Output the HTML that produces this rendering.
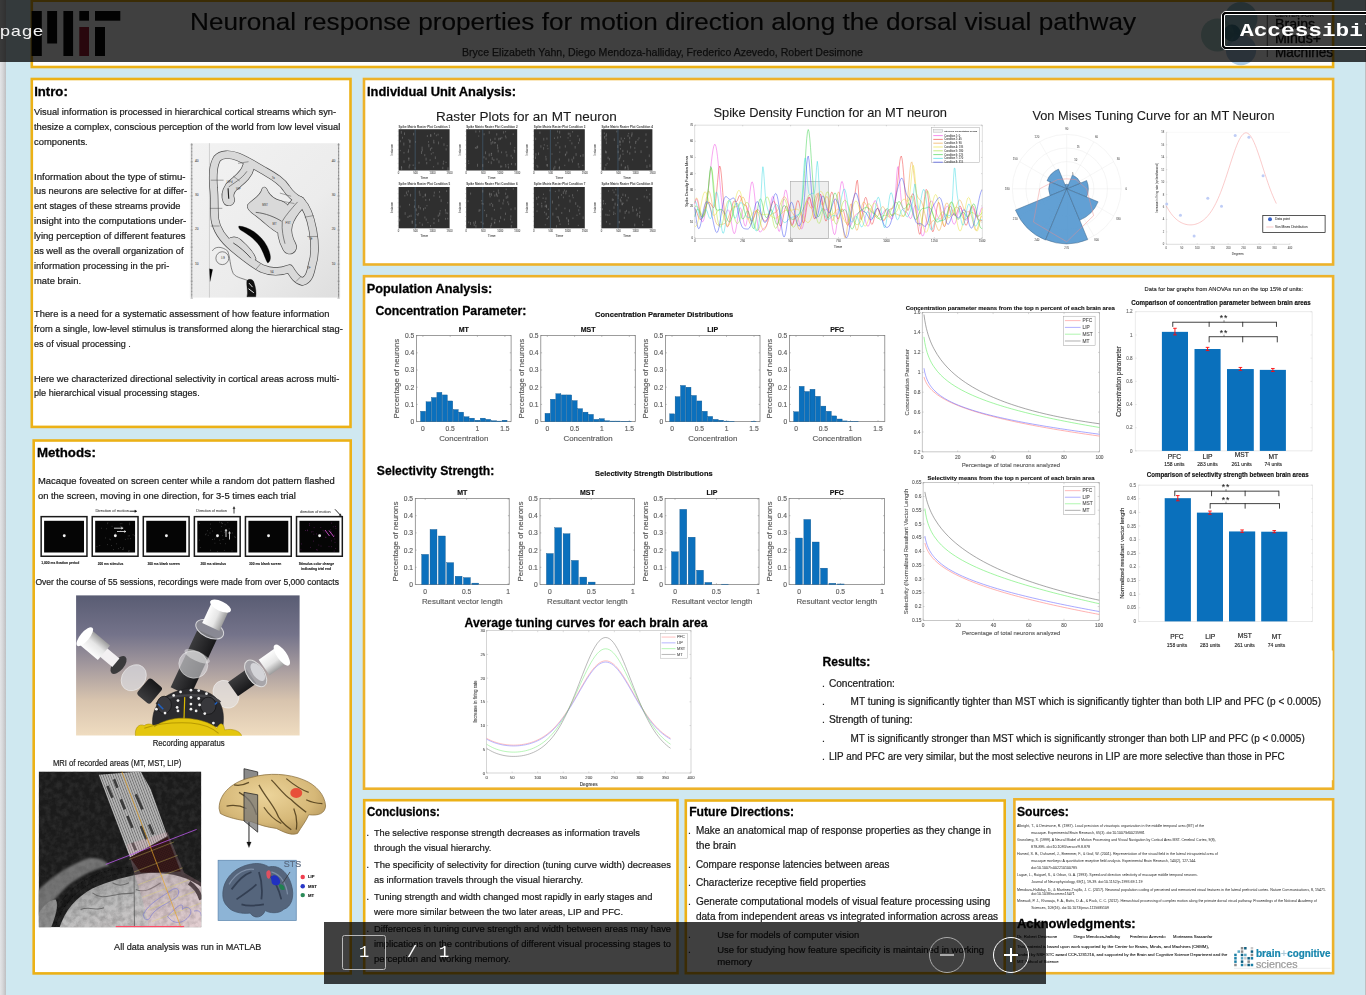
<!DOCTYPE html>
<html lang="en"><head><meta charset="utf-8"><title>Neuronal response properties for motion direction along the dorsal visual pathway</title>
<style>
html,body{margin:0;padding:0}
body{width:1366px;height:995px;overflow:hidden;position:relative;background:#e6e7e9;font-family:"Liberation Sans",sans-serif}
#shadow{position:absolute;left:0;top:0;width:6px;height:995px;background:linear-gradient(90deg,#e3e5e7 0%,#d6d7d9 45%,#bebfc1 100%)}
#paper{position:absolute;left:6px;top:0;width:1359px;height:995px;background:#cfe8f0}
#redge{position:absolute;left:1365px;top:0;width:1px;height:995px;background:#bdbfc1}
svg#poster{position:absolute;left:0;top:0;filter:blur(.38px)}
svg text{font-family:"Liberation Sans",sans-serif}
#topbar{position:absolute;left:0;top:0;width:1366px;height:61.5px;background:rgba(0,0,0,.75);color:#fff;font-family:"Liberation Mono",monospace}
#skip{position:absolute;left:-120px;width:163.4px;text-align:right;top:21.9px;font-size:14.6px;line-height:20px;white-space:nowrap;color:#f2f2f2;transform:scaleX(1.256);transform-origin:100% 50%}
#acc{position:absolute;left:1221px;top:11px;height:39px;width:240px;box-sizing:border-box;border:1px solid #fff;border-radius:5px;background:transparent;padding:0}
#acc i{position:absolute;left:0;top:0;right:0;bottom:0;border:2px solid #000;border-radius:4px;display:block}
#acc b{position:absolute;left:2px;top:2px;right:2px;bottom:2px;border:1px solid #fff;border-radius:2px;display:block;font:bold 19px/32px "Liberation Mono",monospace;color:#fff;padding-left:15px;white-space:nowrap;text-align:left}
#acc b span{display:inline-block;transform:scaleX(1.198);transform-origin:0 50%}
#botbar{position:absolute;left:324px;top:922px;width:722px;height:62px;background:rgba(0,0,0,.75);color:#fff;font-family:"Liberation Mono",monospace}
#pg{position:absolute;left:18px;top:13px;width:44px;height:35px;box-sizing:border-box;border:1px solid #b9b9b9;border-radius:2.5px;font-size:17px;line-height:33px;text-align:center;color:#fff}
#sl{position:absolute;left:80px;top:13px;width:16px;font-size:17px;line-height:35px;text-align:center}
#tot{position:absolute;left:112px;top:13px;width:16px;font-size:17px;line-height:35px;text-align:center}
.zb{position:absolute;top:15px;width:36px;height:36px;box-sizing:border-box;border-radius:50%;border:1.3px solid #fff}
.zb:before{content:"";position:absolute;left:10px;top:16.4px;width:14px;height:2px;background:#fff}
#zin:after{content:"";position:absolute;left:16px;top:10.4px;width:2px;height:14px;background:#fff}
#zout{left:605px;border-color:#a9a9a9}
#zout:before{background:#a9a9a9}
#zin{left:668.5px}
</style></head>
<body>
<div id="shadow"></div><div id="paper"></div><div id="redge"></div>
<svg id="poster" width="1366" height="995" viewBox="0 0 1366 995">
<rect x="31.8" y="0.7" width="1301.3" height="66.3" fill="#fff" stroke="#ecb116" stroke-width="2.6" />
<rect x="31.8" y="79" width="318.7" height="347.9" fill="#fff" stroke="#ecb116" stroke-width="2.6" />
<rect x="33.7" y="440.5" width="317" height="532.9" fill="#fff" stroke="#ecb116" stroke-width="2.6" />
<rect x="364" y="79" width="969.1" height="185.5" fill="#fff" stroke="#edb22a" stroke-width="2.6" />
<rect x="364" y="276.2" width="969.1" height="512.5" fill="#fff" stroke="#edb22a" stroke-width="2.6" />
<rect x="364.2" y="800.2" width="313.3" height="173" fill="#fff" stroke="#ecb116" stroke-width="2.6" />
<rect x="685.8" y="800.5" width="318.9" height="172.7" fill="#fff" stroke="#ecb116" stroke-width="2.6" />
<rect x="1014.4" y="799.3" width="318.7" height="173.9" fill="#fff" stroke="#edb22a" stroke-width="2.6" />
<rect x="31.6" y="11" width="10.2" height="45" fill="#0a0a0a" />
<rect x="47.2" y="11" width="9.9" height="32.5" fill="#0a0a0a" />
<rect x="63.4" y="11" width="9.7" height="45" fill="#0a0a0a" />
<rect x="79.3" y="11" width="9.7" height="9.7" fill="#0a0a0a" />
<rect x="79.3" y="27" width="9.7" height="29" fill="#a31f34" />
<rect x="95" y="11" width="25.3" height="9.7" fill="#0a0a0a" />
<rect x="95" y="27" width="10" height="29" fill="#0a0a0a" />
<text x="190" y="30.4" font-size="24.4" textLength="946" lengthAdjust="spacingAndGlyphs" fill="#111" stroke="#111" stroke-width="0.15">Neuronal response properties for motion direction along the dorsal visual pathway</text>
<text x="462" y="56" font-size="11.3" textLength="401" lengthAdjust="spacingAndGlyphs" fill="#333" stroke="#333" stroke-width="0.25">Bryce Elizabeth Yahn, Diego Mendoza-halliday, Frederico Azevedo, Robert Desimone</text>
<defs><pattern id="dots" width="1.6" height="1.6" patternUnits="userSpaceOnUse"><circle cx=".8" cy=".8" r=".62" fill="#fff" fill-opacity=".25"/></pattern></defs>
<g><circle cx="1241" cy="18.5" r="16.5" fill="#1c7a94" fill-opacity=".5"/><circle cx="1217.5" cy="35" r="16.5" fill="#3a8e86" fill-opacity=".42"/><circle cx="1241" cy="50" r="15.2" fill="#3f86c4" fill-opacity=".5"/><circle cx="1232" cy="33" r="8.5" fill="#0d5a72" fill-opacity=".75"/><circle cx="1241" cy="18.5" r="16.5" fill="url(#dots)"/><circle cx="1217.5" cy="35" r="16.5" fill="url(#dots)"/><circle cx="1241" cy="50" r="15.2" fill="url(#dots)"/></g>
<line x1="1267.3" y1="14" x2="1267.3" y2="57" stroke="#444" stroke-width="0.8" />
<text x="1275" y="16.5" font-size="4.6" textLength="39" lengthAdjust="spacingAndGlyphs" fill="#333" stroke="#333" stroke-width="0.1">CENTER FOR</text>
<text x="1275" y="28.6" font-size="14.2" fill="#111" stroke="#111" stroke-width="0.31">Brains</text>
<text x="1275" y="43" font-size="14.2" fill="#111" stroke="#111" stroke-width="0.31">Minds+</text>
<text x="1275" y="57.2" font-size="14.2" textLength="58" lengthAdjust="spacingAndGlyphs" fill="#111" stroke="#111" stroke-width="0.31">Machines</text>
<text x="34.2" y="95.6" font-size="13.2" textLength="33.6" lengthAdjust="spacingAndGlyphs" font-weight="bold" fill="#000" stroke="#000" stroke-width="0.29">Intro:</text>
<text x="34" y="114.85" font-size="9.25" textLength="302.1" lengthAdjust="spacingAndGlyphs" fill="#1a1a1a" stroke="#1a1a1a" stroke-width="0.2">Visual information is processed in hierarchical cortical streams which syn-</text>
<text x="34" y="129.75" font-size="9.25" textLength="306.3" lengthAdjust="spacingAndGlyphs" fill="#1a1a1a" stroke="#1a1a1a" stroke-width="0.2">thesize a complex, conscious perception of the world from low level visual</text>
<text x="34" y="144.6" font-size="9.25" textLength="53.7" lengthAdjust="spacingAndGlyphs" fill="#1a1a1a" stroke="#1a1a1a" stroke-width="0.2">components.</text>
<text x="34" y="179.5" font-size="9.25" textLength="151.5" lengthAdjust="spacingAndGlyphs" fill="#1a1a1a" stroke="#1a1a1a" stroke-width="0.2">Information about the type of stimu-</text>
<text x="34" y="194.4" font-size="9.25" textLength="153.2" lengthAdjust="spacingAndGlyphs" fill="#1a1a1a" stroke="#1a1a1a" stroke-width="0.2">lus neurons are selective for at differ-</text>
<text x="34" y="209.3" font-size="9.25" textLength="146.5" lengthAdjust="spacingAndGlyphs" fill="#1a1a1a" stroke="#1a1a1a" stroke-width="0.2">ent stages of these streams provide</text>
<text x="34" y="224.15" font-size="9.25" textLength="152.3" lengthAdjust="spacingAndGlyphs" fill="#1a1a1a" stroke="#1a1a1a" stroke-width="0.2">insight into the computations under-</text>
<text x="34" y="239" font-size="9.25" textLength="151.5" lengthAdjust="spacingAndGlyphs" fill="#1a1a1a" stroke="#1a1a1a" stroke-width="0.2">lying perception of different features</text>
<text x="34" y="253.9" font-size="9.25" textLength="149.5" lengthAdjust="spacingAndGlyphs" fill="#1a1a1a" stroke="#1a1a1a" stroke-width="0.2">as well as the overall organization of</text>
<text x="34" y="268.75" font-size="9.25" textLength="135.3" lengthAdjust="spacingAndGlyphs" fill="#1a1a1a" stroke="#1a1a1a" stroke-width="0.2">information processing in the pri-</text>
<text x="34" y="283.6" font-size="9.25" textLength="47" lengthAdjust="spacingAndGlyphs" fill="#1a1a1a" stroke="#1a1a1a" stroke-width="0.2">mate brain.</text>
<text x="34" y="317.4" font-size="9.25" textLength="295.4" lengthAdjust="spacingAndGlyphs" fill="#1a1a1a" stroke="#1a1a1a" stroke-width="0.2">There is a need for a systematic assessment of how feature information</text>
<text x="34" y="332.3" font-size="9.25" textLength="308.8" lengthAdjust="spacingAndGlyphs" fill="#1a1a1a" stroke="#1a1a1a" stroke-width="0.2">from a single, low-level stimulus is transformed along the hierarchical stag-</text>
<text x="34" y="347.2" font-size="9.25" textLength="96.8" lengthAdjust="spacingAndGlyphs" fill="#1a1a1a" stroke="#1a1a1a" stroke-width="0.2">es of visual processing .</text>
<text x="34" y="381.6" font-size="9.25" textLength="305.3" lengthAdjust="spacingAndGlyphs" fill="#1a1a1a" stroke="#1a1a1a" stroke-width="0.2">Here we characterized directional selectivity in cortical areas across multi-</text>
<text x="34" y="396.4" font-size="9.25" textLength="165.7" lengthAdjust="spacingAndGlyphs" fill="#1a1a1a" stroke="#1a1a1a" stroke-width="0.2">ple hierarchical visual processing stages.</text>
<g transform="translate(185,140) scale(0.16080)">
<defs><linearGradient id="pap" x1="0" y1="0" x2="1" y2="1"><stop offset="0" stop-color="#f2f2f2"/><stop offset=".6" stop-color="#ececec"/><stop offset="1" stop-color="#dedede"/></linearGradient></defs>
<rect x="30" y="20" width="935" height="960" fill="url(#pap)" />
<line x1="42" y1="20" x2="42" y2="980" stroke="#777" stroke-width="4" />
<line x1="35" y1="30" x2="49" y2="30" stroke="#666" stroke-width="3" />
<line x1="38.5" y1="51.2" x2="45.5" y2="51.2" stroke="#666" stroke-width="3" />
<line x1="38.5" y1="72.4" x2="45.5" y2="72.4" stroke="#666" stroke-width="3" />
<line x1="38.5" y1="93.6" x2="45.5" y2="93.6" stroke="#666" stroke-width="3" />
<line x1="38.5" y1="114.8" x2="45.5" y2="114.8" stroke="#666" stroke-width="3" />
<line x1="35" y1="136" x2="49" y2="136" stroke="#666" stroke-width="3" />
<line x1="38.5" y1="157.2" x2="45.5" y2="157.2" stroke="#666" stroke-width="3" />
<line x1="38.5" y1="178.4" x2="45.5" y2="178.4" stroke="#666" stroke-width="3" />
<line x1="38.5" y1="199.6" x2="45.5" y2="199.6" stroke="#666" stroke-width="3" />
<line x1="38.5" y1="220.8" x2="45.5" y2="220.8" stroke="#666" stroke-width="3" />
<line x1="35" y1="242" x2="49" y2="242" stroke="#666" stroke-width="3" />
<line x1="38.5" y1="263.2" x2="45.5" y2="263.2" stroke="#666" stroke-width="3" />
<line x1="38.5" y1="284.4" x2="45.5" y2="284.4" stroke="#666" stroke-width="3" />
<line x1="38.5" y1="305.6" x2="45.5" y2="305.6" stroke="#666" stroke-width="3" />
<line x1="38.5" y1="326.8" x2="45.5" y2="326.8" stroke="#666" stroke-width="3" />
<line x1="35" y1="348" x2="49" y2="348" stroke="#666" stroke-width="3" />
<line x1="38.5" y1="369.2" x2="45.5" y2="369.2" stroke="#666" stroke-width="3" />
<line x1="38.5" y1="390.4" x2="45.5" y2="390.4" stroke="#666" stroke-width="3" />
<line x1="38.5" y1="411.6" x2="45.5" y2="411.6" stroke="#666" stroke-width="3" />
<line x1="38.5" y1="432.8" x2="45.5" y2="432.8" stroke="#666" stroke-width="3" />
<line x1="35" y1="454" x2="49" y2="454" stroke="#666" stroke-width="3" />
<line x1="38.5" y1="475.2" x2="45.5" y2="475.2" stroke="#666" stroke-width="3" />
<line x1="38.5" y1="496.4" x2="45.5" y2="496.4" stroke="#666" stroke-width="3" />
<line x1="38.5" y1="517.6" x2="45.5" y2="517.6" stroke="#666" stroke-width="3" />
<line x1="38.5" y1="538.8" x2="45.5" y2="538.8" stroke="#666" stroke-width="3" />
<line x1="35" y1="560" x2="49" y2="560" stroke="#666" stroke-width="3" />
<line x1="38.5" y1="581.2" x2="45.5" y2="581.2" stroke="#666" stroke-width="3" />
<line x1="38.5" y1="602.4" x2="45.5" y2="602.4" stroke="#666" stroke-width="3" />
<line x1="38.5" y1="623.6" x2="45.5" y2="623.6" stroke="#666" stroke-width="3" />
<line x1="38.5" y1="644.8" x2="45.5" y2="644.8" stroke="#666" stroke-width="3" />
<line x1="35" y1="666" x2="49" y2="666" stroke="#666" stroke-width="3" />
<line x1="38.5" y1="687.2" x2="45.5" y2="687.2" stroke="#666" stroke-width="3" />
<line x1="38.5" y1="708.4" x2="45.5" y2="708.4" stroke="#666" stroke-width="3" />
<line x1="38.5" y1="729.6" x2="45.5" y2="729.6" stroke="#666" stroke-width="3" />
<line x1="38.5" y1="750.8" x2="45.5" y2="750.8" stroke="#666" stroke-width="3" />
<line x1="35" y1="772" x2="49" y2="772" stroke="#666" stroke-width="3" />
<line x1="38.5" y1="793.2" x2="45.5" y2="793.2" stroke="#666" stroke-width="3" />
<line x1="38.5" y1="814.4" x2="45.5" y2="814.4" stroke="#666" stroke-width="3" />
<line x1="38.5" y1="835.6" x2="45.5" y2="835.6" stroke="#666" stroke-width="3" />
<line x1="38.5" y1="856.8" x2="45.5" y2="856.8" stroke="#666" stroke-width="3" />
<line x1="35" y1="878" x2="49" y2="878" stroke="#666" stroke-width="3" />
<line x1="38.5" y1="899.2" x2="45.5" y2="899.2" stroke="#666" stroke-width="3" />
<line x1="38.5" y1="920.4" x2="45.5" y2="920.4" stroke="#666" stroke-width="3" />
<line x1="38.5" y1="941.6" x2="45.5" y2="941.6" stroke="#666" stroke-width="3" />
<line x1="38.5" y1="962.8" x2="45.5" y2="962.8" stroke="#666" stroke-width="3" />
<line x1="35" y1="984" x2="49" y2="984" stroke="#666" stroke-width="3" />
<line x1="955" y1="20" x2="955" y2="980" stroke="#777" stroke-width="4" />
<line x1="948" y1="30" x2="962" y2="30" stroke="#666" stroke-width="3" />
<line x1="951.5" y1="51.2" x2="958.5" y2="51.2" stroke="#666" stroke-width="3" />
<line x1="951.5" y1="72.4" x2="958.5" y2="72.4" stroke="#666" stroke-width="3" />
<line x1="951.5" y1="93.6" x2="958.5" y2="93.6" stroke="#666" stroke-width="3" />
<line x1="951.5" y1="114.8" x2="958.5" y2="114.8" stroke="#666" stroke-width="3" />
<line x1="948" y1="136" x2="962" y2="136" stroke="#666" stroke-width="3" />
<line x1="951.5" y1="157.2" x2="958.5" y2="157.2" stroke="#666" stroke-width="3" />
<line x1="951.5" y1="178.4" x2="958.5" y2="178.4" stroke="#666" stroke-width="3" />
<line x1="951.5" y1="199.6" x2="958.5" y2="199.6" stroke="#666" stroke-width="3" />
<line x1="951.5" y1="220.8" x2="958.5" y2="220.8" stroke="#666" stroke-width="3" />
<line x1="948" y1="242" x2="962" y2="242" stroke="#666" stroke-width="3" />
<line x1="951.5" y1="263.2" x2="958.5" y2="263.2" stroke="#666" stroke-width="3" />
<line x1="951.5" y1="284.4" x2="958.5" y2="284.4" stroke="#666" stroke-width="3" />
<line x1="951.5" y1="305.6" x2="958.5" y2="305.6" stroke="#666" stroke-width="3" />
<line x1="951.5" y1="326.8" x2="958.5" y2="326.8" stroke="#666" stroke-width="3" />
<line x1="948" y1="348" x2="962" y2="348" stroke="#666" stroke-width="3" />
<line x1="951.5" y1="369.2" x2="958.5" y2="369.2" stroke="#666" stroke-width="3" />
<line x1="951.5" y1="390.4" x2="958.5" y2="390.4" stroke="#666" stroke-width="3" />
<line x1="951.5" y1="411.6" x2="958.5" y2="411.6" stroke="#666" stroke-width="3" />
<line x1="951.5" y1="432.8" x2="958.5" y2="432.8" stroke="#666" stroke-width="3" />
<line x1="948" y1="454" x2="962" y2="454" stroke="#666" stroke-width="3" />
<line x1="951.5" y1="475.2" x2="958.5" y2="475.2" stroke="#666" stroke-width="3" />
<line x1="951.5" y1="496.4" x2="958.5" y2="496.4" stroke="#666" stroke-width="3" />
<line x1="951.5" y1="517.6" x2="958.5" y2="517.6" stroke="#666" stroke-width="3" />
<line x1="951.5" y1="538.8" x2="958.5" y2="538.8" stroke="#666" stroke-width="3" />
<line x1="948" y1="560" x2="962" y2="560" stroke="#666" stroke-width="3" />
<line x1="951.5" y1="581.2" x2="958.5" y2="581.2" stroke="#666" stroke-width="3" />
<line x1="951.5" y1="602.4" x2="958.5" y2="602.4" stroke="#666" stroke-width="3" />
<line x1="951.5" y1="623.6" x2="958.5" y2="623.6" stroke="#666" stroke-width="3" />
<line x1="951.5" y1="644.8" x2="958.5" y2="644.8" stroke="#666" stroke-width="3" />
<line x1="948" y1="666" x2="962" y2="666" stroke="#666" stroke-width="3" />
<line x1="951.5" y1="687.2" x2="958.5" y2="687.2" stroke="#666" stroke-width="3" />
<line x1="951.5" y1="708.4" x2="958.5" y2="708.4" stroke="#666" stroke-width="3" />
<line x1="951.5" y1="729.6" x2="958.5" y2="729.6" stroke="#666" stroke-width="3" />
<line x1="951.5" y1="750.8" x2="958.5" y2="750.8" stroke="#666" stroke-width="3" />
<line x1="948" y1="772" x2="962" y2="772" stroke="#666" stroke-width="3" />
<line x1="951.5" y1="793.2" x2="958.5" y2="793.2" stroke="#666" stroke-width="3" />
<line x1="951.5" y1="814.4" x2="958.5" y2="814.4" stroke="#666" stroke-width="3" />
<line x1="951.5" y1="835.6" x2="958.5" y2="835.6" stroke="#666" stroke-width="3" />
<line x1="951.5" y1="856.8" x2="958.5" y2="856.8" stroke="#666" stroke-width="3" />
<line x1="948" y1="878" x2="962" y2="878" stroke="#666" stroke-width="3" />
<line x1="951.5" y1="899.2" x2="958.5" y2="899.2" stroke="#666" stroke-width="3" />
<line x1="951.5" y1="920.4" x2="958.5" y2="920.4" stroke="#666" stroke-width="3" />
<line x1="951.5" y1="941.6" x2="958.5" y2="941.6" stroke="#666" stroke-width="3" />
<line x1="951.5" y1="962.8" x2="958.5" y2="962.8" stroke="#666" stroke-width="3" />
<line x1="948" y1="984" x2="962" y2="984" stroke="#666" stroke-width="3" />
<line x1="152" y1="20" x2="152" y2="980" stroke="#aaa" stroke-width="3" />
<text x="62" y="138" font-size="20" fill="#555" stroke="#555" stroke-width="0.44">40</text>
<text x="912" y="138" font-size="20" fill="#555" stroke="#555" stroke-width="0.44">40</text>
<text x="62" y="350" font-size="20" fill="#555" stroke="#555" stroke-width="0.44">30</text>
<text x="912" y="350" font-size="20" fill="#555" stroke="#555" stroke-width="0.44">30</text>
<text x="62" y="562" font-size="20" fill="#555" stroke="#555" stroke-width="0.44">20</text>
<text x="912" y="562" font-size="20" fill="#555" stroke="#555" stroke-width="0.44">20</text>
<text x="62" y="776" font-size="20" fill="#555" stroke="#555" stroke-width="0.44">10</text>
<text x="912" y="776" font-size="20" fill="#555" stroke="#555" stroke-width="0.44">10</text>
<path d="M178 300 C172 220 172 160 200 115 C225 85 280 85 330 105 C380 125 420 150 480 185 C540 220 600 250 630 300 C650 330 680 360 720 380 C760 420 780 480 795 560 C810 640 810 720 790 780 C780 830 770 870 730 880 C700 875 680 850 650 800 C600 820 540 825 480 800 C420 770 360 720 300 670 C240 620 195 560 185 490 C180 420 185 360 178 300 Z" stroke="#4a4a4a" stroke-width="52" fill="none" stroke-linecap="round" stroke-linejoin="round"/>
<path d="M395 165 C380 230 320 255 285 295 C265 325 262 350 272 372" stroke="#4a4a4a" stroke-width="78" fill="none" stroke-linecap="round" stroke-linejoin="round"/>
<path d="M705 392 C670 430 640 470 625 520 C612 570 625 620 650 665" stroke="#4a4a4a" stroke-width="92" fill="none" stroke-linecap="round" stroke-linejoin="round"/>
<path d="M390 405 C420 370 470 350 480 305 C490 285 505 295 515 320 C530 350 560 370 600 380 C640 400 660 420 640 470 C625 510 600 520 585 580 C540 560 480 500 440 470 C410 450 385 430 390 405 Z" stroke="#4a4a4a" stroke-width="8" fill="#4a4a4a" />
<path d="M265 620 C290 600 320 600 345 620 C390 660 430 700 440 740 C420 760 390 745 365 725 C330 700 290 660 265 620 Z" stroke="#4a4a4a" stroke-width="8" fill="#4a4a4a" />
<path d="M178 300 C172 220 172 160 200 115 C225 85 280 85 330 105 C380 125 420 150 480 185 C540 220 600 250 630 300 C650 330 680 360 720 380 C760 420 780 480 795 560 C810 640 810 720 790 780 C780 830 770 870 730 880 C700 875 680 850 650 800 C600 820 540 825 480 800 C420 770 360 720 300 670 C240 620 195 560 185 490 C180 420 185 360 178 300 Z" stroke="#d9d9d9" stroke-width="44" fill="none" stroke-linecap="round" stroke-linejoin="round"/>
<path d="M395 165 C380 230 320 255 285 295 C265 325 262 350 272 372" stroke="#d9d9d9" stroke-width="70" fill="none" stroke-linecap="round" stroke-linejoin="round"/>
<path d="M705 392 C670 430 640 470 625 520 C612 570 625 620 650 665" stroke="#d9d9d9" stroke-width="84" fill="none" stroke-linecap="round" stroke-linejoin="round"/>
<path d="M390 405 C420 370 470 350 480 305 C490 285 505 295 515 320 C530 350 560 370 600 380 C640 400 660 420 640 470 C625 510 600 520 585 580 C540 560 480 500 440 470 C410 450 385 430 390 405 Z" stroke="none" stroke-width="1" fill="#d9d9d9" />
<path d="M265 620 C290 600 320 600 345 620 C390 660 430 700 440 740 C420 760 390 745 365 725 C330 700 290 660 265 620 Z" stroke="none" stroke-width="1" fill="#d9d9d9" />
<path d="M440 450 C500 455 560 480 600 505" stroke="#4a4a4a" stroke-width="5" fill="none" />
<path d="M700 385 C660 430 625 470 605 505 C600 560 612 610 622 645" stroke="#4a4a4a" stroke-width="4" fill="none" />
<path d="M385 195 C350 245 300 270 272 292" stroke="#4a4a4a" stroke-width="4" fill="none" />
<path d="M268 300 L272 365" stroke="#222" stroke-width="7" fill="none" />
<path d="M300 640 C340 665 380 700 410 735" stroke="#333" stroke-width="5" fill="none" />
<path d="M335 535 C395 540 470 585 510 660 C535 710 540 750 515 765 C500 745 490 700 465 660 C430 610 380 580 345 560 C335 550 332 542 335 535 Z" stroke="#000" stroke-width="2" fill="#050505" />
<circle cx="232" cy="735" r="40" fill="none" stroke="#4a4a4a" stroke-width="4"/>
<path d="M170 690 C185 660 230 660 265 690 C280 720 280 790 300 830 C320 860 370 860 400 880" stroke="#4a4a4a" stroke-width="4" fill="none" />
<path d="M152 800 L172 805 L156 880 Z" stroke="#000" stroke-width="1" fill="#000" />
<path d="M385 875 C400 860 425 865 430 890 C440 920 445 950 440 975 L385 975 C395 950 380 900 385 875 Z" stroke="#000" stroke-width="2" fill="#111" />
<path d="M398 890 L420 915 M395 925 L428 950" stroke="#eee" stroke-width="6" fill="none" />
<line x1="155" y1="425" x2="232" y2="425" stroke="#4a4a4a" stroke-width="3" />
<line x1="160" y1="535" x2="215" y2="535" stroke="#4a4a4a" stroke-width="3" />
<line x1="590" y1="330" x2="660" y2="350" stroke="#4a4a4a" stroke-width="3" />
<line x1="600" y1="380" x2="680" y2="395" stroke="#4a4a4a" stroke-width="3" />
<line x1="440" y1="805" x2="470" y2="770" stroke="#4a4a4a" stroke-width="3" />
<line x1="760" y1="600" x2="825" y2="600" stroke="#4a4a4a" stroke-width="3" />
<line x1="745" y1="480" x2="800" y2="470" stroke="#4a4a4a" stroke-width="3" />
<line x1="690" y1="880" x2="720" y2="850" stroke="#4a4a4a" stroke-width="3" />
<line x1="300" y1="225" x2="340" y2="255" stroke="#4a4a4a" stroke-width="3" />
<line x1="330" y1="145" x2="395" y2="135" stroke="#4a4a4a" stroke-width="3" />
<line x1="160" y1="250" x2="240" y2="250" stroke="#4a4a4a" stroke-width="3" />
<text x="480" y="410" font-size="17" fill="#555" stroke="#555" stroke-width="0.37">MST</text>
<text x="545" y="530" font-size="17" fill="#555" stroke="#555" stroke-width="0.37">MT</text>
<text x="625" y="520" font-size="17" fill="#555" stroke="#555" stroke-width="0.37">FST</text>
<text x="260" y="265" font-size="17" fill="#555" stroke="#555" stroke-width="0.37">LIPd</text>
<text x="318" y="310" font-size="17" fill="#555" stroke="#555" stroke-width="0.37">VIP</text>
<text x="540" y="240" font-size="17" fill="#555" stroke="#555" stroke-width="0.37">7a</text>
<text x="770" y="625" font-size="17" fill="#555" stroke="#555" stroke-width="0.37">TE</text>
<text x="760" y="800" font-size="17" fill="#555" stroke="#555" stroke-width="0.37">TF</text>
<text x="530" y="828" font-size="17" fill="#555" stroke="#555" stroke-width="0.37">V4</text>
<text x="225" y="740" font-size="17" fill="#555" stroke="#555" stroke-width="0.37">LG</text>
</g>
<text x="36.9" y="457.4" font-size="13.2" textLength="59" lengthAdjust="spacingAndGlyphs" font-weight="bold" fill="#000" stroke="#000" stroke-width="0.29">Methods:</text>
<text x="37.9" y="484.3" font-size="9.25" textLength="296.9" lengthAdjust="spacingAndGlyphs" fill="#1a1a1a" stroke="#1a1a1a" stroke-width="0.2">Macaque foveated on screen center while a random dot pattern flashed</text>
<text x="37.9" y="499.2" font-size="9.25" textLength="257.9" lengthAdjust="spacingAndGlyphs" fill="#1a1a1a" stroke="#1a1a1a" stroke-width="0.2">on the screen, moving in one direction, for 3-5 times each trial</text>
<rect x="41.16" y="516.65" width="45.8" height="39.6" fill="#fff" stroke="#1a1a1a" stroke-width="1.5" />
<rect x="44.11" y="520.8" width="39.9" height="31.7" fill="#050505" />
<circle cx="64.26" cy="535.75" r="1.45" fill="#f4f4f4"/>
<rect x="92.23" y="516.65" width="45.8" height="39.6" fill="#fff" stroke="#1a1a1a" stroke-width="1.5" />
<rect x="95.18" y="520.8" width="39.9" height="31.7" fill="#050505" />
<path d="M105.2 537.96h.6M110.2 539.74h.6M119.89 523.75h.6M96.68 546.67h.6M106.01 528.76h.6M133.91 535.77h.6M127.88 535.95h.6M120.4 526.27h.6M120.24 547.58h.6M116.01 543.82h.6M121.62 523.7h.6M124.92 539.36h.6M107.6 522.72h.6M128.98 535.84h.6M123.42 547.9h.6M123.24 549.16h.6M111.15 545.59h.6M113.03 549.59h.6M129.49 524.69h.6M101.33 528.24h.6M132.77 534.75h.6M119.93 530.74h.6M115.4 533.26h.6M109.48 539.18h.6M118.32 548.65h.6M122.03 549.39h.6M128.64 551.23h.6M121.62 526.64h.6M128.8 550.45h.6M130.47 538.7h.6M123.23 528.07h.6M127.7 538.83h.6M106.98 523.68h.6M128.54 551.2h.6M99.53 545.58h.6M111.73 526.28h.6M107.32 544.63h.6M129.26 523.11h.6" stroke="#9a9a9a" stroke-width="0.6" fill="none" opacity=".8"/>
<circle cx="115.33" cy="535.75" r="1.45" fill="#f4f4f4"/>
<rect x="143.3" y="516.65" width="45.8" height="39.6" fill="#fff" stroke="#1a1a1a" stroke-width="1.5" />
<rect x="146.25" y="520.8" width="39.9" height="31.7" fill="#050505" />
<circle cx="166.4" cy="535.75" r="1.45" fill="#f4f4f4"/>
<rect x="194.37" y="516.65" width="45.8" height="39.6" fill="#fff" stroke="#1a1a1a" stroke-width="1.5" />
<rect x="197.32" y="520.8" width="39.9" height="31.7" fill="#050505" />
<path d="M221.61 523.13h.6M225.55 531.63h.6M231.71 550.92h.6M217.47 551.46h.6M210.06 524.09h.6M221.05 522.73h.6M205.8 533.92h.6M221.46 526.44h.6M199.93 547.57h.6M210.21 550.27h.6M232.3 533.02h.6M215.77 537.25h.6M222.72 539.49h.6M219.51 540.22h.6M233.97 536.86h.6M214.66 543.19h.6M207.33 530.74h.6M235.38 537.28h.6M219.1 522.14h.6M214.06 539.02h.6M199.08 540.09h.6M222.28 523.58h.6M222.09 535.65h.6M224.06 532.27h.6M225.11 543.72h.6M199.16 523.6h.6M223.94 550.41h.6M207.84 535.35h.6M220.78 531.3h.6M212.11 531.09h.6M212.31 539.49h.6M209.7 533h.6M227.59 522.6h.6M219.89 543.63h.6M210.07 528.41h.6M228.78 528.89h.6M205.42 534.73h.6M224.78 524.82h.6" stroke="#9a9a9a" stroke-width="0.6" fill="none" opacity=".8"/>
<circle cx="217.47" cy="535.75" r="1.45" fill="#f4f4f4"/>
<rect x="245.44" y="516.65" width="45.8" height="39.6" fill="#fff" stroke="#1a1a1a" stroke-width="1.5" />
<rect x="248.39" y="520.8" width="39.9" height="31.7" fill="#050505" />
<circle cx="268.54" cy="535.75" r="1.45" fill="#f4f4f4"/>
<rect x="296.51" y="516.65" width="45.8" height="39.6" fill="#fff" stroke="#1a1a1a" stroke-width="1.5" />
<rect x="299.46" y="520.8" width="39.9" height="31.7" fill="#050505" />
<path d="M312.66 531.71h.6M332.05 534.82h.6M332.88 526.83h.6M313.22 541.11h.6M334 535.2h.6M308.99 525.39h.6M320.53 527.47h.6M331.04 546.7h.6M307.42 530.07h.6M331.05 540.87h.6M331.02 532.05h.6M305.37 530.47h.6M330.55 529.85h.6M313.59 534.18h.6M316.37 533.96h.6M335.35 526.43h.6M300.64 549.82h.6M333.81 551.11h.6M316.92 550.02h.6M335.61 528.4h.6M328.71 546.65h.6M325.59 537.21h.6M311.41 531.93h.6M309.08 523.82h.6M322.77 530.32h.6M331.17 523.14h.6M334.71 542.4h.6M335.47 548.43h.6M334.56 538.94h.6M300.96 543.94h.6M306.97 530.71h.6M325.58 537.39h.6M316.14 549.69h.6M323.66 531.94h.6M310.03 547.39h.6M318.54 545.04h.6M313.79 527.66h.6M320.72 546.06h.6" stroke="#c040c0" stroke-width="0.6" fill="none" opacity=".8"/>
<circle cx="319.61" cy="535.75" r="1.45" fill="#f4f4f4"/>
<path d="M114 528.2h9 M117 531.5h9" stroke="#ddd" stroke-width="0.9" fill="none" />
<path d="M123 528.2l-1.6 -1 v2z M126 531.5l-1.6 -1 v2z" stroke="#ddd" stroke-width="0.4" fill="#ddd" />
<path d="M226 537v-7 M229.5 539.5v-7" stroke="#ddd" stroke-width="0.9" fill="none" />
<path d="M226 529l-1 1.8h2z M229.5 531.5l-1 1.8h2z" stroke="#ddd" stroke-width="0.4" fill="#ddd" />
<path d="M325 530l4.5 6 M329 530.5l5 6.5" stroke="#d050d0" stroke-width="0.9" fill="none" />
<text x="95.4" y="512.3" font-size="3.7" textLength="33.5" lengthAdjust="spacingAndGlyphs" fill="#444" stroke="#444" stroke-width="0.08">Direction of motion</text>
<path d="M129.5 511.2h6.5" stroke="#111" stroke-width="0.9" fill="none" />
<path d="M137 511.2l-2.2 -1.2v2.4z" stroke="#111" stroke-width="0.3" fill="#111" />
<text x="196.2" y="512.3" font-size="3.7" textLength="30.8" lengthAdjust="spacingAndGlyphs" fill="#444" stroke="#444" stroke-width="0.08">Direction of motion</text>
<path d="M234 513.5v-5.5" stroke="#111" stroke-width="0.8" fill="none" />
<path d="M234 506.6l-1.1 2h2.2z" stroke="#111" stroke-width="0.3" fill="#111" />
<text x="300" y="512.6" font-size="3.7" textLength="30.6" lengthAdjust="spacingAndGlyphs" fill="#444" stroke="#444" stroke-width="0.08">direction of motion</text>
<path d="M335 509.3l5.2 5.6" stroke="#111" stroke-width="0.9" fill="none" />
<path d="M341.3 516l-2.3 -.8 1.5-1.5z" stroke="#111" stroke-width="0.3" fill="#111" />
<text x="41.2" y="564.4" font-size="3.7" textLength="38" lengthAdjust="spacingAndGlyphs" font-weight="bold" fill="#111" stroke="#111" stroke-width="0.08">1,000 ms fixation period</text>
<text x="97.7" y="564.9" font-size="3.7" textLength="25.6" lengthAdjust="spacingAndGlyphs" font-weight="bold" fill="#111" stroke="#111" stroke-width="0.08">200 ms stimulus</text>
<text x="147.4" y="564.9" font-size="3.7" textLength="32.4" lengthAdjust="spacingAndGlyphs" font-weight="bold" fill="#111" stroke="#111" stroke-width="0.08">300 ms blank screen</text>
<text x="200.4" y="564.9" font-size="3.7" textLength="25.7" lengthAdjust="spacingAndGlyphs" font-weight="bold" fill="#111" stroke="#111" stroke-width="0.08">200 ms stimulus</text>
<text x="249" y="564.9" font-size="3.7" textLength="32.3" lengthAdjust="spacingAndGlyphs" font-weight="bold" fill="#111" stroke="#111" stroke-width="0.08">300 ms blank screen</text>
<text x="298.7" y="564.6" font-size="3.7" textLength="35.4" lengthAdjust="spacingAndGlyphs" font-weight="bold" fill="#111" stroke="#111" stroke-width="0.08">Stimulus color change</text>
<text x="301.2" y="570.2" font-size="3.7" textLength="29.9" lengthAdjust="spacingAndGlyphs" font-weight="bold" fill="#111" stroke="#111" stroke-width="0.08">indicating trial end</text>
<text x="35.4" y="584.8" font-size="9.25" textLength="303.6" lengthAdjust="spacingAndGlyphs" fill="#1a1a1a" stroke="#1a1a1a" stroke-width="0.2">Over the course of 55 sessions, recordings were made from over 5,000 contacts</text>
<g transform="translate(70,590) scale(0.17277)">
<defs>
<linearGradient id="apbg" x1="0" y1="0" x2="0" y2="1"><stop offset="0" stop-color="#595c73"/><stop offset=".28" stop-color="#74738a"/><stop offset=".52" stop-color="#a79c9f"/><stop offset=".75" stop-color="#d8c4ae"/><stop offset="1" stop-color="#efdcc0"/></linearGradient>
<linearGradient id="cylw" x1="0" y1="0" x2="1" y2="0"><stop offset="0" stop-color="#fdfdfd"/><stop offset=".55" stop-color="#e6e6e6"/><stop offset="1" stop-color="#9c9c9c"/></linearGradient>
<linearGradient id="cyld" x1="0" y1="0" x2="1" y2="0"><stop offset="0" stop-color="#3c3c3e"/><stop offset=".5" stop-color="#2a2a2c"/><stop offset="1" stop-color="#18181a"/></linearGradient>
<clipPath id="apclip"><rect x="35" y="30" width="1295" height="813"/></clipPath>
</defs>
<g clip-path="url(#apclip)">
<rect x="35" y="30" width="1295" height="813" fill="url(#apbg)" />
<g transform="rotate(25 690 470)">
<rect x="632" y="230" width="125" height="370" fill="url(#cyld)" />
<ellipse cx="695" cy="425" rx="85" ry="78" fill="#d8d8dc" fill-opacity=".62" stroke="#eee" stroke-opacity=".5" stroke-width="5"/>
<ellipse cx="695" cy="372" rx="80" ry="28" fill="#eeeeee" fill-opacity=".5"/>
<ellipse cx="695" cy="200" rx="86" ry="48" fill="#8e8e96" fill-opacity=".8" stroke="#d4d4d8" stroke-width="6"/>
<rect x="640" y="55" width="110" height="130" fill="url(#cylw)" />
<ellipse cx="695" cy="52" rx="66" ry="28" fill="#fff"/>
</g>
<g transform="rotate(-50 300 450)">
<rect x="238" y="610" width="124" height="100" fill="url(#cyld)" rx="18"/>
<ellipse cx="300" cy="540" rx="82" ry="66" fill="#dcdce0" fill-opacity=".7" stroke="#f2f2f2" stroke-opacity=".6" stroke-width="5"/>
<ellipse cx="300" cy="425" rx="62" ry="32" fill="#3a3a3c"/>
<rect x="268" y="310" width="64" height="95" fill="#f3f0f2" />
<rect x="245" y="175" width="110" height="140" fill="url(#cylw)" />
<ellipse cx="300" cy="170" rx="68" ry="26" fill="#fff"/>
</g>
<g transform="rotate(55 1050 500)">
<ellipse cx="1050" cy="680" rx="85" ry="70" fill="#e4e2e0" fill-opacity=".75" stroke="#f4f4f4" stroke-opacity=".6" stroke-width="5"/>
<rect x="1000" y="500" width="100" height="130" fill="url(#cyld)" />
<ellipse cx="1050" cy="470" rx="88" ry="48" fill="#a4a4aa" fill-opacity=".85" stroke="#dcdcdc" stroke-width="6"/>
<ellipse cx="1050" cy="455" rx="60" ry="30" fill="#d4d4d8"/>
<rect x="995" y="290" width="110" height="120" fill="url(#cylw)" />
<ellipse cx="1050" cy="285" rx="72" ry="28" fill="#fff"/>
</g>
<path d="M478 790 C470 680 520 600 680 570 C830 575 905 640 885 790 Z" stroke="#1c1c1e" stroke-width="3" fill="#2b2b2e" />
<path d="M500 660 C560 600 800 590 870 650" stroke="#444448" stroke-width="14" fill="none" />
<ellipse cx="545" cy="665" rx="42" ry="50" fill="#3a3a3e" stroke="#18181a" stroke-width="5"/>
<ellipse cx="800" cy="670" rx="45" ry="50" fill="#38383c" stroke="#18181a" stroke-width="5"/>
<circle cx="600" cy="610" r="8" fill="#f0f0f0"/>
<circle cx="640" cy="590" r="8" fill="#f0f0f0"/>
<circle cx="700" cy="580" r="8" fill="#f0f0f0"/>
<circle cx="745" cy="582" r="8" fill="#f0f0f0"/>
<circle cx="790" cy="600" r="8" fill="#f0f0f0"/>
<circle cx="625" cy="640" r="8" fill="#f0f0f0"/>
<circle cx="700" cy="622" r="8" fill="#f0f0f0"/>
<circle cx="745" cy="628" r="8" fill="#f0f0f0"/>
<circle cx="620" cy="680" r="8" fill="#f0f0f0"/>
<circle cx="700" cy="660" r="8" fill="#f0f0f0"/>
<circle cx="750" cy="665" r="8" fill="#f0f0f0"/>
<circle cx="625" cy="700" r="8" fill="#f0f0f0"/>
<circle cx="700" cy="690" r="8" fill="#f0f0f0"/>
<circle cx="730" cy="700" r="8" fill="#f0f0f0"/>
<circle cx="550" cy="712" r="8" fill="#f0f0f0"/>
<circle cx="780" cy="715" r="8" fill="#f0f0f0"/>
<circle cx="500" cy="690" r="8" fill="#f0f0f0"/>
<circle cx="830" cy="770" r="8" fill="#f0f0f0"/>
<line x1="664" y1="620" x2="660" y2="745" stroke="#d8b800" stroke-width="7" />
<line x1="510" y1="660" x2="540" y2="690" stroke="#2060c0" stroke-width="9" />
<line x1="838" y1="663" x2="852" y2="650" stroke="#2060c0" stroke-width="9" />
<path d="M380 850 C370 800 400 770 430 785 C450 770 480 775 490 790 C540 755 600 740 660 742 C740 745 810 765 850 800 C870 760 890 770 895 810 C940 800 990 815 995 850 Z" stroke="#a88c00" stroke-width="3" fill="#e4c60e" />
<path d="M430 800 C520 770 600 765 700 770 C760 775 820 795 860 830" stroke="#b89a00" stroke-width="6" fill="none" />
</g></g>
<text x="152.7" y="745.5" font-size="8.3" textLength="71.9" lengthAdjust="spacingAndGlyphs" fill="#1a1a1a" stroke="#1a1a1a" stroke-width="0.18">Recording apparatus</text>
<text x="52.9" y="766.2" font-size="8.3" textLength="128.4" lengthAdjust="spacingAndGlyphs" fill="#1a1a1a" stroke="#1a1a1a" stroke-width="0.18">MRI of recorded areas (MT, MST, LIP)</text>
<g transform="translate(34,766) scale(0.16683)">
<defs>
<clipPath id="mriclip"><rect x="28" y="33" width="975" height="934"/></clipPath>
<filter id="blur6" x="-10%" y="-10%" width="120%" height="120%"><feGaussianBlur stdDeviation="7"/></filter>
<filter id="mrinoise" x="0" y="0" width="100%" height="100%"><feTurbulence type="fractalNoise" baseFrequency="0.03" numOctaves="3" seed="4"/><feColorMatrix type="matrix" values="0 0 0 0 0.08  0 0 0 0 0.08  0 0 0 0 0.08  2.2 0 0 0 -0.75"/></filter>
<filter id="blur3"><feGaussianBlur stdDeviation="3.5"/></filter>
<pattern id="stripes" width="14" height="40" patternUnits="userSpaceOnUse" patternTransform="rotate(-21)"><rect width="14" height="40" fill="#a6a6a6"/><rect x="0" width="4" height="40" fill="#6a6a6a"/><rect x="8" width="3" height="40" fill="#d2d2d2"/></pattern>
<pattern id="mesh" width="10" height="10" patternUnits="userSpaceOnUse" patternTransform="rotate(-21)"><rect width="10" height="10" fill="#2a1414"/><path d="M0 0H10M0 0V10" stroke="#6a2c2c" stroke-width="1.6"/></pattern>
<linearGradient id="brg" x1="0" y1="0" x2="1" y2="1"><stop offset="0" stop-color="#8c8c8c"/><stop offset=".45" stop-color="#bcbcbc"/><stop offset="1" stop-color="#ded6d6"/></linearGradient>
</defs>
<g clip-path="url(#mriclip)">
<rect x="28" y="33" width="975" height="934" fill="#1b1b1b" />
<path d="M20 750 C120 650 230 585 330 552 C390 545 440 570 450 600 C380 610 290 650 200 720 C130 790 80 850 20 900 Z" stroke="none" stroke-width="1" fill="#757575" filter="url(#blur6)"/>
<path d="M110 960 C140 860 200 760 330 690 C420 640 520 620 590 625" stroke="#121212" stroke-width="38" fill="none" filter="url(#blur3)"/>
<path d="M150 975 C190 860 250 790 350 735 C450 690 560 655 700 640 C830 640 930 670 1010 730 L1010 975 Z" stroke="none" stroke-width="1" fill="url(#brg)" filter="url(#blur3)"/>
<path d="M28 975 L28 880 C60 830 100 800 130 800 C150 830 130 900 100 975 Z" stroke="none" stroke-width="1" fill="#8e8e8e" filter="url(#blur3)"/>
<path d="M600 650 L602 967 M350 760 C400 800 440 780 500 770 C540 760 570 770 600 760 M280 860 C330 840 380 870 420 850 M610 740 C660 760 700 740 760 700 M470 700 C500 720 540 715 570 700" stroke="#6f6f6f" stroke-width="6" fill="none" filter="url(#blur3)"/>
<path d="M930 700 C960 720 990 760 1003 800" stroke="#222" stroke-width="26" fill="none" filter="url(#blur3)"/>
<rect x="28" y="33" width="975" height="934" fill="#000" filter="url(#mrinoise)" opacity=".3"/>
<path d="M388 52 L640 33 L700 140 L800 420 L575 548 Z" stroke="none" stroke-width="1" fill="url(#stripes)" />
<path d="M440 120 l30 70 M520 200 l25 60 M610 170 l40 90 M560 300 l30 70 M640 360 l35 80 M690 350 l25 60 M590 460 l20 45 M480 80 l20 50" stroke="#2c2c2c" stroke-width="16" fill="none" opacity=".85"/>
<path d="M555 470 L800 395 L900 640 L1003 700 L1003 967 L690 967 L650 800 L600 640 Z" stroke="none" stroke-width="1" fill="#ffb8c6" opacity=".2"/>
<path d="M575 548 L800 425 L880 632 L640 640 Z" stroke="none" stroke-width="1" fill="url(#mesh)" />
<line x1="570" y1="560" x2="840" y2="455" stroke="#e0d860" stroke-width="3.5" opacity=".6"/>
<line x1="600" y1="635" x2="862" y2="535" stroke="#e0d860" stroke-width="3.5" opacity=".6"/>
<line x1="625" y1="712" x2="892" y2="610" stroke="#e0d860" stroke-width="3.5" opacity=".6"/>
<line x1="650" y1="788" x2="930" y2="682" stroke="#e0d860" stroke-width="3.5" opacity=".6"/>
<line x1="682" y1="862" x2="962" y2="752" stroke="#e0d860" stroke-width="3.5" opacity=".6"/>
<line x1="708" y1="932" x2="1000" y2="822" stroke="#e0d860" stroke-width="3.5" opacity=".6"/>
<path d="M655 890 C690 820 760 790 830 740 C870 720 880 760 850 790 C790 830 730 850 700 900 C690 930 660 930 655 890 Z M800 900 C850 850 900 800 890 860 C920 830 960 860 930 900 C900 940 840 960 800 900 M960 870 C990 860 1003 880 1003 900" stroke="#7878d8" stroke-width="4.5" fill="none" opacity=".8"/>
<line x1="430" y1="590" x2="975" y2="380" stroke="#b858e8" stroke-width="4.8" />
<line x1="525" y1="30" x2="882" y2="970" stroke="#e6a326" stroke-width="4.2" />
<rect x="490" y="959" width="410" height="9" fill="#ff4a66" />
</g></g>
<g transform="translate(20,755) scale(0.24888)">
<defs>
<radialGradient id="tan" cx=".45" cy=".35" r=".75"><stop offset="0" stop-color="#ecd49a"/><stop offset=".6" stop-color="#d6b878"/><stop offset="1" stop-color="#a88a52"/></radialGradient>
</defs>
<path d="M900 55 L955 68 L955 160 L900 150 Z" stroke="#222" stroke-width="3" fill="#8a8a8a" />
<path d="M800 215 C800 150 860 105 930 90 C1000 70 1080 75 1140 100 C1190 120 1225 160 1228 205 C1225 235 1200 245 1160 240 C1150 265 1130 290 1115 315 C1090 325 1060 310 1030 295 C990 290 960 280 930 268 C880 262 830 250 805 235 Z" stroke="#8a6f3e" stroke-width="3" fill="url(#tan)" />
<path d="M830 205 C860 200 890 205 910 215 M880 150 C920 170 940 200 950 240 M960 120 C980 160 1010 190 1030 230 C1040 260 1060 280 1090 300 M1010 100 C1040 130 1060 160 1090 180 C1110 200 1130 215 1150 230 M1070 95 C1100 120 1130 140 1160 150 M980 210 C1000 240 1020 260 1050 275 M1100 215 C1110 240 1115 270 1110 300 M860 120 C880 125 900 120 920 110 M1150 180 C1170 190 1190 195 1215 195" stroke="#4a3818" stroke-width="5" fill="none" opacity=".85"/>
<path d="M900 150 L955 160 L955 310 L900 265 Z" stroke="#222" stroke-width="3" fill="#777" fill-opacity=".75"/>
<line x1="920" y1="270" x2="920" y2="360" stroke="#222" stroke-width="4" />
<path d="M920 372 l-9 -22 h18z" stroke="#111" stroke-width="1" fill="#111" />
<ellipse cx="1110" cy="153" rx="24" ry="20" fill="#e8503a"/>
<rect x="796" y="423" width="314" height="242" fill="#8db4d6" stroke="#5f88b0" stroke-width="3" />
<path d="M815 560 C815 500 860 450 930 438 C960 432 985 440 1000 450 C1040 440 1075 470 1090 520 C1105 570 1090 610 1060 620 C1040 640 1000 635 985 625 C975 655 940 660 925 635 C890 640 850 630 835 610 C820 595 815 580 815 560 Z" stroke="#44546a" stroke-width="3" fill="#55657c" />
<path d="M850 540 C880 500 900 480 930 470 M870 580 C900 560 930 540 950 520 M960 470 C970 500 975 540 970 580 M1000 480 C1020 500 1040 540 1050 580 M890 600 C920 610 950 605 980 600" stroke="#2a3648" stroke-width="7" fill="none" opacity=".8"/>
<path d="M840 520 C870 470 910 455 940 460 M1010 470 C1050 480 1070 520 1075 560" stroke="#8ea0b8" stroke-width="5" fill="none" opacity=".7"/>
<path d="M990 470 C1000 455 1012 465 1006 490 C1000 505 988 495 990 470Z" stroke="none" stroke-width="1" fill="#e05060" />
<path d="M1008 490 C1020 475 1040 485 1045 505 C1048 525 1025 530 1012 515Z" stroke="none" stroke-width="1" fill="#2030c0" />
<path d="M1040 520 C1055 515 1068 530 1062 542 C1050 545 1040 535 1040 520Z" stroke="none" stroke-width="1" fill="#208050" />
<line x1="1085" y1="470" x2="1055" y2="515" stroke="#333" stroke-width="3" />
<text x="1060" y="452" font-size="36" fill="#5a6a80" stroke="#5a6a80" stroke-width="0.79">STS</text>
<circle cx="1136" cy="490" r="9" fill="#f04050"/>
<text x="1157" y="496" font-size="17" font-weight="bold" fill="#111" stroke="#111" stroke-width="0.37">LIP</text>
<circle cx="1136" cy="527" r="9" fill="#2838c8"/>
<text x="1157" y="533" font-size="17" font-weight="bold" fill="#111" stroke="#111" stroke-width="0.37">MST</text>
<circle cx="1136" cy="563" r="9" fill="#2a8a58"/>
<text x="1157" y="569" font-size="17" font-weight="bold" fill="#111" stroke="#111" stroke-width="0.37">MT</text>
</g>
<text x="114.1" y="949.9" font-size="9.3" textLength="147.3" lengthAdjust="spacingAndGlyphs" fill="#1a1a1a" stroke="#1a1a1a" stroke-width="0.2">All data analysis was run in MATLAB</text>
<text x="367" y="95.6" font-size="13.2" textLength="149" lengthAdjust="spacingAndGlyphs" font-weight="bold" fill="#000" stroke="#000" stroke-width="0.29">Individual Unit Analysis:</text>
<text x="435.9" y="121" font-size="13" textLength="180.9" lengthAdjust="spacingAndGlyphs" fill="#1a1a1a" stroke="#1a1a1a" stroke-width="0.1">Raster Plots for an MT neuron</text>
<rect x="398.6" y="129.2" width="51" height="41.3" fill="#2f2f2f" />
<line x1="415.18" y1="129.2" x2="415.18" y2="170.5" stroke="#4a6f8c" stroke-width="0.5" />
<path d="M421.54 151.08v2.86M422.18 149.14v2.26M408.56 149.29v2.33M438.06 133.71v1.75M404 160.4v2.45M401.63 166.84v2.94M431.32 153.16v1.48M400.33 149.91v1.31M408.83 139.22v1.25M422.1 146.63v2.72M424.78 154.08v2.1M431.73 147.26v1.7M447.99 167.34v2.71M433.93 141.96v1.61M413.62 132.82v2.58M419.02 161.78v1.9M446.07 161.8v1.2M409.77 164.15v2.05M447.15 145.02v1.33M430.13 159.24v1.69M403.83 142.61v2.94M436.36 134.6v1.64M404.5 132.43v2.63M408.22 151.06v2.01M408.85 157.5v1.44M430.82 134.55v1.96M409.92 140.26v2.95M438.57 141.54v2.79M409.82 144.91v2.74M430.73 133.94v2.98M409.94 139.83v2.59M415.55 141.25v1.33M403.97 151.94v1.64M428.76 144.06v2.02M446.12 148.24v2.23M441.63 137.02v1.48M443.66 160.7v1.65M408.81 157.78v2.89M409.13 165.64v2.79M428.87 145.92v1.39M401.48 166.11v1.63M433.77 139.79v2.68M428.53 141.15v1.52M434.54 132.77v1.61M426.73 161.99v2.31M413.19 164.42v1.57M400.4 140.24v2M402.53 136.77v1.86M427.35 135.11v1.85M442.81 166.77v2.38M433.12 152v1.45M401.3 130.87v2.84M433.6 166.11v1.24M430.45 148.19v2.51M415.07 167.48v1.34M426.09 157.69v2.82M435.35 156.45v2.63M443.98 143.32v2.43M443.29 162.69v1.95M437.94 162.41v2.23" stroke="#8a8a8a" stroke-width="0.7" fill="none" opacity=".7"/>
<text x="398.6" y="127.6" font-size="3.1" textLength="51.5" lengthAdjust="spacingAndGlyphs" font-weight="bold" fill="#3a3a3a">Spike Matrix Raster Plot Condition 1</text>
<text x="398.6" y="174.1" font-size="2.7" text-anchor="middle" fill="#555" stroke="#555" stroke-width="0.06">0</text>
<line x1="398.6" y1="170.5" x2="398.6" y2="171.3" stroke="#666" stroke-width="0.3" />
<text x="415.6" y="174.1" font-size="2.7" text-anchor="middle" fill="#555" stroke="#555" stroke-width="0.06">500</text>
<line x1="415.6" y1="170.5" x2="415.6" y2="171.3" stroke="#666" stroke-width="0.3" />
<text x="432.6" y="174.1" font-size="2.7" text-anchor="middle" fill="#555" stroke="#555" stroke-width="0.06">1000</text>
<line x1="432.6" y1="170.5" x2="432.6" y2="171.3" stroke="#666" stroke-width="0.3" />
<text x="449.6" y="174.1" font-size="2.7" text-anchor="middle" fill="#555" stroke="#555" stroke-width="0.06">1500</text>
<line x1="449.6" y1="170.5" x2="449.6" y2="171.3" stroke="#666" stroke-width="0.3" />
<text x="424.1" y="179.1" font-size="3.6" text-anchor="middle" fill="#555" stroke="#555" stroke-width="0.08">Time</text>
<text x="393" y="149.85" font-size="3" text-anchor="middle" fill="#555" stroke="#555" stroke-width="0.07" transform="rotate(-90 393 149.85)">Instance</text>
<line x1="397.7" y1="131.2" x2="398.6" y2="131.2" stroke="#666" stroke-width="0.3" />
<line x1="397.7" y1="135.8" x2="398.6" y2="135.8" stroke="#666" stroke-width="0.3" />
<line x1="397.7" y1="140.4" x2="398.6" y2="140.4" stroke="#666" stroke-width="0.3" />
<line x1="397.7" y1="145" x2="398.6" y2="145" stroke="#666" stroke-width="0.3" />
<line x1="397.7" y1="149.6" x2="398.6" y2="149.6" stroke="#666" stroke-width="0.3" />
<line x1="397.7" y1="154.2" x2="398.6" y2="154.2" stroke="#666" stroke-width="0.3" />
<line x1="397.7" y1="158.8" x2="398.6" y2="158.8" stroke="#666" stroke-width="0.3" />
<line x1="397.7" y1="163.4" x2="398.6" y2="163.4" stroke="#666" stroke-width="0.3" />
<line x1="397.7" y1="168" x2="398.6" y2="168" stroke="#666" stroke-width="0.3" />
<rect x="466.2" y="129.2" width="51" height="41.3" fill="#2f2f2f" />
<line x1="482.78" y1="129.2" x2="482.78" y2="170.5" stroke="#4a6f8c" stroke-width="0.5" />
<path d="M497.51 144.46v2.25M496.73 133.19v2.35M515.38 163.02v2.51M486.04 157.62v2.25M488.57 161.47v1.35M503.59 131.31v2.28M490.53 138.79v2.46M491.32 153.12v2.86M479.61 130.62v1.74M500.09 137.76v1.51M511.13 154.82v2M510.45 142.4v2.4M476.83 146.27v2.65M511.54 163.03v1.89M495.48 142v1.45M491.28 161.42v2.73M501.69 165.64v1.7M475.4 147.01v1.7M477.58 145.64v2.33M491.15 141.96v2.71M514.83 147.08v1.33M468.73 162.76v1.27M501.57 151.48v1.76M505.59 130.91v1.44M489.26 131.12v2.69M478.71 135.45v1.28M497.72 146.85v2.33M498.97 160.32v2.93M500.4 137.64v2.06M475.87 130.6v2.05M501.84 136.88v1.69M483.97 156.21v2.14M497 158.41v1.91M505.61 164v1.36M512.43 157.14v1.43M489.2 153.53v2.84M485.47 151.42v2.78M505.84 165.42v2.03M498.79 137.84v2.5M506.89 154.13v2.49M477.54 163.77v2.96M514.6 150.23v2.62M482.74 164.14v2.74M484.1 133.29v1.99M493.89 158.86v2.08M468.58 160.38v1.32M505.99 136.65v1.8M505.41 135.44v1.47M492.25 157.19v2.71M500.63 165.48v2.09M513.23 133.41v1.6M492.74 141.02v2.51M498.19 149.7v2.72M494.36 141.83v1.89M508.2 163.79v1.57M508.46 166.32v2.14M494.99 137.7v2.16M491.6 152.77v1.25M514.22 149.45v1.92M506.05 151.19v2.08" stroke="#8a8a8a" stroke-width="0.7" fill="none" opacity=".7"/>
<text x="466.2" y="127.6" font-size="3.1" textLength="51.5" lengthAdjust="spacingAndGlyphs" font-weight="bold" fill="#3a3a3a">Spike Matrix Raster Plot Condition 2</text>
<text x="466.2" y="174.1" font-size="2.7" text-anchor="middle" fill="#555" stroke="#555" stroke-width="0.06">0</text>
<line x1="466.2" y1="170.5" x2="466.2" y2="171.3" stroke="#666" stroke-width="0.3" />
<text x="483.2" y="174.1" font-size="2.7" text-anchor="middle" fill="#555" stroke="#555" stroke-width="0.06">500</text>
<line x1="483.2" y1="170.5" x2="483.2" y2="171.3" stroke="#666" stroke-width="0.3" />
<text x="500.2" y="174.1" font-size="2.7" text-anchor="middle" fill="#555" stroke="#555" stroke-width="0.06">1000</text>
<line x1="500.2" y1="170.5" x2="500.2" y2="171.3" stroke="#666" stroke-width="0.3" />
<text x="517.2" y="174.1" font-size="2.7" text-anchor="middle" fill="#555" stroke="#555" stroke-width="0.06">1500</text>
<line x1="517.2" y1="170.5" x2="517.2" y2="171.3" stroke="#666" stroke-width="0.3" />
<text x="491.7" y="179.1" font-size="3.6" text-anchor="middle" fill="#555" stroke="#555" stroke-width="0.08">Time</text>
<text x="460.6" y="149.85" font-size="3" text-anchor="middle" fill="#555" stroke="#555" stroke-width="0.07" transform="rotate(-90 460.6 149.85)">Instance</text>
<line x1="465.3" y1="131.2" x2="466.2" y2="131.2" stroke="#666" stroke-width="0.3" />
<line x1="465.3" y1="135.8" x2="466.2" y2="135.8" stroke="#666" stroke-width="0.3" />
<line x1="465.3" y1="140.4" x2="466.2" y2="140.4" stroke="#666" stroke-width="0.3" />
<line x1="465.3" y1="145" x2="466.2" y2="145" stroke="#666" stroke-width="0.3" />
<line x1="465.3" y1="149.6" x2="466.2" y2="149.6" stroke="#666" stroke-width="0.3" />
<line x1="465.3" y1="154.2" x2="466.2" y2="154.2" stroke="#666" stroke-width="0.3" />
<line x1="465.3" y1="158.8" x2="466.2" y2="158.8" stroke="#666" stroke-width="0.3" />
<line x1="465.3" y1="163.4" x2="466.2" y2="163.4" stroke="#666" stroke-width="0.3" />
<line x1="465.3" y1="168" x2="466.2" y2="168" stroke="#666" stroke-width="0.3" />
<rect x="533.8" y="129.2" width="51" height="41.3" fill="#2f2f2f" />
<line x1="550.38" y1="129.2" x2="550.38" y2="170.5" stroke="#4a6f8c" stroke-width="0.5" />
<path d="M568.31 132.66v2.17M554.87 165.89v2.86M547.86 147.85v1.43M555.83 160.63v2.82M557.91 142.03v1.54M564.77 164.71v1.43M572.6 131.05v1.55M545.82 155.83v1.78M552.03 153.32v1.39M570.25 134.78v2.12M546.95 137.58v2.15M555.98 144.21v1.94M560.47 136.16v1.57M565.42 154.01v2.15M576.09 153.02v2.74M546.08 157.83v2.66M578.58 141.98v1.77M579.55 138.34v3M577.85 135.2v1.63M570.04 139.88v1.37M575.16 145.93v2.62M540.91 145.22v2.43M535.66 137.69v2.43M579 166.32v1.41M559.33 158.48v2.11M568.06 137.25v1.33M539.95 131.6v2.19M559.77 151.41v1.46M543.75 137.81v2.71M582.83 164.77v1.37M537.8 165.69v2.03M571.89 142.39v2.04M559.79 146.24v2.28M535.44 156.35v2.72M543.59 147.13v2.53M554.46 137.48v1.5M559.66 130.78v2.81M573.68 156.48v2.75M565.33 145.29v2.28M559.26 166.85v2.65M547.33 164.19v2.54M572.53 160.59v1.93M578.28 163.02v2.45M572.01 158.74v1.93M569.85 132.83v1.82M557.54 130.6v1.84M565.78 153.48v1.62M580.62 155.05v1.81M566.8 151.45v2.16M553.7 167.5v2.36M568.81 158.61v2.96M535.91 153.15v2.53M547.25 145.18v1.29M544.28 144.21v1.38M546.97 163.98v2.19M559.43 166.27v2.22M583.06 154v2.66M538.5 152.49v2.57M536.99 164.89v1.49M557.68 136.51v2.09" stroke="#8a8a8a" stroke-width="0.7" fill="none" opacity=".7"/>
<text x="533.8" y="127.6" font-size="3.1" textLength="51.5" lengthAdjust="spacingAndGlyphs" font-weight="bold" fill="#3a3a3a">Spike Matrix Raster Plot Condition 3</text>
<text x="533.8" y="174.1" font-size="2.7" text-anchor="middle" fill="#555" stroke="#555" stroke-width="0.06">0</text>
<line x1="533.8" y1="170.5" x2="533.8" y2="171.3" stroke="#666" stroke-width="0.3" />
<text x="550.8" y="174.1" font-size="2.7" text-anchor="middle" fill="#555" stroke="#555" stroke-width="0.06">500</text>
<line x1="550.8" y1="170.5" x2="550.8" y2="171.3" stroke="#666" stroke-width="0.3" />
<text x="567.8" y="174.1" font-size="2.7" text-anchor="middle" fill="#555" stroke="#555" stroke-width="0.06">1000</text>
<line x1="567.8" y1="170.5" x2="567.8" y2="171.3" stroke="#666" stroke-width="0.3" />
<text x="584.8" y="174.1" font-size="2.7" text-anchor="middle" fill="#555" stroke="#555" stroke-width="0.06">1500</text>
<line x1="584.8" y1="170.5" x2="584.8" y2="171.3" stroke="#666" stroke-width="0.3" />
<text x="559.3" y="179.1" font-size="3.6" text-anchor="middle" fill="#555" stroke="#555" stroke-width="0.08">Time</text>
<text x="528.2" y="149.85" font-size="3" text-anchor="middle" fill="#555" stroke="#555" stroke-width="0.07" transform="rotate(-90 528.2 149.85)">Instance</text>
<line x1="532.9" y1="131.2" x2="533.8" y2="131.2" stroke="#666" stroke-width="0.3" />
<line x1="532.9" y1="135.8" x2="533.8" y2="135.8" stroke="#666" stroke-width="0.3" />
<line x1="532.9" y1="140.4" x2="533.8" y2="140.4" stroke="#666" stroke-width="0.3" />
<line x1="532.9" y1="145" x2="533.8" y2="145" stroke="#666" stroke-width="0.3" />
<line x1="532.9" y1="149.6" x2="533.8" y2="149.6" stroke="#666" stroke-width="0.3" />
<line x1="532.9" y1="154.2" x2="533.8" y2="154.2" stroke="#666" stroke-width="0.3" />
<line x1="532.9" y1="158.8" x2="533.8" y2="158.8" stroke="#666" stroke-width="0.3" />
<line x1="532.9" y1="163.4" x2="533.8" y2="163.4" stroke="#666" stroke-width="0.3" />
<line x1="532.9" y1="168" x2="533.8" y2="168" stroke="#666" stroke-width="0.3" />
<rect x="601.4" y="129.2" width="51" height="41.3" fill="#2f2f2f" />
<line x1="617.98" y1="129.2" x2="617.98" y2="170.5" stroke="#4a6f8c" stroke-width="0.5" />
<path d="M632.04 132.38v2.9M622.8 149.85v2.28M620.13 140.86v2.38M629.59 140.78v2.49M616.76 130.72v1.64M604.47 136.04v2.56M621.31 163.68v2.55M604.83 167.08v2.9M605.96 163.98v1.97M625.56 166.5v1.64M627.78 165.16v2.5M625.11 166.71v2.67M631.68 134.49v2.32M624.5 137.8v1.29M628.01 134.84v2M634.79 147.19v1.67M630.64 145.85v2.6M628.14 167.41v2.91M638.01 139.09v1.4M645.7 159.45v2.32M619.82 140.33v2.43M629.8 152.27v2.34M638.94 137.28v1.65M649.92 164.36v2.78M604.32 132.47v1.69M623.02 153.45v1.38M628.67 132.9v1.36M635.2 150.74v2.34M620.5 148.05v1.58M619.07 157.98v2.71M606.01 134.67v2.66M632.65 158.87v1.58M622.98 139.83v2.66M620.29 154.58v2.98M618.18 150.66v2.54M647.06 146.15v1.86M607.11 162.84v1.34M606.43 151.25v2.07M635.64 141.35v2.6M606.09 138.15v2.39M606.36 141.53v2.5M636.06 140.75v1.46M619.75 157.28v1.86M608.09 156.66v2.22M646.95 165.26v2.84M623.64 160.15v1.75M617.8 145.1v2.88M645.79 139.46v1.85M620.13 143.75v1.91M621.2 137.47v2.21M641.06 150.36v2.71M629.69 136.79v2.57M645.12 140.7v1.24M627.41 150.5v2.22M649.27 154.49v2.65M605.51 150.6v2.62M606.48 133.25v2.53M646 133.36v2.34M609.38 158.02v2.37M614.3 138.42v2.58" stroke="#8a8a8a" stroke-width="0.7" fill="none" opacity=".7"/>
<text x="601.4" y="127.6" font-size="3.1" textLength="51.5" lengthAdjust="spacingAndGlyphs" font-weight="bold" fill="#3a3a3a">Spike Matrix Raster Plot Condition 4</text>
<text x="601.4" y="174.1" font-size="2.7" text-anchor="middle" fill="#555" stroke="#555" stroke-width="0.06">0</text>
<line x1="601.4" y1="170.5" x2="601.4" y2="171.3" stroke="#666" stroke-width="0.3" />
<text x="618.4" y="174.1" font-size="2.7" text-anchor="middle" fill="#555" stroke="#555" stroke-width="0.06">500</text>
<line x1="618.4" y1="170.5" x2="618.4" y2="171.3" stroke="#666" stroke-width="0.3" />
<text x="635.4" y="174.1" font-size="2.7" text-anchor="middle" fill="#555" stroke="#555" stroke-width="0.06">1000</text>
<line x1="635.4" y1="170.5" x2="635.4" y2="171.3" stroke="#666" stroke-width="0.3" />
<text x="652.4" y="174.1" font-size="2.7" text-anchor="middle" fill="#555" stroke="#555" stroke-width="0.06">1500</text>
<line x1="652.4" y1="170.5" x2="652.4" y2="171.3" stroke="#666" stroke-width="0.3" />
<text x="626.9" y="179.1" font-size="3.6" text-anchor="middle" fill="#555" stroke="#555" stroke-width="0.08">Time</text>
<text x="595.8" y="149.85" font-size="3" text-anchor="middle" fill="#555" stroke="#555" stroke-width="0.07" transform="rotate(-90 595.8 149.85)">Instance</text>
<line x1="600.5" y1="131.2" x2="601.4" y2="131.2" stroke="#666" stroke-width="0.3" />
<line x1="600.5" y1="135.8" x2="601.4" y2="135.8" stroke="#666" stroke-width="0.3" />
<line x1="600.5" y1="140.4" x2="601.4" y2="140.4" stroke="#666" stroke-width="0.3" />
<line x1="600.5" y1="145" x2="601.4" y2="145" stroke="#666" stroke-width="0.3" />
<line x1="600.5" y1="149.6" x2="601.4" y2="149.6" stroke="#666" stroke-width="0.3" />
<line x1="600.5" y1="154.2" x2="601.4" y2="154.2" stroke="#666" stroke-width="0.3" />
<line x1="600.5" y1="158.8" x2="601.4" y2="158.8" stroke="#666" stroke-width="0.3" />
<line x1="600.5" y1="163.4" x2="601.4" y2="163.4" stroke="#666" stroke-width="0.3" />
<line x1="600.5" y1="168" x2="601.4" y2="168" stroke="#666" stroke-width="0.3" />
<rect x="398.6" y="187" width="51" height="41.3" fill="#2f2f2f" />
<line x1="415.18" y1="187" x2="415.18" y2="228.3" stroke="#4a6f8c" stroke-width="0.5" />
<path d="M424.9 216.52v1.91M415.98 224.12v2.41M423.54 208.04v2.5M433.94 222.13v1.94M439.67 212.87v2.74M438.69 219.1v2.8M446.05 211.88v2.14M434.04 217.92v1.96M419.99 193.45v2.53M447.66 202.01v1.5M409.51 203.85v1.73M446.63 190.21v1.76M405.17 212.17v2.6M408.3 190.33v2.03M427.93 221.92v1.27M404.87 194.88v1.59M411.02 214.75v2.27M410.46 194.9v1.71M407.97 216.25v1.76M426.19 218.48v2.06M412.23 221.1v2.85M416.19 208.42v2.92M423.01 196.24v1.29M445.55 217.89v1.89M425.19 207.24v1.69M447.63 212.53v1.63M400.13 205.63v1.87M438.24 214.61v2.29M407.23 193.85v1.78M412.18 220.42v2.13M430.49 225.04v1.68M425.53 193.62v2.59M399.67 218.64v2.72M439.47 191.07v1.69M434.35 191.62v2.06M422.33 223.64v2.26M441.18 199.32v2.62M419.82 222.2v1.36M439.68 195.77v2.18M425.1 193.88v2.7M414.7 199.59v1.34M414.43 205.43v2.49M417.05 213.63v1.39M418.72 205.22v2.94M439.84 212.39v1.22M417.89 214.48v1.63M426.96 205.09v1.22M447.69 217.82v1.57M429.48 198.83v1.88M425.78 199.12v1.81M418.62 212.87v1.66M409.3 215.28v1.79M445.43 208.99v2.5M415.69 218.84v1.37M406.43 191.52v2.42M433.95 194.71v1.92M440.19 210.11v1.36M410.59 193.86v1.42M419.33 190.71v2.86M420.31 207.08v2.37" stroke="#8a8a8a" stroke-width="0.7" fill="none" opacity=".7"/>
<text x="398.6" y="185.4" font-size="3.1" textLength="51.5" lengthAdjust="spacingAndGlyphs" font-weight="bold" fill="#3a3a3a">Spike Matrix Raster Plot Condition 5</text>
<text x="398.6" y="231.9" font-size="2.7" text-anchor="middle" fill="#555" stroke="#555" stroke-width="0.06">0</text>
<line x1="398.6" y1="228.3" x2="398.6" y2="229.1" stroke="#666" stroke-width="0.3" />
<text x="415.6" y="231.9" font-size="2.7" text-anchor="middle" fill="#555" stroke="#555" stroke-width="0.06">500</text>
<line x1="415.6" y1="228.3" x2="415.6" y2="229.1" stroke="#666" stroke-width="0.3" />
<text x="432.6" y="231.9" font-size="2.7" text-anchor="middle" fill="#555" stroke="#555" stroke-width="0.06">1000</text>
<line x1="432.6" y1="228.3" x2="432.6" y2="229.1" stroke="#666" stroke-width="0.3" />
<text x="449.6" y="231.9" font-size="2.7" text-anchor="middle" fill="#555" stroke="#555" stroke-width="0.06">1500</text>
<line x1="449.6" y1="228.3" x2="449.6" y2="229.1" stroke="#666" stroke-width="0.3" />
<text x="424.1" y="236.9" font-size="3.6" text-anchor="middle" fill="#555" stroke="#555" stroke-width="0.08">Time</text>
<text x="393" y="207.65" font-size="3" text-anchor="middle" fill="#555" stroke="#555" stroke-width="0.07" transform="rotate(-90 393 207.65)">Instance</text>
<line x1="397.7" y1="189" x2="398.6" y2="189" stroke="#666" stroke-width="0.3" />
<line x1="397.7" y1="193.6" x2="398.6" y2="193.6" stroke="#666" stroke-width="0.3" />
<line x1="397.7" y1="198.2" x2="398.6" y2="198.2" stroke="#666" stroke-width="0.3" />
<line x1="397.7" y1="202.8" x2="398.6" y2="202.8" stroke="#666" stroke-width="0.3" />
<line x1="397.7" y1="207.4" x2="398.6" y2="207.4" stroke="#666" stroke-width="0.3" />
<line x1="397.7" y1="212" x2="398.6" y2="212" stroke="#666" stroke-width="0.3" />
<line x1="397.7" y1="216.6" x2="398.6" y2="216.6" stroke="#666" stroke-width="0.3" />
<line x1="397.7" y1="221.2" x2="398.6" y2="221.2" stroke="#666" stroke-width="0.3" />
<line x1="397.7" y1="225.8" x2="398.6" y2="225.8" stroke="#666" stroke-width="0.3" />
<rect x="466.2" y="187" width="51" height="41.3" fill="#2f2f2f" />
<line x1="482.78" y1="187" x2="482.78" y2="228.3" stroke="#4a6f8c" stroke-width="0.5" />
<path d="M504.39 218.63v1.89M483.27 203.37v1.23M486.63 214.11v2.97M505.5 212.63v2.3M468.1 200.35v1.82M498.76 191.96v1.88M491.9 217.41v2.69M496.85 193.91v2.58M511 208.45v1.83M491.47 193.29v2.48M515.06 207.25v2.49M507.72 195.36v2.9M497.62 195.38v1.35M479.06 209.5v2.45M483.17 222.65v1.85M489.66 192.63v2.95M473.78 221.72v2.18M494.4 208.9v1.68M511.3 225.01v2.67M496.37 192.57v2.68M481.2 221.46v1.63M495.02 218.99v1.53M493.77 190.84v1.26M475.93 224.82v2.89M499.13 199.48v2.41M502.98 202.24v2.27M506.19 188.61v1.56M489.9 193.33v1.9M494.82 194.48v2.14M479.99 209.19v1.8M498.32 189.41v2.41M474.22 223.78v2.28M489.99 203.35v2.32M500.63 216.27v2.55M490.76 225.1v2.71M508.67 203.26v1.98M494.65 221.77v2.15M492.66 204.12v2.83M482.75 190.04v2.51M510.86 215.3v2.28M503.67 199.37v2.27M470.59 192.64v2M491.58 202.8v1.29M500.9 207.63v1.63M482.06 202.75v1.62M470.52 221.99v2.94M499.49 220.32v1.96M506.25 196.27v2.54M494.69 221.7v1.38M505.63 192.62v2.17M513.32 188.02v1.64M481.71 200.11v1.31M510.61 218.42v1.92M484.49 209.84v1.28M468.71 221.51v1.75M491.37 222.84v2.96M490.12 195.7v1.73M511.95 221.45v1.55M507.84 201.21v2.05M475.54 220.81v2.99" stroke="#8a8a8a" stroke-width="0.7" fill="none" opacity=".7"/>
<text x="466.2" y="185.4" font-size="3.1" textLength="51.5" lengthAdjust="spacingAndGlyphs" font-weight="bold" fill="#3a3a3a">Spike Matrix Raster Plot Condition 6</text>
<text x="466.2" y="231.9" font-size="2.7" text-anchor="middle" fill="#555" stroke="#555" stroke-width="0.06">0</text>
<line x1="466.2" y1="228.3" x2="466.2" y2="229.1" stroke="#666" stroke-width="0.3" />
<text x="483.2" y="231.9" font-size="2.7" text-anchor="middle" fill="#555" stroke="#555" stroke-width="0.06">500</text>
<line x1="483.2" y1="228.3" x2="483.2" y2="229.1" stroke="#666" stroke-width="0.3" />
<text x="500.2" y="231.9" font-size="2.7" text-anchor="middle" fill="#555" stroke="#555" stroke-width="0.06">1000</text>
<line x1="500.2" y1="228.3" x2="500.2" y2="229.1" stroke="#666" stroke-width="0.3" />
<text x="517.2" y="231.9" font-size="2.7" text-anchor="middle" fill="#555" stroke="#555" stroke-width="0.06">1500</text>
<line x1="517.2" y1="228.3" x2="517.2" y2="229.1" stroke="#666" stroke-width="0.3" />
<text x="491.7" y="236.9" font-size="3.6" text-anchor="middle" fill="#555" stroke="#555" stroke-width="0.08">Time</text>
<text x="460.6" y="207.65" font-size="3" text-anchor="middle" fill="#555" stroke="#555" stroke-width="0.07" transform="rotate(-90 460.6 207.65)">Instance</text>
<line x1="465.3" y1="189" x2="466.2" y2="189" stroke="#666" stroke-width="0.3" />
<line x1="465.3" y1="193.6" x2="466.2" y2="193.6" stroke="#666" stroke-width="0.3" />
<line x1="465.3" y1="198.2" x2="466.2" y2="198.2" stroke="#666" stroke-width="0.3" />
<line x1="465.3" y1="202.8" x2="466.2" y2="202.8" stroke="#666" stroke-width="0.3" />
<line x1="465.3" y1="207.4" x2="466.2" y2="207.4" stroke="#666" stroke-width="0.3" />
<line x1="465.3" y1="212" x2="466.2" y2="212" stroke="#666" stroke-width="0.3" />
<line x1="465.3" y1="216.6" x2="466.2" y2="216.6" stroke="#666" stroke-width="0.3" />
<line x1="465.3" y1="221.2" x2="466.2" y2="221.2" stroke="#666" stroke-width="0.3" />
<line x1="465.3" y1="225.8" x2="466.2" y2="225.8" stroke="#666" stroke-width="0.3" />
<rect x="533.8" y="187" width="51" height="41.3" fill="#2f2f2f" />
<line x1="550.38" y1="187" x2="550.38" y2="228.3" stroke="#4a6f8c" stroke-width="0.5" />
<path d="M544.6 211.59v1.54M577.49 189.87v1.39M570 199.67v2.82M576.97 214.6v1.44M568.55 222.98v2M538.63 196.33v1.75M569.26 195.33v1.53M546.22 212.79v2.62M552.87 212.69v2.79M563.41 196.54v1.74M579.75 212.88v1.7M565.84 191.36v2.97M556.16 207.71v2.16M537 210.37v1.71M546.97 217.96v1.36M548.63 216.19v1.64M548.34 208.44v1.54M578.31 224.84v1.26M557.19 216v1.89M579.87 206.65v1.52M561.77 212.06v1.85M566.73 217.21v2.13M559.32 219.53v2.43M560.05 223.49v1.51M572.61 194.16v2.29M546.21 204.43v2.59M572.95 217.51v1.62M558.52 196.25v2.24M559 189.32v2.27M569.46 209.36v2.77M543.53 193.66v1.23M558.86 204.21v2M547.55 217.78v1.33M578.8 209.22v2.18M573.19 196.88v1.46M549.88 189.58v1.77M564.93 207.6v1.68M563.35 191.3v2.68M543.12 197.51v1.49M568.3 218.99v2.62M537.77 203.32v1.86M545.29 224.2v1.28M558.54 216.4v2.98M541.81 204.98v2.54M536.7 196.98v2.8M541.67 202.66v1.74M555.39 190.85v1.26M583.11 216.47v2.52M545.95 197.44v2.19M546.52 205.22v2.88M552.45 200.57v2.97M564.43 189.48v1.93M566.31 190.18v1.82M568.49 220.24v2.26M577.79 205.25v1.91M575.69 202.22v2.61M545.25 200.96v1.53M561.45 194.11v1.57M545.2 205.45v1.76M556.48 225.05v2.42" stroke="#8a8a8a" stroke-width="0.7" fill="none" opacity=".7"/>
<text x="533.8" y="185.4" font-size="3.1" textLength="51.5" lengthAdjust="spacingAndGlyphs" font-weight="bold" fill="#3a3a3a">Spike Matrix Raster Plot Condition 7</text>
<text x="533.8" y="231.9" font-size="2.7" text-anchor="middle" fill="#555" stroke="#555" stroke-width="0.06">0</text>
<line x1="533.8" y1="228.3" x2="533.8" y2="229.1" stroke="#666" stroke-width="0.3" />
<text x="550.8" y="231.9" font-size="2.7" text-anchor="middle" fill="#555" stroke="#555" stroke-width="0.06">500</text>
<line x1="550.8" y1="228.3" x2="550.8" y2="229.1" stroke="#666" stroke-width="0.3" />
<text x="567.8" y="231.9" font-size="2.7" text-anchor="middle" fill="#555" stroke="#555" stroke-width="0.06">1000</text>
<line x1="567.8" y1="228.3" x2="567.8" y2="229.1" stroke="#666" stroke-width="0.3" />
<text x="584.8" y="231.9" font-size="2.7" text-anchor="middle" fill="#555" stroke="#555" stroke-width="0.06">1500</text>
<line x1="584.8" y1="228.3" x2="584.8" y2="229.1" stroke="#666" stroke-width="0.3" />
<text x="559.3" y="236.9" font-size="3.6" text-anchor="middle" fill="#555" stroke="#555" stroke-width="0.08">Time</text>
<text x="528.2" y="207.65" font-size="3" text-anchor="middle" fill="#555" stroke="#555" stroke-width="0.07" transform="rotate(-90 528.2 207.65)">Instance</text>
<line x1="532.9" y1="189" x2="533.8" y2="189" stroke="#666" stroke-width="0.3" />
<line x1="532.9" y1="193.6" x2="533.8" y2="193.6" stroke="#666" stroke-width="0.3" />
<line x1="532.9" y1="198.2" x2="533.8" y2="198.2" stroke="#666" stroke-width="0.3" />
<line x1="532.9" y1="202.8" x2="533.8" y2="202.8" stroke="#666" stroke-width="0.3" />
<line x1="532.9" y1="207.4" x2="533.8" y2="207.4" stroke="#666" stroke-width="0.3" />
<line x1="532.9" y1="212" x2="533.8" y2="212" stroke="#666" stroke-width="0.3" />
<line x1="532.9" y1="216.6" x2="533.8" y2="216.6" stroke="#666" stroke-width="0.3" />
<line x1="532.9" y1="221.2" x2="533.8" y2="221.2" stroke="#666" stroke-width="0.3" />
<line x1="532.9" y1="225.8" x2="533.8" y2="225.8" stroke="#666" stroke-width="0.3" />
<rect x="601.4" y="187" width="51" height="41.3" fill="#2f2f2f" />
<line x1="617.98" y1="187" x2="617.98" y2="228.3" stroke="#4a6f8c" stroke-width="0.5" />
<path d="M644.24 195.63v1.89M605.93 213.79v1.85M615.71 188.69v1.53M615.12 202.66v2.86M637.09 198.02v1.85M609.85 222.94v1.85M639.54 214.98v2.83M603.39 200.01v1.89M606.43 220.91v1.79M639.78 207.37v1.3M621.51 196.89v1.27M609.72 210.21v1.26M617.55 203.82v2.18M609 214.36v1.67M637.59 212.85v1.46M612.33 198.46v2.48M622.06 202.42v2.76M613.36 198.89v1.82M612.86 189.52v1.24M632.97 209.11v2.66M649.72 199.12v2.41M646.97 196.06v2.44M634.73 223.63v2.76M613.78 211.59v1.36M623.14 202.64v1.31M620.99 200.24v2.09M615.97 193.92v1.92M625.45 194.22v2.4M614.03 191.47v1.82M622.88 193.62v2.25M636.42 208.63v2.46M603.52 202.6v1.86M605.45 203.08v1.3M626.43 209.85v2.04M618.19 197.45v1.24M619.23 221.26v2.22M615.1 212.92v1.53M625.16 210.95v2.92M619.99 209.49v2.9M639.82 211.4v2.32M622.33 203.5v1.7M642.64 220.81v1.89M646.52 189.42v1.44M626.99 199.51v1.85M649.78 193.59v1.55M613.48 213.37v1.62M602.45 208.28v1.91M614.01 206.41v2.37M628.98 211.29v2.21M642.71 224.14v1.8M619.21 221.06v1.76M637.12 213.94v2.44M649.15 218.75v1.49M632.55 206.3v2.21M620.32 198.66v2.55M628.3 196.84v1.65M618.16 194.63v2.12M608.51 190.36v1.32M607.36 214.29v1.4M624.3 216.8v2.07" stroke="#8a8a8a" stroke-width="0.7" fill="none" opacity=".7"/>
<text x="601.4" y="185.4" font-size="3.1" textLength="51.5" lengthAdjust="spacingAndGlyphs" font-weight="bold" fill="#3a3a3a">Spike Matrix Raster Plot Condition 8</text>
<text x="601.4" y="231.9" font-size="2.7" text-anchor="middle" fill="#555" stroke="#555" stroke-width="0.06">0</text>
<line x1="601.4" y1="228.3" x2="601.4" y2="229.1" stroke="#666" stroke-width="0.3" />
<text x="618.4" y="231.9" font-size="2.7" text-anchor="middle" fill="#555" stroke="#555" stroke-width="0.06">500</text>
<line x1="618.4" y1="228.3" x2="618.4" y2="229.1" stroke="#666" stroke-width="0.3" />
<text x="635.4" y="231.9" font-size="2.7" text-anchor="middle" fill="#555" stroke="#555" stroke-width="0.06">1000</text>
<line x1="635.4" y1="228.3" x2="635.4" y2="229.1" stroke="#666" stroke-width="0.3" />
<text x="652.4" y="231.9" font-size="2.7" text-anchor="middle" fill="#555" stroke="#555" stroke-width="0.06">1500</text>
<line x1="652.4" y1="228.3" x2="652.4" y2="229.1" stroke="#666" stroke-width="0.3" />
<text x="626.9" y="236.9" font-size="3.6" text-anchor="middle" fill="#555" stroke="#555" stroke-width="0.08">Time</text>
<text x="595.8" y="207.65" font-size="3" text-anchor="middle" fill="#555" stroke="#555" stroke-width="0.07" transform="rotate(-90 595.8 207.65)">Instance</text>
<line x1="600.5" y1="189" x2="601.4" y2="189" stroke="#666" stroke-width="0.3" />
<line x1="600.5" y1="193.6" x2="601.4" y2="193.6" stroke="#666" stroke-width="0.3" />
<line x1="600.5" y1="198.2" x2="601.4" y2="198.2" stroke="#666" stroke-width="0.3" />
<line x1="600.5" y1="202.8" x2="601.4" y2="202.8" stroke="#666" stroke-width="0.3" />
<line x1="600.5" y1="207.4" x2="601.4" y2="207.4" stroke="#666" stroke-width="0.3" />
<line x1="600.5" y1="212" x2="601.4" y2="212" stroke="#666" stroke-width="0.3" />
<line x1="600.5" y1="216.6" x2="601.4" y2="216.6" stroke="#666" stroke-width="0.3" />
<line x1="600.5" y1="221.2" x2="601.4" y2="221.2" stroke="#666" stroke-width="0.3" />
<line x1="600.5" y1="225.8" x2="601.4" y2="225.8" stroke="#666" stroke-width="0.3" />
<text x="713.5" y="116.9" font-size="13" textLength="233.5" lengthAdjust="spacingAndGlyphs" fill="#1a1a1a" stroke="#1a1a1a" stroke-width="0.1">Spike Density Function for an MT neuron</text>
<rect x="694.8" y="125.1" width="287.4" height="113.2" fill="#fff" stroke="#c8c8c8" stroke-width="0.6" />
<rect x="790.6" y="181.4" width="38.1" height="56.9" fill="#efefef" stroke="#a4a4a4" stroke-width="0.6" />
<path d="M694.8 204.12 L695.56 200.7 L696.31 199.24 L697.07 199.81 L697.83 202.18 L698.58 205.87 L699.34 210.24 L700.09 214.59 L700.85 218.28 L701.61 220.81 L702.36 221.87 L703.12 221.38 L703.88 219.4 L704.63 216.16 L705.39 211.9 L706.14 206.88 L706.9 201.29 L707.66 195.23 L708.41 188.79 L709.17 182.02 L709.93 175.04 L710.68 168.03 L711.44 161.29 L712.2 155.18 L712.95 150.1 L713.71 146.44 L714.46 144.51 L715.22 144.54 L715.98 146.58 L716.73 150.6 L717.49 156.4 L718.25 163.66 L719 171.94 L719.76 180.73 L720.51 189.44 L721.27 197.46 L722.03 204.26 L722.78 209.42 L723.54 212.73 L724.3 214.22 L725.05 214.15 L725.81 213.02 L726.57 211.46 L727.32 210.15 L728.08 209.67 L728.83 210.44 L729.59 212.63 L730.35 216.1 L731.1 220.44 L731.86 225.06 L732.62 229.23 L733.37 232.28 L734.13 233.67 L734.88 233.13 L735.64 230.68 L736.4 226.68 L737.15 221.74 L737.91 216.62 L738.67 212.16 L739.42 209.04 L740.18 207.75 L740.94 208.46 L741.69 210.95 L742.45 214.72 L743.2 219 L743.96 222.88 L744.72 225.51 L745.47 226.2 L746.23 224.53 L746.99 220.48 L747.74 214.4 L748.5 206.96 L749.25 199.09 L750.01 191.8 L750.77 186.04 L751.52 182.57 L752.28 181.82 L753.04 183.89 L753.79 188.48 L754.55 194.99 L755.31 202.61 L756.06 210.47 L756.82 217.74 L757.57 223.78 L758.33 228.2 L759.09 230.91 L759.84 232.06 L760.6 232.01 L761.36 231.23 L762.11 230.18 L762.87 229.21 L763.62 228.49 L764.38 228.02 L765.14 227.59 L765.89 226.88 L766.65 225.53 L767.41 223.27 L768.16 219.95 L768.92 215.67 L769.68 210.75 L770.43 205.69 L771.19 201.17 L771.94 197.84 L772.7 196.3 L773.46 196.89 L774.21 199.68 L774.97 204.43 L775.73 210.53 L776.48 217.18 L777.24 223.43 L777.99 228.33 L778.75 231.14 L779.51 231.35 L780.26 228.87 L781.02 223.96 L781.78 217.27 L782.53 209.7 L783.29 202.28 L784.05 196.01 L784.8 191.7 L785.56 189.89 L786.31 190.72 L787.07 193.95 L787.83 199.03 L788.58 205.15 L789.34 211.41 L790.1 216.97 L790.85 221.17 L791.61 223.62 L792.36 224.26 L793.12 223.36 L793.88 221.42 L794.63 219.1 L795.39 217.07 L796.15 215.88 L796.9 215.89 L797.66 217.18 L798.42 219.53 L799.17 222.49 L799.93 225.47 L800.68 227.82 L801.44 228.96 L802.2 228.52 L802.95 226.37 L803.71 222.66 L804.47 217.79 L805.22 212.36 L805.98 207.06 L806.73 202.54 L807.49 199.3 L808.25 197.64 L809 197.57 L809.76 198.85 L810.52 201.03 L811.27 203.53 L812.03 205.73 L812.79 207.14 L813.54 207.41 L814.3 206.44 L815.05 204.36 L815.81 201.55 L816.57 198.5 L817.32 195.75 L818.08 193.8 L818.84 193 L819.59 193.5 L820.35 195.23 L821.1 197.89 L821.86 201.06 L822.62 204.24 L823.37 206.96 L824.13 208.9 L824.89 209.91 L825.64 210.07 L826.4 209.66 L827.16 209.11 L827.91 208.9 L828.67 209.49 L829.42 211.2 L830.18 214.12 L830.94 218.1 L831.69 222.73 L832.45 227.41 L833.21 231.41 L833.96 234.03 L834.72 234.68 L835.47 232.98 L836.23 228.87 L836.99 222.62 L837.74 214.79 L838.5 206.19 L839.26 197.73 L840.01 190.36 L840.77 184.87 L841.53 181.84 L842.28 181.53 L843.04 183.87 L843.79 188.47 L844.55 194.71 L845.31 201.81 L846.06 208.95 L846.82 215.41 L847.58 220.62 L848.33 224.24 L849.09 226.18 L849.84 226.57 L850.6 225.72 L851.36 224.04 L852.11 221.96 L852.87 219.86 L853.63 218.01 L854.38 216.55 L855.14 215.49 L855.9 214.74 L856.65 214.17 L857.41 213.62 L858.16 213.02 L858.92 212.35 L859.68 211.68 L860.43 211.17 L861.19 211.01 L861.95 211.39 L862.7 212.44 L863.46 214.17 L864.21 216.5 L864.97 219.18 L865.73 221.9 L866.48 224.26 L867.24 225.88 L868 226.43 L868.75 225.73 L869.51 223.74 L870.27 220.63 L871.02 216.71 L871.78 212.41 L872.53 208.24 L873.29 204.66 L874.05 202.08 L874.8 200.75 L875.56 200.73 L876.32 201.92 L877.07 204.04 L877.83 206.7 L878.58 209.46 L879.34 211.91 L880.1 213.72 L880.85 214.69 L881.61 214.79 L882.37 214.14 L883.12 212.98 L883.88 211.62 L884.64 210.41 L885.39 209.63 L886.15 209.5 L886.9 210.1 L887.66 211.35 L888.42 213.09 L889.17 215.05 L889.93 216.92 L890.69 218.39 L891.44 219.18 L892.2 218.98 L892.95 217.41 L893.71 213.83 L894.47 207.52 L895.22 198.1 L895.98 186.43 L896.74 175.03 L897.49 167.48 L898.25 166.48 L899.01 172.13 L899.76 181.9 L900.52 192.23 L901.27 200.56 L902.03 206.03 L902.79 209.05 L903.54 210.48 L904.3 211.06 L905.06 211.29 L905.81 211.56 L906.57 212.11 L907.32 213.13 L908.08 214.62 L908.84 216.34 L909.59 217.85 L910.35 218.63 L911.11 218.24 L911.86 216.53 L912.62 213.75 L913.38 210.5 L914.13 207.55 L914.89 205.62 L915.64 205.22 L916.4 206.52 L917.16 209.4 L917.91 213.51 L918.67 218.36 L919.43 223.4 L920.18 228.11 L920.94 232.01 L921.69 234.72 L922.45 236.01 L923.21 235.74 L923.96 233.96 L924.72 230.85 L925.48 226.71 L926.23 221.93 L926.99 216.94 L927.75 212.17 L928.5 207.97 L929.26 204.63 L930.01 202.33 L930.77 201.12 L931.53 200.96 L932.28 201.72 L933.04 203.21 L933.8 205.21 L934.55 207.51 L935.31 209.91 L936.06 212.24 L936.82 214.37 L937.58 216.19 L938.33 217.62 L939.09 218.59 L939.85 219.03 L940.6 218.93 L941.36 218.26 L942.12 217.06 L942.87 215.39 L943.63 213.4 L944.38 211.27 L945.14 209.23 L945.9 207.55 L946.65 206.46 L947.41 206.16 L948.17 206.77 L948.92 208.3 L949.68 210.63 L950.43 213.54 L951.19 216.68 L951.95 219.68 L952.7 222.16 L953.46 223.76 L954.22 224.28 L954.97 223.64 L955.73 221.92 L956.49 219.37 L957.24 216.35 L958 213.3 L958.75 210.67 L959.51 208.83 L960.27 208.04 L961.02 208.38 L961.78 209.75 L962.54 211.9 L963.29 214.45 L964.05 216.94 L964.8 218.96 L965.56 220.14 L966.32 220.29 L967.07 219.38 L967.83 217.55 L968.59 215.11 L969.34 212.46 L970.1 210.04 L970.86 208.23 L971.61 207.31 L972.37 207.4 L973.12 208.46 L973.88 210.24 L974.64 212.41 L975.39 214.56 L976.15 216.28 L976.91 217.26 L977.66 217.32 L978.42 216.43 L979.17 214.77 L979.93 212.63 L980.69 210.39 L981.44 208.45 L982.2 207.17" stroke="#f040e0" stroke-width="0.55" fill="none" stroke-linejoin="round" opacity=".85"/>
<path d="M694.8 208.76 L695.56 209.59 L696.31 211.14 L697.07 213.17 L697.83 215.32 L698.58 217.29 L699.34 218.79 L700.09 219.6 L700.85 219.62 L701.61 218.85 L702.36 217.36 L703.12 215.32 L703.88 212.93 L704.63 210.41 L705.39 207.98 L706.14 205.81 L706.9 204.08 L707.66 202.88 L708.41 202.28 L709.17 202.28 L709.93 202.83 L710.68 203.82 L711.44 205.09 L712.2 206.39 L712.95 207.36 L713.71 207.54 L714.46 206.41 L715.22 203.41 L715.98 198.23 L716.73 191.02 L717.49 182.6 L718.25 174.47 L719 168.43 L719.76 166.03 L720.51 167.99 L721.27 173.95 L722.03 182.69 L722.78 192.62 L723.54 202.33 L724.3 210.86 L725.05 217.7 L725.81 222.68 L726.57 225.76 L727.32 226.96 L728.08 226.36 L728.83 224.15 L729.59 220.64 L730.35 216.31 L731.1 211.72 L731.86 207.47 L732.62 204.09 L733.37 201.93 L734.13 201.05 L734.88 201.16 L735.64 201.64 L736.4 201.73 L737.15 200.88 L737.91 199.09 L738.67 197 L739.42 195.63 L740.18 195.77 L740.94 197.47 L741.69 200.05 L742.45 202.49 L743.2 204.08 L743.96 204.73 L744.72 204.85 L745.47 205.07 L746.23 205.92 L746.99 207.6 L747.74 210.04 L748.5 212.95 L749.25 215.89 L750.01 218.43 L750.77 220.23 L751.52 221.05 L752.28 220.84 L753.04 219.69 L753.79 217.85 L754.55 215.63 L755.31 213.41 L756.06 211.51 L756.82 210.19 L757.57 209.6 L758.33 209.77 L759.09 210.65 L759.84 212.08 L760.6 213.84 L761.36 215.74 L762.11 217.55 L762.87 219.11 L763.62 220.29 L764.38 221.01 L765.14 221.22 L765.89 220.88 L766.65 219.99 L767.41 218.56 L768.16 216.62 L768.92 214.24 L769.68 211.54 L770.43 208.7 L771.19 205.96 L771.94 203.6 L772.7 201.91 L773.46 201.16 L774.21 201.56 L774.97 203.17 L775.73 205.93 L776.48 209.62 L777.24 213.83 L777.99 218.09 L778.75 221.85 L779.51 224.62 L780.26 226 L781.02 225.8 L781.78 224.05 L782.53 221 L783.29 217.14 L784.05 213.09 L784.8 209.5 L785.56 206.96 L786.31 205.93 L787.07 206.58 L787.83 208.82 L788.58 212.28 L789.34 216.38 L790.1 220.39 L790.85 223.59 L791.61 225.38 L792.36 225.36 L793.12 223.47 L793.88 219.95 L794.63 215.31 L795.39 210.29 L796.15 205.7 L796.9 202.29 L797.66 200.62 L798.42 200.95 L799.17 203.23 L799.93 207.03 L800.68 211.68 L801.44 216.35 L802.2 220.19 L802.95 222.49 L803.71 222.81 L804.47 221.05 L805.22 217.47 L805.98 212.63 L806.73 207.36 L807.49 202.52 L808.25 198.92 L809 197.16 L809.76 197.5 L810.52 199.84 L811.27 203.72 L812.03 208.41 L812.79 213.01 L813.54 216.68 L814.3 218.69 L815.05 218.66 L815.81 216.53 L816.57 212.65 L817.32 207.68 L818.08 202.49 L818.84 197.99 L819.59 195 L820.35 194.07 L821.1 195.4 L821.86 198.79 L822.62 203.69 L823.37 209.26 L824.13 214.55 L824.89 218.66 L825.64 220.87 L826.4 220.78 L827.16 218.39 L827.91 214.07 L828.67 208.55 L829.42 202.71 L830.18 197.51 L830.94 193.78 L831.69 192.08 L832.45 192.64 L833.21 195.31 L833.96 199.6 L834.72 204.77 L835.47 209.98 L836.23 214.43 L836.99 217.51 L837.74 218.89 L838.5 218.57 L839.26 216.88 L840.01 214.4 L840.77 211.82 L841.53 209.84 L842.28 209 L843.04 209.61 L843.79 211.63 L844.55 214.74 L845.31 218.37 L846.06 221.82 L846.82 224.37 L847.58 225.43 L848.33 224.69 L849.09 222.14 L849.84 218.1 L850.6 213.18 L851.36 208.16 L852.11 203.81 L852.87 200.64 L853.63 198.52 L854.38 196.41 L855.14 192.78 L855.9 187.09 L856.65 181.47 L857.41 180.19 L858.16 186.18 L858.92 197.84 L859.68 209.97 L860.43 217.76 L861.19 219.64 L861.95 216.88 L862.7 211.71 L863.46 206.07 L864.21 201.3 L864.97 198.23 L865.73 197.28 L866.48 198.51 L867.24 201.66 L868 206.17 L868.75 211.32 L869.51 216.34 L870.27 220.52 L871.02 223.31 L871.78 224.43 L872.53 223.88 L873.29 221.91 L874.05 218.97 L874.8 215.63 L875.56 212.48 L876.32 210.03 L877.07 208.63 L877.83 208.44 L878.58 209.41 L879.34 211.29 L880.1 213.71 L880.85 216.26 L881.61 218.51 L882.37 220.12 L883.12 220.9 L883.88 220.77 L884.64 219.81 L885.39 218.23 L886.15 216.28 L886.9 214.26 L887.66 212.42 L888.42 210.94 L889.17 209.9 L889.93 209.29 L890.69 209 L891.44 208.84 L892.2 208.57 L892.95 207.94 L893.71 206.69 L894.47 204.54 L895.22 201.27 L895.98 196.71 L896.74 190.8 L897.49 183.71 L898.25 175.91 L899.01 168.19 L899.76 161.59 L900.52 157.24 L901.27 156.05 L902.03 158.48 L902.79 164.34 L903.54 172.81 L904.3 182.61 L905.06 192.31 L905.81 200.63 L906.57 206.66 L907.32 209.99 L908.08 210.67 L908.84 209.13 L909.59 206.02 L910.35 202.15 L911.11 198.33 L911.86 195.31 L912.62 193.72 L913.38 193.99 L914.13 196.32 L914.89 200.6 L915.64 206.48 L916.4 213.33 L917.16 220.37 L917.91 226.72 L918.67 231.54 L919.43 234.15 L920.18 234.13 L920.94 231.37 L921.69 226.15 L922.45 219.08 L923.21 211.05 L923.96 203.1 L924.72 196.27 L925.48 191.48 L926.23 189.38 L926.99 190.25 L927.75 193.94 L928.5 199.94 L929.26 207.39 L930.01 215.25 L930.77 222.45 L931.53 228 L932.28 231.22 L933.04 231.77 L933.8 229.72 L934.55 225.53 L935.31 219.97 L936.06 213.99 L936.82 208.56 L937.58 204.53 L938.33 202.48 L939.09 202.67 L939.85 204.96 L940.6 208.88 L941.36 213.73 L942.12 218.67 L942.87 222.88 L943.63 225.7 L944.38 226.73 L945.14 225.88 L945.9 223.39 L946.65 219.75 L947.41 215.62 L948.17 211.68 L948.92 208.56 L949.68 206.69 L950.43 206.23 L951.19 207.09 L951.95 208.93 L952.7 211.25 L953.46 213.48 L954.22 215.12 L954.97 215.8 L955.73 215.37 L956.49 213.93 L957.24 211.8 L958 209.45 L958.75 207.42 L959.51 206.19 L960.27 206.12 L961.02 207.37 L961.78 209.83 L962.54 213.18 L963.29 216.93 L964.05 220.52 L964.8 223.36 L965.56 225.02 L966.32 225.24 L967.07 223.98 L967.83 221.46 L968.59 218.06 L969.34 214.32 L970.1 210.78 L970.86 207.93 L971.61 206.13 L972.37 205.54 L973.12 206.15 L973.88 207.75 L974.64 210.02 L975.39 212.58 L976.15 215.08 L976.91 217.23 L977.66 218.87 L978.42 219.96 L979.17 220.55 L979.93 220.77 L980.69 220.74 L981.44 220.56 L982.2 220.23" stroke="#f03030" stroke-width="0.55" fill="none" stroke-linejoin="round" opacity=".85"/>
<path d="M694.8 202.98 L695.56 199.61 L696.31 198.01 L697.07 198.28 L697.83 200.28 L698.58 203.56 L699.34 207.51 L700.09 211.42 L700.85 214.61 L701.61 216.54 L702.36 216.87 L703.12 215.52 L703.88 212.64 L704.63 208.63 L705.39 204.03 L706.14 199.45 L706.9 195.48 L707.66 192.61 L708.41 191.18 L709.17 191.32 L709.93 192.98 L710.68 195.95 L711.44 199.89 L712.2 204.37 L712.95 208.98 L713.71 213.34 L714.46 217.16 L715.22 220.25 L715.98 222.53 L716.73 224.04 L717.49 224.87 L718.25 225.19 L719 225.16 L719.76 224.95 L720.51 224.68 L721.27 224.45 L722.03 224.27 L722.78 224.13 L723.54 223.95 L724.3 223.66 L725.05 223.16 L725.81 222.37 L726.57 221.25 L727.32 219.79 L728.08 218.03 L728.83 216.06 L729.59 214.01 L730.35 212.03 L731.1 210.25 L731.86 208.79 L732.62 207.73 L733.37 207.08 L734.13 206.8 L734.88 206.76 L735.64 206.81 L736.4 206.76 L737.15 206.45 L737.91 205.76 L738.67 204.64 L739.42 203.14 L740.18 201.4 L740.94 199.64 L741.69 198.15 L742.45 197.23 L743.2 197.14 L743.96 198.06 L744.72 200.05 L745.47 203.03 L746.23 206.78 L746.99 210.96 L747.74 215.16 L748.5 218.93 L749.25 221.89 L750.01 223.74 L750.77 224.32 L751.52 223.65 L752.28 221.92 L753.04 219.46 L753.79 216.68 L754.55 214.05 L755.31 211.97 L756.06 210.78 L756.82 210.68 L757.57 211.7 L758.33 213.73 L759.09 216.51 L759.84 219.71 L760.6 222.94 L761.36 225.85 L762.11 228.13 L762.87 229.58 L763.62 230.13 L764.38 229.79 L765.14 228.68 L765.89 227 L766.65 224.95 L767.41 222.76 L768.16 220.63 L768.92 218.69 L769.68 217.05 L770.43 215.74 L771.19 214.76 L771.94 214.06 L772.7 213.59 L773.46 213.27 L774.21 213 L774.97 212.7 L775.73 212.29 L776.48 211.67 L777.24 210.8 L777.99 209.62 L778.75 208.14 L779.51 206.37 L780.26 204.41 L781.02 202.38 L781.78 200.44 L782.53 198.76 L783.29 197.52 L784.05 196.87 L784.8 196.88 L785.56 197.58 L786.31 198.9 L787.07 200.7 L787.83 202.8 L788.58 204.99 L789.34 207.08 L790.1 208.93 L790.85 210.48 L791.61 211.75 L792.36 212.86 L793.12 213.96 L793.88 215.23 L794.63 216.81 L795.39 218.78 L796.15 221.09 L796.9 223.59 L797.66 226.01 L798.42 228 L799.17 229.21 L799.93 229.35 L800.68 228.22 L801.44 225.81 L802.2 222.27 L802.95 217.95 L803.71 213.33 L804.47 208.92 L805.22 205.24 L805.98 202.67 L806.73 201.41 L807.49 201.45 L808.25 202.54 L809 204.28 L809.76 206.16 L810.52 207.65 L811.27 208.32 L812.03 207.94 L812.79 206.44 L813.54 204.03 L814.3 201.08 L815.05 198.07 L815.81 195.53 L816.57 193.88 L817.32 193.39 L818.08 194.13 L818.84 195.9 L819.59 198.34 L820.35 200.95 L821.1 203.18 L821.86 204.61 L822.62 204.94 L823.37 204.15 L824.13 202.44 L824.89 200.26 L825.64 198.17 L826.4 196.78 L827.16 196.58 L827.91 197.89 L828.67 200.72 L829.42 204.8 L830.18 209.56 L830.94 214.26 L831.69 218.1 L832.45 220.36 L833.21 220.57 L833.96 218.56 L834.72 214.54 L835.47 209.12 L836.23 203.16 L836.99 197.66 L837.74 193.63 L838.5 191.87 L839.26 192.86 L840.01 196.66 L840.77 202.87 L841.53 210.72 L842.28 219.17 L843.04 227.07 L843.79 233.32 L844.55 237.11 L845.31 237.98 L846.06 235.96 L846.82 231.45 L847.58 225.26 L848.33 218.44 L849.09 212.07 L849.84 207.11 L850.6 204.28 L851.36 203.9 L852.11 205.91 L852.87 209.85 L853.63 214.99 L854.38 220.42 L855.14 225.25 L855.9 228.72 L856.65 230.34 L857.41 229.91 L858.16 227.57 L858.92 223.73 L859.68 219 L860.43 214.03 L861.19 209.47 L861.95 205.81 L862.7 203.32 L863.46 202.1 L864.21 201.99 L864.97 202.73 L865.73 203.94 L866.48 205.3 L867.24 206.52 L868 207.46 L868.75 208.08 L869.51 208.49 L870.27 208.84 L871.02 209.32 L871.78 210.07 L872.53 211.14 L873.29 212.5 L874.05 214.01 L874.8 215.43 L875.56 216.54 L876.32 217.11 L877.07 217 L877.83 216.18 L878.58 214.72 L879.34 212.84 L880.1 210.8 L880.85 208.92 L881.61 207.49 L882.37 206.71 L883.12 206.71 L883.88 207.45 L884.64 208.83 L885.39 210.61 L886.15 212.53 L886.9 214.32 L887.66 215.77 L888.42 216.72 L889.17 217.13 L889.93 217.04 L890.69 216.55 L891.44 215.84 L892.2 215.06 L892.95 214.37 L893.71 213.87 L894.47 213.62 L895.22 213.6 L895.98 213.78 L896.74 214.08 L897.49 214.44 L898.25 214.81 L899.01 215.15 L899.76 215.46 L900.52 215.72 L901.27 215.95 L902.03 216.12 L902.79 216.16 L903.54 215.95 L904.3 215.29 L905.06 213.88 L905.81 211.32 L906.57 207.19 L907.32 201.19 L908.08 193.35 L908.84 184.26 L909.59 175.09 L910.35 167.43 L911.11 162.75 L911.86 161.89 L912.62 164.72 L913.38 170.22 L914.13 176.94 L914.89 183.51 L915.64 189.01 L916.4 193.08 L917.16 195.81 L917.91 197.49 L918.67 198.51 L919.43 199.22 L920.18 199.93 L920.94 200.89 L921.69 202.31 L922.45 204.28 L923.21 206.83 L923.96 209.86 L924.72 213.2 L925.48 216.57 L926.23 219.68 L926.99 222.25 L927.75 224.07 L928.5 225.02 L929.26 225.12 L930.01 224.5 L930.77 223.41 L931.53 222.17 L932.28 221.12 L933.04 220.54 L933.8 220.64 L934.55 221.48 L935.31 222.99 L936.06 224.96 L936.82 227.07 L937.58 228.96 L938.33 230.26 L939.09 230.65 L939.85 229.95 L940.6 228.09 L941.36 225.17 L942.12 221.43 L942.87 217.24 L943.63 212.99 L944.38 209.12 L945.14 206 L945.9 203.9 L946.65 202.96 L947.41 203.19 L948.17 204.43 L948.92 206.43 L949.68 208.83 L950.43 211.25 L951.19 213.33 L951.95 214.75 L952.7 215.32 L953.46 214.95 L954.22 213.67 L954.97 211.64 L955.73 209.13 L956.49 206.45 L957.24 203.93 L958 201.87 L958.75 200.52 L959.51 200.01 L960.27 200.37 L961.02 201.51 L961.78 203.23 L962.54 205.27 L963.29 207.36 L964.05 209.22 L964.8 210.65 L965.56 211.56 L966.32 211.94 L967.07 211.93 L967.83 211.75 L968.59 211.67 L969.34 211.97 L970.1 212.88 L970.86 214.5 L971.61 216.83 L972.37 219.72 L973.12 222.87 L973.88 225.9 L974.64 228.4 L975.39 230.03 L976.15 230.52 L976.91 229.81 L977.66 227.99 L978.42 225.37 L979.17 222.4 L979.93 219.61 L980.69 217.51 L981.44 216.52 L982.2 216.85" stroke="#f0a030" stroke-width="0.55" fill="none" stroke-linejoin="round" opacity=".85"/>
<path d="M694.8 225.96 L695.56 226.46 L696.31 225.98 L697.07 224.49 L697.83 222.05 L698.58 218.78 L699.34 214.9 L700.09 210.63 L700.85 206.27 L701.61 202.1 L702.36 198.38 L703.12 195.36 L703.88 193.2 L704.63 192.03 L705.39 191.88 L706.14 192.71 L706.9 194.41 L707.66 196.81 L708.41 199.7 L709.17 202.85 L709.93 206 L710.68 208.93 L711.44 211.45 L712.2 213.4 L712.95 214.7 L713.71 215.32 L714.46 215.31 L715.22 214.77 L715.98 213.82 L716.73 212.66 L717.49 211.47 L718.25 210.45 L719 209.74 L719.76 209.5 L720.51 209.79 L721.27 210.65 L722.03 212.04 L722.78 213.89 L723.54 216.05 L724.3 218.36 L725.05 220.62 L725.81 222.65 L726.57 224.25 L727.32 225.27 L728.08 225.6 L728.83 225.18 L729.59 223.97 L730.35 222.04 L731.1 219.47 L731.86 216.38 L732.62 212.91 L733.37 209.23 L734.13 205.49 L734.88 201.84 L735.64 198.44 L736.4 195.44 L737.15 193 L737.91 191.28 L738.67 190.44 L739.42 190.58 L740.18 191.76 L740.94 193.95 L741.69 196.99 L742.45 200.64 L743.2 204.59 L743.96 208.49 L744.72 212.04 L745.47 214.98 L746.23 217.16 L746.99 218.51 L747.74 219.08 L748.5 218.97 L749.25 218.31 L750.01 217.29 L750.77 216.06 L751.52 214.78 L752.28 213.58 L753.04 212.56 L753.79 211.79 L754.55 211.3 L755.31 211.1 L756.06 211.16 L756.82 211.45 L757.57 211.9 L758.33 212.45 L759.09 213.03 L759.84 213.57 L760.6 214.04 L761.36 214.4 L762.11 214.62 L762.87 214.72 L763.62 214.7 L764.38 214.61 L765.14 214.48 L765.89 214.35 L766.65 214.27 L767.41 214.28 L768.16 214.39 L768.92 214.62 L769.68 214.98 L770.43 215.43 L771.19 215.96 L771.94 216.51 L772.7 217.06 L773.46 217.54 L774.21 217.91 L774.97 218.13 L775.73 218.18 L776.48 218.04 L777.24 217.7 L777.99 217.2 L778.75 216.54 L779.51 215.77 L780.26 214.93 L781.02 214.07 L781.78 213.23 L782.53 212.46 L783.29 211.79 L784.05 211.24 L784.8 210.82 L785.56 210.53 L786.31 210.35 L787.07 210.28 L787.83 210.26 L788.58 210.28 L789.34 210.3 L790.1 210.3 L790.85 210.26 L791.61 210.15 L792.36 210 L793.12 209.8 L793.88 209.58 L794.63 209.37 L795.39 209.2 L796.15 209.13 L796.9 209.18 L797.66 209.39 L798.42 209.79 L799.17 210.4 L799.93 211.23 L800.68 212.25 L801.44 213.45 L802.2 214.78 L802.95 216.19 L803.71 217.62 L804.47 218.99 L805.22 220.23 L805.98 221.26 L806.73 222 L807.49 222.41 L808.25 222.42 L809 221.99 L809.76 221.11 L810.52 219.78 L811.27 218.02 L812.03 215.87 L812.79 213.39 L813.54 210.66 L814.3 207.77 L815.05 204.82 L815.81 201.92 L816.57 199.19 L817.32 196.74 L818.08 194.65 L818.84 193.02 L819.59 191.92 L820.35 191.39 L821.1 191.45 L821.86 192.09 L822.62 193.28 L823.37 194.95 L824.13 197.02 L824.89 199.39 L825.64 201.92 L826.4 204.51 L827.16 207.01 L827.91 209.31 L828.67 211.3 L829.42 212.89 L830.18 214.04 L830.94 214.7 L831.69 214.9 L832.45 214.66 L833.21 214.07 L833.96 213.21 L834.72 212.21 L835.47 211.19 L836.23 210.27 L836.99 209.58 L837.74 209.2 L838.5 209.23 L839.26 209.69 L840.01 210.59 L840.77 211.89 L841.53 213.52 L842.28 215.36 L843.04 217.3 L843.79 219.17 L844.55 220.83 L845.31 222.13 L846.06 222.95 L846.82 223.18 L847.58 222.79 L848.33 221.74 L849.09 220.09 L849.84 217.91 L850.6 215.33 L851.36 212.52 L852.11 209.65 L852.87 206.93 L853.63 204.55 L854.38 202.68 L855.14 201.46 L855.9 201 L856.65 201.34 L857.41 202.47 L858.16 204.33 L858.92 206.81 L859.68 209.75 L860.43 212.95 L861.19 216.19 L861.95 219.27 L862.7 221.97 L863.46 224.11 L864.21 225.55 L864.97 226.2 L865.73 226.03 L866.48 225.05 L867.24 223.35 L868 221.05 L868.75 218.33 L869.51 215.37 L870.27 212.37 L871.02 209.55 L871.78 207.08 L872.53 205.11 L873.29 203.76 L874.05 203.08 L874.8 203.09 L875.56 203.75 L876.32 204.97 L877.07 206.63 L877.83 208.6 L878.58 210.72 L879.34 212.83 L880.1 214.79 L880.85 216.48 L881.61 217.82 L882.37 218.75 L883.12 219.26 L883.88 219.38 L884.64 219.16 L885.39 218.68 L886.15 218.02 L886.9 217.27 L887.66 216.54 L888.42 215.87 L889.17 215.32 L889.93 214.92 L890.69 214.66 L891.44 214.5 L892.2 214.39 L892.95 214.27 L893.71 214.06 L894.47 213.7 L895.22 213.13 L895.98 212.3 L896.74 211.22 L897.49 209.89 L898.25 208.37 L899.01 206.71 L899.76 205.02 L900.52 203.38 L901.27 201.91 L902.03 200.69 L902.79 199.81 L903.54 199.32 L904.3 199.24 L905.06 199.53 L905.81 200.12 L906.57 200.83 L907.32 201.32 L908.08 201.07 L908.84 199.36 L909.59 195.5 L910.35 189.23 L911.11 181.17 L911.86 173.02 L912.62 167.12 L913.38 165.41 L914.13 168.53 L914.89 175.41 L915.64 184 L916.4 192.26 L917.16 198.98 L917.91 203.99 L918.67 207.72 L919.43 210.82 L920.18 213.79 L920.94 216.85 L921.69 220.03 L922.45 223.23 L923.21 226.25 L923.96 228.87 L924.72 230.89 L925.48 232.1 L926.23 232.38 L926.99 231.62 L927.75 229.82 L928.5 227.04 L929.26 223.42 L930.01 219.14 L930.77 214.49 L931.53 209.73 L932.28 205.2 L933.04 201.18 L933.8 197.94 L934.55 195.72 L935.31 194.65 L936.06 194.79 L936.82 196.13 L937.58 198.56 L938.33 201.86 L939.09 205.8 L939.85 210.05 L940.6 214.29 L941.36 218.2 L942.12 221.47 L942.87 223.87 L943.63 225.22 L944.38 225.45 L945.14 224.55 L945.9 222.65 L946.65 219.92 L947.41 216.62 L948.17 213.06 L948.92 209.57 L949.68 206.47 L950.43 204.05 L951.19 202.55 L951.95 202.11 L952.7 202.81 L953.46 204.62 L954.22 207.39 L954.97 210.93 L955.73 214.94 L956.49 219.11 L957.24 223.08 L958 226.52 L958.75 229.12 L959.51 230.67 L960.27 231 L961.02 230.07 L961.78 227.92 L962.54 224.71 L963.29 220.68 L964.05 216.13 L964.8 211.42 L965.56 206.92 L966.32 202.99 L967.07 199.94 L967.83 198.01 L968.59 197.37 L969.34 198.06 L970.1 200.04 L970.86 203.15 L971.61 207.14 L972.37 211.7 L973.12 216.46 L973.88 221.04 L974.64 225.08 L975.39 228.26 L976.15 230.32 L976.91 231.12 L977.66 230.57 L978.42 228.75 L979.17 225.78 L979.93 221.92 L980.69 217.48 L981.44 212.8 L982.2 208.26" stroke="#e8e030" stroke-width="0.55" fill="none" stroke-linejoin="round" opacity=".85"/>
<path d="M694.8 207.17 L695.56 206.48 L696.31 206.21 L697.07 206.41 L697.83 207.08 L698.58 208.17 L699.34 209.59 L700.09 211.2 L700.85 212.82 L701.61 214.27 L702.36 215.34 L703.12 215.85 L703.88 215.59 L704.63 214.37 L705.39 211.94 L706.14 208.08 L706.9 202.65 L707.66 195.72 L708.41 187.77 L709.17 179.76 L709.93 173.01 L710.68 168.85 L711.44 168.17 L712.2 171.12 L712.95 177.04 L713.71 184.76 L714.46 193.08 L715.22 201.03 L715.98 208.1 L716.73 214.07 L717.49 218.91 L718.25 222.66 L719 225.29 L719.76 226.79 L720.51 227.13 L721.27 226.35 L722.03 224.53 L722.78 221.85 L723.54 218.53 L724.3 214.85 L725.05 211.1 L725.81 207.59 L726.57 204.58 L727.32 202.29 L728.08 200.88 L728.83 200.44 L729.59 200.97 L730.35 202.4 L731.1 204.58 L731.86 207.32 L732.62 210.4 L733.37 213.57 L734.13 216.59 L734.88 219.25 L735.64 221.35 L736.4 222.78 L737.15 223.46 L737.91 223.37 L738.67 222.54 L739.42 221.07 L740.18 219.07 L740.94 216.7 L741.69 214.12 L742.45 211.49 L743.2 208.97 L743.96 206.72 L744.72 204.85 L745.47 203.47 L746.23 202.64 L746.99 202.41 L747.74 202.81 L748.5 203.8 L749.25 205.38 L750.01 207.46 L750.77 209.97 L751.52 212.82 L752.28 215.87 L753.04 218.98 L753.79 222.01 L754.55 224.8 L755.31 227.18 L756.06 229 L756.82 230.13 L757.57 230.47 L758.33 229.94 L759.09 228.53 L759.84 226.28 L760.6 223.28 L761.36 219.67 L762.11 215.65 L762.87 211.46 L763.62 207.37 L764.38 203.64 L765.14 200.54 L765.89 198.28 L766.65 197.04 L767.41 196.92 L768.16 197.95 L768.92 200.06 L769.68 203.11 L770.43 206.88 L771.19 211.09 L771.94 215.43 L772.7 219.57 L773.46 223.18 L774.21 225.99 L774.97 227.78 L775.73 228.42 L776.48 227.86 L777.24 226.16 L777.99 223.45 L778.75 219.97 L779.51 216 L780.26 211.86 L781.02 207.89 L781.78 204.39 L782.53 201.63 L783.29 199.83 L784.05 199.1 L784.8 199.47 L785.56 200.89 L786.31 203.22 L787.07 206.27 L787.83 209.77 L788.58 213.46 L789.34 217.07 L790.1 220.36 L790.85 223.12 L791.61 225.21 L792.36 226.56 L793.12 227.16 L793.88 227.05 L794.63 226.34 L795.39 225.16 L796.15 223.65 L796.9 221.96 L797.66 220.23 L798.42 218.53 L799.17 216.92 L799.93 215.43 L800.68 214.01 L801.44 212.64 L802.2 211.22 L802.95 209.71 L803.71 208.04 L804.47 206.19 L805.22 204.18 L805.98 202.07 L806.73 199.95 L807.49 197.96 L808.25 196.27 L809 195.04 L809.76 194.43 L810.52 194.56 L811.27 195.52 L812.03 197.31 L812.79 199.88 L813.54 203.1 L814.3 206.78 L815.05 210.66 L815.81 214.47 L816.57 217.91 L817.32 220.7 L818.08 222.59 L818.84 223.42 L819.59 223.09 L820.35 221.59 L821.1 219.02 L821.86 215.56 L822.62 211.47 L823.37 207.06 L824.13 202.7 L824.89 198.71 L825.64 195.42 L826.4 193.1 L827.16 191.93 L827.91 192 L828.67 193.3 L829.42 195.73 L830.18 199.1 L830.94 203.12 L831.69 207.5 L832.45 211.89 L833.21 215.96 L833.96 219.43 L834.72 222.05 L835.47 223.67 L836.23 224.21 L836.99 223.68 L837.74 222.18 L838.5 219.88 L839.26 216.98 L840.01 213.75 L840.77 210.44 L841.53 207.32 L842.28 204.59 L843.04 202.43 L843.79 200.97 L844.55 200.26 L845.31 200.3 L846.06 201.04 L846.82 202.38 L847.58 204.21 L848.33 206.39 L849.09 208.77 L849.84 211.22 L850.6 213.63 L851.36 215.9 L852.11 217.96 L852.87 219.77 L853.63 221.31 L854.38 222.56 L855.14 223.51 L855.9 224.17 L856.65 224.54 L857.41 224.6 L858.16 224.35 L858.92 223.78 L859.68 222.89 L860.43 221.68 L861.19 220.15 L861.95 218.36 L862.7 216.35 L863.46 214.2 L864.21 212.01 L864.97 209.87 L865.73 207.91 L866.48 206.24 L867.24 204.97 L868 204.16 L868.75 203.87 L869.51 204.11 L870.27 204.85 L871.02 206.05 L871.78 207.6 L872.53 209.38 L873.29 211.27 L874.05 213.12 L874.8 214.82 L875.56 216.26 L876.32 217.37 L877.07 218.11 L877.83 218.48 L878.58 218.51 L879.34 218.26 L880.1 217.82 L880.85 217.27 L881.61 216.71 L882.37 216.21 L883.12 215.81 L883.88 215.55 L884.64 215.4 L885.39 215.32 L886.15 215.26 L886.9 215.12 L887.66 214.84 L888.42 214.33 L889.17 213.55 L889.93 212.47 L890.69 211.13 L891.44 209.56 L892.2 207.88 L892.95 206.2 L893.71 204.68 L894.47 203.44 L895.22 202.63 L895.98 202.36 L896.74 202.66 L897.49 203.56 L898.25 205 L899.01 206.87 L899.76 209.01 L900.52 211.21 L901.27 213.27 L902.03 214.96 L902.79 216.1 L903.54 216.52 L904.3 216.15 L905.06 214.97 L905.81 213.04 L906.57 210.5 L907.32 207.55 L908.08 204.45 L908.84 201.47 L909.59 198.91 L910.35 197.01 L911.11 195.99 L911.86 195.99 L912.62 197.06 L913.38 199.16 L914.13 202.15 L914.89 205.83 L915.64 209.93 L916.4 214.11 L917.16 218.06 L917.91 221.44 L918.67 223.97 L919.43 225.4 L920.18 225.55 L920.94 224.3 L921.69 221.65 L922.45 217.69 L923.21 212.7 L923.96 207.11 L924.72 201.53 L925.48 196.62 L926.23 192.99 L926.99 191.08 L927.75 191.02 L928.5 192.67 L929.26 195.63 L930.01 199.42 L930.77 203.56 L931.53 207.67 L932.28 211.45 L933.04 214.71 L933.8 217.32 L934.55 219.22 L935.31 220.37 L936.06 220.77 L936.82 220.49 L937.58 219.64 L938.33 218.37 L939.09 216.87 L939.85 215.33 L940.6 213.93 L941.36 212.83 L942.12 212.15 L942.87 211.93 L943.63 212.18 L944.38 212.84 L945.14 213.79 L945.9 214.89 L946.65 215.98 L947.41 216.91 L948.17 217.53 L948.92 217.74 L949.68 217.48 L950.43 216.75 L951.19 215.6 L951.95 214.13 L952.7 212.47 L953.46 210.79 L954.22 209.25 L954.97 208.01 L955.73 207.19 L956.49 206.89 L957.24 207.13 L958 207.91 L958.75 209.15 L959.51 210.74 L960.27 212.54 L961.02 214.4 L961.78 216.14 L962.54 217.63 L963.29 218.74 L964.05 219.42 L964.8 219.61 L965.56 219.36 L966.32 218.71 L967.07 217.76 L967.83 216.63 L968.59 215.46 L969.34 214.38 L970.1 213.48 L970.86 212.85 L971.61 212.54 L972.37 212.55 L973.12 212.84 L973.88 213.35 L974.64 214 L975.39 214.68 L976.15 215.3 L976.91 215.76 L977.66 215.99 L978.42 215.96 L979.17 215.65 L979.93 215.1 L980.69 214.35 L981.44 213.49 L982.2 212.59" stroke="#a0e030" stroke-width="0.55" fill="none" stroke-linejoin="round" opacity=".85"/>
<path d="M694.8 216.72 L695.56 213.25 L696.31 210.65 L697.07 209.22 L697.83 209.01 L698.58 209.88 L699.34 211.55 L700.09 213.59 L700.85 215.55 L701.61 217 L702.36 217.65 L703.12 217.31 L703.88 215.97 L704.63 213.73 L705.39 210.74 L706.14 207 L706.9 202.3 L707.66 196.14 L708.41 188.26 L709.17 179.26 L709.93 171.09 L710.68 166.52 L711.44 167.57 L712.2 174.1 L712.95 183.79 L713.71 193.58 L714.46 201.27 L715.22 206.21 L715.98 208.83 L716.73 209.95 L717.49 210.24 L718.25 210.14 L719 209.89 L719.76 209.62 L720.51 209.45 L721.27 209.47 L722.03 209.73 L722.78 210.3 L723.54 211.21 L724.3 212.45 L725.05 214 L725.81 215.76 L726.57 217.6 L727.32 219.35 L728.08 220.8 L728.83 221.73 L729.59 221.97 L730.35 221.38 L731.1 219.92 L731.86 217.67 L732.62 214.82 L733.37 211.65 L734.13 208.52 L734.88 205.81 L735.64 203.88 L736.4 202.97 L737.15 203.23 L737.91 204.61 L738.67 206.91 L739.42 209.81 L740.18 212.87 L740.94 215.65 L741.69 217.74 L742.45 218.88 L743.2 218.94 L743.96 218 L744.72 216.33 L745.47 214.32 L746.23 212.44 L746.99 211.16 L747.74 210.84 L748.5 211.68 L749.25 213.7 L750.01 216.65 L750.77 220.14 L751.52 223.61 L752.28 226.5 L753.04 228.26 L753.79 228.52 L754.55 227.11 L755.31 224.1 L756.06 219.8 L756.82 214.74 L757.57 209.54 L758.33 204.86 L759.09 201.29 L759.84 199.23 L760.6 198.87 L761.36 200.13 L762.11 202.72 L762.87 206.16 L763.62 209.86 L764.38 213.25 L765.14 215.84 L765.89 217.33 L766.65 217.59 L767.41 216.77 L768.16 215.15 L768.92 213.17 L769.68 211.32 L770.43 210.04 L771.19 209.66 L771.94 210.32 L772.7 212 L773.46 214.46 L774.21 217.34 L774.97 220.2 L775.73 222.58 L776.48 224.12 L777.24 224.56 L777.99 223.82 L778.75 221.99 L779.51 219.31 L780.26 216.13 L781.02 212.86 L781.78 209.88 L782.53 207.53 L783.29 206.01 L784.05 205.42 L784.8 205.74 L785.56 206.83 L786.31 208.47 L787.07 210.43 L787.83 212.48 L788.58 214.41 L789.34 216.09 L790.1 217.43 L790.85 218.4 L791.61 219.02 L792.36 219.33 L793.12 219.38 L793.88 219.2 L794.63 218.84 L795.39 218.33 L796.15 217.69 L796.9 216.93 L797.66 216.07 L798.42 215.07 L799.17 213.83 L799.93 212.17 L800.68 209.79 L801.44 206.26 L802.2 201.09 L802.95 193.89 L803.71 184.5 L804.47 173.22 L805.22 160.89 L805.98 148.84 L806.73 138.67 L807.49 131.9 L808.25 129.5 L809 131.75 L809.76 138.09 L810.52 147.41 L811.27 158.37 L812.03 169.71 L812.79 180.46 L813.54 190.06 L814.3 198.25 L815.05 204.93 L815.81 210.1 L816.57 213.77 L817.32 215.97 L818.08 216.79 L818.84 216.41 L819.59 215.1 L820.35 213.26 L821.1 211.32 L821.86 209.71 L822.62 208.78 L823.37 208.74 L824.13 209.62 L824.89 211.27 L825.64 213.38 L826.4 215.51 L827.16 217.2 L827.91 218.03 L828.67 217.68 L829.42 216.04 L830.18 213.18 L830.94 209.38 L831.69 205.08 L832.45 200.81 L833.21 197.11 L833.96 194.42 L834.72 193.07 L835.47 193.16 L836.23 194.61 L836.99 197.14 L837.74 200.32 L838.5 203.68 L839.26 206.75 L840.01 209.17 L840.77 210.73 L841.53 211.39 L842.28 211.28 L843.04 210.71 L843.79 210.03 L844.55 209.63 L845.31 209.83 L846.06 210.83 L846.82 212.7 L847.58 215.31 L848.33 218.42 L849.09 221.67 L849.84 224.68 L850.6 227.08 L851.36 228.61 L852.11 229.1 L852.87 228.56 L853.63 227.1 L854.38 224.95 L855.14 222.41 L855.9 219.77 L856.65 217.3 L857.41 215.18 L858.16 213.51 L858.92 212.28 L859.68 211.42 L860.43 210.81 L861.19 210.32 L861.95 209.84 L862.7 209.31 L863.46 208.74 L864.21 208.16 L864.97 207.67 L865.73 207.35 L866.48 207.29 L867.24 207.53 L868 208.06 L868.75 208.83 L869.51 209.73 L870.27 210.65 L871.02 211.5 L871.78 212.21 L872.53 212.75 L873.29 213.15 L874.05 213.5 L874.8 213.88 L875.56 214.4 L876.32 215.12 L877.07 216.04 L877.83 217.11 L878.58 218.2 L879.34 219.15 L880.1 219.76 L880.85 219.89 L881.61 219.41 L882.37 218.31 L883.12 216.69 L883.88 214.72 L884.64 212.66 L885.39 210.8 L886.15 209.39 L886.9 208.66 L887.66 208.7 L888.42 209.48 L889.17 210.84 L889.93 212.51 L890.69 214.16 L891.44 215.45 L892.2 216.09 L892.95 215.89 L893.71 214.8 L894.47 212.92 L895.22 210.48 L895.98 207.81 L896.74 205.26 L897.49 203.2 L898.25 201.87 L899.01 201.43 L899.76 201.84 L900.52 202.97 L901.27 204.54 L902.03 206.21 L902.79 207.67 L903.54 208.63 L904.3 208.93 L905.06 208.55 L905.81 207.61 L906.57 206.34 L907.32 205.06 L908.08 204.09 L908.84 203.72 L909.59 204.14 L910.35 205.39 L911.11 207.4 L911.86 209.93 L912.62 212.69 L913.38 215.32 L914.13 217.5 L914.89 218.96 L915.64 219.56 L916.4 219.28 L917.16 218.25 L917.91 216.65 L918.67 214.77 L919.43 212.87 L920.18 211.18 L920.94 209.86 L921.69 208.98 L922.45 208.49 L923.21 208.3 L923.96 208.27 L924.72 208.26 L925.48 208.16 L926.23 207.93 L926.99 207.6 L927.75 207.27 L928.5 207.09 L929.26 207.2 L930.01 207.75 L930.77 208.79 L931.53 210.33 L932.28 212.26 L933.04 214.42 L933.8 216.61 L934.55 218.6 L935.31 220.22 L936.06 221.34 L936.82 221.93 L937.58 222.03 L938.33 221.78 L939.09 221.33 L939.85 220.86 L940.6 220.5 L941.36 220.3 L942.12 220.25 L942.87 220.24 L943.63 220.11 L944.38 219.67 L945.14 218.75 L945.9 217.24 L946.65 215.13 L947.41 212.53 L948.17 209.67 L948.92 206.85 L949.68 204.42 L950.43 202.7 L951.19 201.96 L951.95 202.3 L952.7 203.73 L953.46 206.06 L954.22 208.99 L954.97 212.12 L955.73 215.05 L956.49 217.41 L957.24 218.94 L958 219.5 L958.75 219.14 L959.51 218.04 L960.27 216.5 L961.02 214.87 L961.78 213.49 L962.54 212.62 L963.29 212.41 L964.05 212.86 L964.8 213.81 L965.56 215.01 L966.32 216.13 L967.07 216.85 L967.83 216.91 L968.59 216.17 L969.34 214.63 L970.1 212.46 L970.86 209.94 L971.61 207.44 L972.37 205.38 L973.12 204.1 L973.88 203.87 L974.64 204.79 L975.39 206.83 L976.15 209.78 L976.91 213.35 L977.66 217.15 L978.42 220.79 L979.17 223.93 L979.93 226.31 L980.69 227.82 L981.44 228.43 L982.2 228.26" stroke="#30d040" stroke-width="0.55" fill="none" stroke-linejoin="round" opacity=".85"/>
<path d="M694.8 201.4 L695.56 201.54 L696.31 203.24 L697.07 206.15 L697.83 209.7 L698.58 213.29 L699.34 216.28 L700.09 218.23 L700.85 218.88 L701.61 218.24 L702.36 216.57 L703.12 214.32 L703.88 212.03 L704.63 210.24 L705.39 209.35 L706.14 209.58 L706.9 210.88 L707.66 212.96 L708.41 215.33 L709.17 217.42 L709.93 218.62 L710.68 218.49 L711.44 216.78 L712.2 213.53 L712.95 209.06 L713.71 203.97 L714.46 198.98 L715.22 194.92 L715.98 192.48 L716.73 192.19 L717.49 194.25 L718.25 198.56 L719 204.63 L719.76 211.76 L720.51 219.03 L721.27 225.51 L722.03 230.38 L722.78 233.03 L723.54 233.17 L724.3 230.88 L725.05 226.56 L725.81 220.89 L726.57 214.69 L727.32 208.84 L728.08 204.11 L728.83 201.06 L729.59 199.97 L730.35 200.8 L731.1 203.24 L731.86 206.73 L732.62 210.6 L733.37 214.16 L734.13 216.82 L734.88 218.18 L735.64 218.08 L736.4 216.59 L737.15 214.04 L737.91 210.89 L738.67 207.68 L739.42 204.93 L740.18 203.07 L740.94 202.33 L741.69 202.79 L742.45 204.31 L743.2 206.59 L743.96 209.26 L744.72 211.92 L745.47 214.22 L746.23 215.94 L746.99 216.99 L747.74 217.43 L748.5 217.46 L749.25 217.37 L750.01 217.46 L750.77 217.99 L751.52 219.12 L752.28 220.87 L753.04 223.13 L753.79 225.63 L754.55 228.02 L755.31 229.92 L756.06 230.95 L756.82 230.83 L757.57 229.4 L758.33 226.61 L759.09 222.21 L759.84 215.34 L760.6 204.45 L761.36 189.29 L762.11 174.15 L762.87 166.72 L763.62 170.78 L764.38 181.92 L765.14 192.85 L765.89 200.22 L766.65 204.79 L767.41 208.08 L768.16 210.77 L768.92 212.85 L769.68 214.15 L770.43 214.54 L771.19 214.04 L771.94 212.77 L772.7 210.98 L773.46 208.96 L774.21 207.03 L774.97 205.49 L775.73 204.58 L776.48 204.44 L777.24 205.11 L777.99 206.54 L778.75 208.59 L779.51 211.06 L780.26 213.7 L781.02 216.27 L781.78 218.55 L782.53 220.4 L783.29 221.7 L784.05 222.42 L784.8 222.62 L785.56 222.36 L786.31 221.77 L787.07 220.99 L787.83 220.15 L788.58 219.35 L789.34 218.66 L790.1 218.11 L790.85 217.71 L791.61 217.4 L792.36 217.15 L793.12 216.91 L793.88 216.63 L794.63 216.29 L795.39 215.91 L796.15 215.51 L796.9 215.14 L797.66 214.84 L798.42 214.59 L799.17 214.23 L799.93 213.29 L800.68 210.87 L801.44 205.67 L802.2 196.66 L802.95 184.19 L803.71 170.84 L804.47 160.86 L805.22 157.91 L805.98 162.61 L806.73 172.17 L807.49 182.29 L808.25 189.73 L809 193.55 L809.76 194.55 L810.52 194.14 L811.27 193.47 L812.03 193.17 L812.79 193.41 L813.54 193.82 L814.3 193.06 L815.05 188.69 L815.81 179.02 L816.57 167.15 L817.32 161.29 L818.08 167.22 L818.84 181.33 L819.59 195.01 L820.35 203.44 L821.1 207.35 L821.86 209.21 L822.62 210.59 L823.37 212.03 L824.13 213.62 L824.89 215.26 L825.64 216.81 L826.4 218.11 L827.16 219.02 L827.91 219.47 L828.67 219.43 L829.42 218.96 L830.18 218.19 L830.94 217.29 L831.69 216.44 L832.45 215.81 L833.21 215.48 L833.96 215.48 L834.72 215.7 L835.47 215.96 L836.23 216.03 L836.99 215.64 L837.74 214.55 L838.5 212.61 L839.26 209.8 L840.01 206.22 L840.77 202.14 L841.53 197.95 L842.28 194.12 L843.04 191.1 L843.79 189.33 L844.55 189.08 L845.31 190.46 L846.06 193.4 L846.82 197.6 L847.58 202.61 L848.33 207.9 L849.09 212.9 L849.84 217.11 L850.6 220.16 L851.36 221.87 L852.11 222.27 L852.87 221.57 L853.63 220.17 L854.38 218.52 L855.14 217.1 L855.9 216.29 L856.65 216.33 L857.41 217.3 L858.16 219.05 L858.92 221.29 L859.68 223.61 L860.43 225.57 L861.19 226.77 L861.95 226.96 L862.7 226.02 L863.46 224.07 L864.21 221.38 L864.97 218.38 L865.73 215.52 L866.48 213.26 L867.24 211.91 L868 211.65 L868.75 212.41 L869.51 213.94 L870.27 215.82 L871.02 217.53 L871.78 218.57 L872.53 218.55 L873.29 217.23 L874.05 214.64 L874.8 211.03 L875.56 206.87 L876.32 202.81 L877.07 199.49 L877.83 197.51 L878.58 197.31 L879.34 199.06 L880.1 202.62 L880.85 207.57 L881.61 213.27 L882.37 218.91 L883.12 223.66 L883.88 226.81 L884.64 227.85 L885.39 226.58 L886.15 223.13 L886.9 217.95 L887.66 211.74 L888.42 205.34 L889.17 199.62 L889.93 195.31 L890.69 192.96 L891.44 192.79 L892.2 194.71 L892.95 198.35 L893.71 203.08 L894.47 208.19 L895.22 212.94 L895.98 216.7 L896.74 219.08 L897.49 219.9 L898.25 219.28 L899.01 217.55 L899.76 215.21 L900.52 212.8 L901.27 210.82 L902.03 209.65 L902.79 209.46 L903.54 210.22 L904.3 211.7 L905.06 213.51 L905.81 215.24 L906.57 216.46 L907.32 216.89 L908.08 216.38 L908.84 215 L909.59 212.99 L910.35 210.67 L911.11 208.3 L911.86 205.66 L912.62 201.75 L913.38 195.49 L914.13 188.06 L914.89 183.93 L915.64 187.07 L916.4 195.95 L917.16 204.9 L917.91 209.82 L918.67 210.36 L919.43 208.02 L920.18 204.16 L920.94 199.71 L921.69 195.39 L922.45 191.88 L923.21 189.76 L923.96 189.44 L924.72 191.11 L925.48 194.67 L926.23 199.78 L926.99 205.9 L927.75 212.36 L928.5 218.46 L929.26 223.6 L930.01 227.35 L930.77 229.46 L931.53 229.97 L932.28 229.11 L933.04 227.27 L933.8 224.94 L934.55 222.61 L935.31 220.68 L936.06 219.4 L936.82 218.87 L937.58 219 L938.33 219.6 L939.09 220.36 L939.85 221 L940.6 221.27 L941.36 221.03 L942.12 220.28 L942.87 219.12 L943.63 217.78 L944.38 216.49 L945.14 215.48 L945.9 214.92 L946.65 214.82 L947.41 215.1 L948.17 215.53 L948.92 215.83 L949.68 215.66 L950.43 214.64 L951.19 212.09 L951.95 206.31 L952.7 195.16 L953.46 179.87 L954.22 168.3 L954.97 168.29 L955.73 177.71 L956.49 188.07 L957.24 195.08 L958 199.97 L958.75 204.71 L959.51 209.86 L960.27 215.07 L961.02 219.7 L961.78 223.18 L962.54 225.05 L963.29 225.13 L964.05 223.47 L964.8 220.4 L965.56 216.42 L966.32 212.19 L967.07 208.36 L967.83 205.53 L968.59 204.11 L969.34 204.29 L970.1 206 L970.86 208.97 L971.61 212.74 L972.37 216.76 L973.12 220.48 L973.88 223.44 L974.64 225.36 L975.39 226.12 L976.15 225.82 L976.91 224.73 L977.66 223.2 L978.42 221.64 L979.17 220.37 L979.93 219.63 L980.69 219.49 L981.44 219.85 L982.2 220.49" stroke="#30d8e0" stroke-width="0.55" fill="none" stroke-linejoin="round" opacity=".85"/>
<path d="M694.8 207.26 L695.56 213.8 L696.31 219.64 L697.07 224.26 L697.83 227.32 L698.58 228.67 L699.34 228.33 L700.09 226.5 L700.85 223.53 L701.61 219.81 L702.36 215.79 L703.12 211.84 L703.88 208.31 L704.63 205.42 L705.39 203.31 L706.14 202.04 L706.9 201.59 L707.66 201.93 L708.41 202.99 L709.17 204.7 L709.93 207 L710.68 209.81 L711.44 213.06 L712.2 216.62 L712.95 220.33 L713.71 223.98 L714.46 227.3 L715.22 230.02 L715.98 231.87 L716.73 232.61 L717.49 232.09 L718.25 230.28 L719 227.27 L719.76 223.26 L720.51 218.58 L721.27 213.62 L722.03 208.8 L722.78 204.49 L723.54 201 L724.3 198.51 L725.05 197.05 L725.81 196.53 L726.57 196.75 L727.32 197.42 L728.08 198.26 L728.83 198.98 L729.59 199.4 L730.35 199.45 L731.1 199.15 L731.86 198.65 L732.62 198.19 L733.37 198 L734.13 198.35 L734.88 199.4 L735.64 201.25 L736.4 203.85 L737.15 207.09 L737.91 210.73 L738.67 214.49 L739.42 218.1 L740.18 221.31 L740.94 223.95 L741.69 225.94 L742.45 227.29 L743.2 228.11 L743.96 228.55 L744.72 228.75 L745.47 228.87 L746.23 228.97 L746.99 229.04 L747.74 229.03 L748.5 228.77 L749.25 228.11 L750.01 226.88 L750.77 224.99 L751.52 222.4 L752.28 219.2 L753.04 215.57 L753.79 211.8 L754.55 208.21 L755.31 205.15 L756.06 202.92 L756.82 201.73 L757.57 201.69 L758.33 202.78 L759.09 204.84 L759.84 207.61 L760.6 210.79 L761.36 214.03 L762.11 217.01 L762.87 219.47 L763.62 221.25 L764.38 222.25 L765.14 222.48 L765.89 222 L766.65 220.93 L767.41 219.36 L768.16 217.39 L768.92 215.11 L769.68 212.56 L770.43 209.78 L771.19 206.81 L771.94 203.75 L772.7 200.71 L773.46 197.91 L774.21 195.57 L774.97 193.99 L775.73 193.44 L776.48 194.16 L777.24 196.28 L777.99 199.82 L778.75 204.63 L779.51 210.4 L780.26 216.69 L781.02 222.95 L781.78 228.61 L782.53 233.12 L783.29 236.03 L784.05 237.07 L784.8 236.15 L785.56 233.42 L786.31 229.2 L787.07 223.98 L787.83 218.35 L788.58 212.92 L789.34 208.23 L790.1 204.72 L790.85 202.68 L791.61 202.19 L792.36 203.19 L793.12 205.42 L793.88 208.54 L794.63 212.17 L795.39 215.89 L796.15 219.33 L796.9 222.23 L797.66 224.36 L798.42 225.63 L799.17 225.99 L799.93 225.45 L800.68 224.03 L801.44 221.68 L802.2 218.23 L802.95 213.34 L803.71 206.55 L804.47 197.56 L805.22 186.59 L805.98 174.83 L806.73 164.35 L807.49 157.55 L808.25 156.07 L809 160.06 L809.76 168.11 L810.52 178.1 L811.27 188.06 L812.03 196.85 L812.79 204.07 L813.54 209.75 L814.3 214 L815.05 216.85 L815.81 218.23 L816.57 218.11 L817.32 216.56 L818.08 213.8 L818.84 210.19 L819.59 206.2 L820.35 202.35 L821.1 199.11 L821.86 196.89 L822.62 195.93 L823.37 196.29 L824.13 197.87 L824.89 200.38 L825.64 203.43 L826.4 206.56 L827.16 209.34 L827.91 211.39 L828.67 212.48 L829.42 212.5 L830.18 211.51 L830.94 209.7 L831.69 207.37 L832.45 204.86 L833.21 202.51 L833.96 200.64 L834.72 199.45 L835.47 199.1 L836.23 199.61 L836.99 200.95 L837.74 203.02 L838.5 205.69 L839.26 208.84 L840.01 212.33 L840.77 216.05 L841.53 219.88 L842.28 223.73 L843.04 227.46 L843.79 230.9 L844.55 233.87 L845.31 236.15 L846.06 237.49 L846.82 237.71 L847.58 236.63 L848.33 234.21 L849.09 230.49 L849.84 225.66 L850.6 220.02 L851.36 213.98 L852.11 208.02 L852.87 202.6 L853.63 198.13 L854.38 194.95 L855.14 193.21 L855.9 192.93 L856.65 193.96 L857.41 196.02 L858.16 198.74 L858.92 201.72 L859.68 204.6 L860.43 207.08 L861.19 208.99 L861.95 210.29 L862.7 211.04 L863.46 211.43 L864.21 211.67 L864.97 211.99 L865.73 212.57 L866.48 213.49 L867.24 214.74 L868 216.22 L868.75 217.73 L869.51 219.03 L870.27 219.9 L871.02 220.15 L871.78 219.69 L872.53 218.52 L873.29 216.77 L874.05 214.66 L874.8 212.47 L875.56 210.51 L876.32 209.06 L877.07 208.32 L877.83 208.41 L878.58 209.33 L879.34 210.98 L880.1 213.18 L880.85 215.69 L881.61 218.28 L882.37 220.72 L883.12 222.85 L883.88 224.57 L884.64 225.86 L885.39 226.73 L886.15 227.23 L886.9 227.4 L887.66 227.27 L888.42 226.82 L889.17 226 L889.93 224.72 L890.69 222.89 L891.44 220.42 L892.2 217.31 L892.95 213.59 L893.71 209.42 L894.47 204.99 L895.22 200.57 L895.98 196.39 L896.74 192.62 L897.49 189.32 L898.25 186.43 L899.01 183.84 L899.76 181.5 L900.52 179.55 L901.27 178.31 L902.03 178.2 L902.79 179.48 L903.54 182.07 L904.3 185.51 L905.06 189.1 L905.81 192.21 L906.57 194.48 L907.32 195.92 L908.08 196.84 L908.84 197.7 L909.59 198.9 L910.35 200.7 L911.11 203.18 L911.86 206.24 L912.62 209.65 L913.38 213.14 L914.13 216.4 L914.89 219.18 L915.64 221.32 L916.4 222.76 L917.16 223.55 L917.91 223.83 L918.67 223.8 L919.43 223.67 L920.18 223.62 L920.94 223.78 L921.69 224.19 L922.45 224.79 L923.21 225.47 L923.96 226.04 L924.72 226.33 L925.48 226.17 L926.23 225.44 L926.99 224.13 L927.75 222.28 L928.5 220 L929.26 217.47 L930.01 214.88 L930.77 212.39 L931.53 210.13 L932.28 208.15 L933.04 206.46 L933.8 205.01 L934.55 203.7 L935.31 202.46 L936.06 201.23 L936.82 200.03 L937.58 198.92 L938.33 198.02 L939.09 197.53 L939.85 197.62 L940.6 198.45 L941.36 200.11 L942.12 202.6 L942.87 205.81 L943.63 209.52 L944.38 213.41 L945.14 217.13 L945.9 220.34 L946.65 222.73 L947.41 224.11 L948.17 224.42 L948.92 223.74 L949.68 222.25 L950.43 220.27 L951.19 218.14 L951.95 216.2 L952.7 214.74 L953.46 213.92 L954.22 213.8 L954.97 214.3 L955.73 215.22 L956.49 216.3 L957.24 217.25 L958 217.81 L958.75 217.8 L959.51 217.16 L960.27 215.95 L961.02 214.35 L961.78 212.61 L962.54 211.05 L963.29 209.95 L964.05 209.56 L964.8 210.02 L965.56 211.35 L966.32 213.46 L967.07 216.14 L967.83 219.11 L968.59 222.05 L969.34 224.64 L970.1 226.63 L970.86 227.82 L971.61 228.12 L972.37 227.51 L973.12 226.04 L973.88 223.83 L974.64 221.02 L975.39 217.73 L976.15 214.11 L976.91 210.28 L977.66 206.36 L978.42 202.46 L979.17 198.75 L979.93 195.42 L980.69 192.67 L981.44 190.76 L982.2 189.95" stroke="#3040f0" stroke-width="0.55" fill="none" stroke-linejoin="round" opacity=".85"/>
<text x="693.2" y="239.3" font-size="2.9" text-anchor="end" fill="#555" stroke="#555" stroke-width="0.06">0</text>
<line x1="694.8" y1="238.3" x2="696" y2="238.3" stroke="#888" stroke-width="0.3" />
<line x1="981" y1="238.3" x2="982.2" y2="238.3" stroke="#888" stroke-width="0.3" />
<text x="693.2" y="223.13" font-size="2.9" text-anchor="end" fill="#555" stroke="#555" stroke-width="0.06">10</text>
<line x1="694.8" y1="222.13" x2="696" y2="222.13" stroke="#888" stroke-width="0.3" />
<line x1="981" y1="222.13" x2="982.2" y2="222.13" stroke="#888" stroke-width="0.3" />
<text x="693.2" y="206.96" font-size="2.9" text-anchor="end" fill="#555" stroke="#555" stroke-width="0.06">20</text>
<line x1="694.8" y1="205.96" x2="696" y2="205.96" stroke="#888" stroke-width="0.3" />
<line x1="981" y1="205.96" x2="982.2" y2="205.96" stroke="#888" stroke-width="0.3" />
<text x="693.2" y="190.79" font-size="2.9" text-anchor="end" fill="#555" stroke="#555" stroke-width="0.06">30</text>
<line x1="694.8" y1="189.79" x2="696" y2="189.79" stroke="#888" stroke-width="0.3" />
<line x1="981" y1="189.79" x2="982.2" y2="189.79" stroke="#888" stroke-width="0.3" />
<text x="693.2" y="174.61" font-size="2.9" text-anchor="end" fill="#555" stroke="#555" stroke-width="0.06">40</text>
<line x1="694.8" y1="173.61" x2="696" y2="173.61" stroke="#888" stroke-width="0.3" />
<line x1="981" y1="173.61" x2="982.2" y2="173.61" stroke="#888" stroke-width="0.3" />
<text x="693.2" y="158.44" font-size="2.9" text-anchor="end" fill="#555" stroke="#555" stroke-width="0.06">50</text>
<line x1="694.8" y1="157.44" x2="696" y2="157.44" stroke="#888" stroke-width="0.3" />
<line x1="981" y1="157.44" x2="982.2" y2="157.44" stroke="#888" stroke-width="0.3" />
<text x="693.2" y="142.27" font-size="2.9" text-anchor="end" fill="#555" stroke="#555" stroke-width="0.06">60</text>
<line x1="694.8" y1="141.27" x2="696" y2="141.27" stroke="#888" stroke-width="0.3" />
<line x1="981" y1="141.27" x2="982.2" y2="141.27" stroke="#888" stroke-width="0.3" />
<text x="693.2" y="126.1" font-size="2.9" text-anchor="end" fill="#555" stroke="#555" stroke-width="0.06">70</text>
<line x1="694.8" y1="125.1" x2="696" y2="125.1" stroke="#888" stroke-width="0.3" />
<line x1="981" y1="125.1" x2="982.2" y2="125.1" stroke="#888" stroke-width="0.3" />
<text x="694.8" y="241.9" font-size="2.9" text-anchor="middle" fill="#555" stroke="#555" stroke-width="0.06">0</text>
<line x1="694.8" y1="238.3" x2="694.8" y2="237.1" stroke="#888" stroke-width="0.3" />
<line x1="694.8" y1="125.1" x2="694.8" y2="126.3" stroke="#888" stroke-width="0.3" />
<text x="742.7" y="241.9" font-size="2.9" text-anchor="middle" fill="#555" stroke="#555" stroke-width="0.06">250</text>
<line x1="742.7" y1="238.3" x2="742.7" y2="237.1" stroke="#888" stroke-width="0.3" />
<line x1="742.7" y1="125.1" x2="742.7" y2="126.3" stroke="#888" stroke-width="0.3" />
<text x="790.6" y="241.9" font-size="2.9" text-anchor="middle" fill="#555" stroke="#555" stroke-width="0.06">500</text>
<line x1="790.6" y1="238.3" x2="790.6" y2="237.1" stroke="#888" stroke-width="0.3" />
<line x1="790.6" y1="125.1" x2="790.6" y2="126.3" stroke="#888" stroke-width="0.3" />
<text x="838.5" y="241.9" font-size="2.9" text-anchor="middle" fill="#555" stroke="#555" stroke-width="0.06">750</text>
<line x1="838.5" y1="238.3" x2="838.5" y2="237.1" stroke="#888" stroke-width="0.3" />
<line x1="838.5" y1="125.1" x2="838.5" y2="126.3" stroke="#888" stroke-width="0.3" />
<text x="886.4" y="241.9" font-size="2.9" text-anchor="middle" fill="#555" stroke="#555" stroke-width="0.06">1000</text>
<line x1="886.4" y1="238.3" x2="886.4" y2="237.1" stroke="#888" stroke-width="0.3" />
<line x1="886.4" y1="125.1" x2="886.4" y2="126.3" stroke="#888" stroke-width="0.3" />
<text x="934.3" y="241.9" font-size="2.9" text-anchor="middle" fill="#555" stroke="#555" stroke-width="0.06">1250</text>
<line x1="934.3" y1="238.3" x2="934.3" y2="237.1" stroke="#888" stroke-width="0.3" />
<line x1="934.3" y1="125.1" x2="934.3" y2="126.3" stroke="#888" stroke-width="0.3" />
<text x="982.2" y="241.9" font-size="2.9" text-anchor="middle" fill="#555" stroke="#555" stroke-width="0.06">1500</text>
<line x1="982.2" y1="238.3" x2="982.2" y2="237.1" stroke="#888" stroke-width="0.3" />
<line x1="982.2" y1="125.1" x2="982.2" y2="126.3" stroke="#888" stroke-width="0.3" />
<text x="838" y="247.6" font-size="3.9" text-anchor="middle" fill="#555" stroke="#555" stroke-width="0.09">Time</text>
<text x="688.2" y="181.5" font-size="3.9" text-anchor="middle" fill="#444" stroke="#444" stroke-width="0.09" transform="rotate(-90 688.2 181.5)">Spike Density Function Mean</text>
<rect x="931.3" y="127.5" width="48.1" height="35.1" fill="#fff" stroke="#aaa" stroke-width="0.5" />
<rect x="933.3" y="129.6" width="9.5" height="2.6" fill="#eee" stroke="#999" stroke-width="0.3" />
<text x="944.2" y="132.3" font-size="2.5" textLength="33" lengthAdjust="spacingAndGlyphs" fill="#333" stroke="#333" stroke-width="0.05">Stimulus Presentation Period</text>
<line x1="933.3" y1="135.6" x2="942.8" y2="135.6" stroke="#f040e0" stroke-width="0.6" />
<text x="944.2" y="136.6" font-size="2.6" fill="#444" stroke="#444" stroke-width="0.06">Condition 1: 0</text>
<line x1="933.3" y1="139.4" x2="942.8" y2="139.4" stroke="#f03030" stroke-width="0.6" />
<text x="944.2" y="140.4" font-size="2.6" fill="#444" stroke="#444" stroke-width="0.06">Condition 2: 45</text>
<line x1="933.3" y1="143.2" x2="942.8" y2="143.2" stroke="#f0a030" stroke-width="0.6" />
<text x="944.2" y="144.2" font-size="2.6" fill="#444" stroke="#444" stroke-width="0.06">Condition 3: 90</text>
<line x1="933.3" y1="147" x2="942.8" y2="147" stroke="#e8e030" stroke-width="0.6" />
<text x="944.2" y="148" font-size="2.6" fill="#444" stroke="#444" stroke-width="0.06">Condition 4: 135</text>
<line x1="933.3" y1="150.8" x2="942.8" y2="150.8" stroke="#a0e030" stroke-width="0.6" />
<text x="944.2" y="151.8" font-size="2.6" fill="#444" stroke="#444" stroke-width="0.06">Condition 5: 180</text>
<line x1="933.3" y1="154.6" x2="942.8" y2="154.6" stroke="#30d040" stroke-width="0.6" />
<text x="944.2" y="155.6" font-size="2.6" fill="#444" stroke="#444" stroke-width="0.06">Condition 6: 225</text>
<line x1="933.3" y1="158.4" x2="942.8" y2="158.4" stroke="#30d8e0" stroke-width="0.6" />
<text x="944.2" y="159.4" font-size="2.6" fill="#444" stroke="#444" stroke-width="0.06">Condition 7: 270</text>
<line x1="933.3" y1="162.2" x2="942.8" y2="162.2" stroke="#3040f0" stroke-width="0.6" />
<text x="944.2" y="163.2" font-size="2.6" fill="#444" stroke="#444" stroke-width="0.06">Condition 8: 315</text>
<text x="1032.4" y="120.4" font-size="13" textLength="242.1" lengthAdjust="spacingAndGlyphs" fill="#1a1a1a" stroke="#1a1a1a" stroke-width="0.1">Von Mises Tuning Curve for an MT Neuron</text>
<circle cx="1066.7" cy="188.8" r="13.6" fill="none" stroke="#e6e6e6" stroke-width=".4"/>
<circle cx="1066.7" cy="188.8" r="27.2" fill="none" stroke="#e6e6e6" stroke-width=".4"/>
<circle cx="1066.7" cy="188.8" r="40.8" fill="none" stroke="#e6e6e6" stroke-width=".4"/>
<circle cx="1066.7" cy="188.8" r="54.4" fill="none" stroke="#e6e6e6" stroke-width=".4"/>
<line x1="1066.7" y1="188.8" x2="1121.1" y2="188.8" stroke="#e9e9e9" stroke-width="0.4" />
<text x="1126.2" y="189.8" font-size="2.8" text-anchor="middle" fill="#666" stroke="#666" stroke-width="0.06">0</text>
<line x1="1066.7" y1="188.8" x2="1113.81" y2="161.6" stroke="#e9e9e9" stroke-width="0.4" />
<text x="1118.23" y="160.05" font-size="2.8" text-anchor="middle" fill="#666" stroke="#666" stroke-width="0.06">30</text>
<line x1="1066.7" y1="188.8" x2="1093.9" y2="141.69" stroke="#e9e9e9" stroke-width="0.4" />
<text x="1096.45" y="138.27" font-size="2.8" text-anchor="middle" fill="#666" stroke="#666" stroke-width="0.06">60</text>
<line x1="1066.7" y1="188.8" x2="1066.7" y2="134.4" stroke="#e9e9e9" stroke-width="0.4" />
<text x="1066.7" y="130.3" font-size="2.8" text-anchor="middle" fill="#666" stroke="#666" stroke-width="0.06">90</text>
<line x1="1066.7" y1="188.8" x2="1039.5" y2="141.69" stroke="#e9e9e9" stroke-width="0.4" />
<text x="1036.95" y="138.27" font-size="2.8" text-anchor="middle" fill="#666" stroke="#666" stroke-width="0.06">120</text>
<line x1="1066.7" y1="188.8" x2="1019.59" y2="161.6" stroke="#e9e9e9" stroke-width="0.4" />
<text x="1015.17" y="160.05" font-size="2.8" text-anchor="middle" fill="#666" stroke="#666" stroke-width="0.06">150</text>
<line x1="1066.7" y1="188.8" x2="1012.3" y2="188.8" stroke="#e9e9e9" stroke-width="0.4" />
<text x="1007.2" y="189.8" font-size="2.8" text-anchor="middle" fill="#666" stroke="#666" stroke-width="0.06">180</text>
<line x1="1066.7" y1="188.8" x2="1019.59" y2="216" stroke="#e9e9e9" stroke-width="0.4" />
<text x="1015.17" y="219.55" font-size="2.8" text-anchor="middle" fill="#666" stroke="#666" stroke-width="0.06">210</text>
<line x1="1066.7" y1="188.8" x2="1039.5" y2="235.91" stroke="#e9e9e9" stroke-width="0.4" />
<text x="1036.95" y="241.33" font-size="2.8" text-anchor="middle" fill="#666" stroke="#666" stroke-width="0.06">240</text>
<line x1="1066.7" y1="188.8" x2="1066.7" y2="243.2" stroke="#e9e9e9" stroke-width="0.4" />
<text x="1066.7" y="249.3" font-size="2.8" text-anchor="middle" fill="#666" stroke="#666" stroke-width="0.06">270</text>
<line x1="1066.7" y1="188.8" x2="1093.9" y2="235.91" stroke="#e9e9e9" stroke-width="0.4" />
<text x="1096.45" y="241.33" font-size="2.8" text-anchor="middle" fill="#666" stroke="#666" stroke-width="0.06">300</text>
<line x1="1066.7" y1="188.8" x2="1113.81" y2="216" stroke="#e9e9e9" stroke-width="0.4" />
<text x="1118.23" y="219.55" font-size="2.8" text-anchor="middle" fill="#666" stroke="#666" stroke-width="0.06">330</text>
<text x="1072.01" y="174.9" font-size="2.7" fill="#666" stroke="#666" stroke-width="0.06">5</text>
<text x="1074.32" y="161.3" font-size="2.7" fill="#666" stroke="#666" stroke-width="0.06">10</text>
<text x="1076.64" y="147.7" font-size="2.7" fill="#666" stroke="#666" stroke-width="0.06">15</text>
<path d="M1066.7 188.8 L1086.66 197.07 A21.6 21.6 0 0 0 1086.66 180.53 Z" stroke="#3a5f80" stroke-width="0.45" fill="#5a9bd2" fill-opacity=".95"/>
<path d="M1066.7 188.8 L1080.56 183.06 A15 15 0 0 0 1072.44 174.94 Z" stroke="#3a5f80" stroke-width="0.45" fill="#5a9bd2" fill-opacity=".95"/>
<path d="M1066.7 188.8 L1068.42 184.64 A4.5 4.5 0 0 0 1064.98 184.64 Z" stroke="#3a5f80" stroke-width="0.45" fill="#5a9bd2" fill-opacity=".95"/>
<path d="M1066.7 188.8 L1058.55 169.12 A21.3 21.3 0 0 0 1047.02 180.65 Z" stroke="#3a5f80" stroke-width="0.45" fill="#5a9bd2" fill-opacity=".95"/>
<path d="M1066.7 188.8 L1050.07 181.91 A18 18 0 0 0 1050.07 195.69 Z" stroke="#3a5f80" stroke-width="0.45" fill="#5a9bd2" fill-opacity=".95"/>
<path d="M1066.7 188.8 L1015.42 210.04 A55.5 55.5 0 0 0 1045.46 240.08 Z" stroke="#3a5f80" stroke-width="0.45" fill="#5a9bd2" fill-opacity=".95"/>
<path d="M1066.7 188.8 L1045.65 239.61 A55 55 0 0 0 1087.75 239.61 Z" stroke="#3a5f80" stroke-width="0.45" fill="#5a9bd2" fill-opacity=".95"/>
<path d="M1066.7 188.8 L1079.71 220.21 A34 34 0 0 0 1098.11 201.81 Z" stroke="#3a5f80" stroke-width="0.45" fill="#5a9bd2" fill-opacity=".95"/>
<path d="M1086.7 188.8 L1075.89 179.61 L1066.7 178.8 L1057.51 179.61 L1039.7 188.8 L1033.47 222.03 L1066.7 241.8 L1093.57 215.67 L1086.7 188.8" stroke="#f08a8a" stroke-width="0.45" fill="none" />
<line x1="1166.3" y1="132.3" x2="1166.3" y2="244.3" stroke="#bbb" stroke-width="0.5" />
<line x1="1166.3" y1="244.3" x2="1290" y2="244.3" stroke="#bbb" stroke-width="0.5" />
<line x1="1166.3" y1="132.3" x2="1290" y2="132.3" stroke="#eee" stroke-width="0.4" />
<path d="M1166.25 205.93 L1167.49 208.13 L1168.73 210.16 L1169.96 212.03 L1171.2 213.73 L1172.44 215.29 L1173.67 216.7 L1174.91 217.98 L1176.15 219.13 L1177.38 220.15 L1178.62 221.06 L1179.86 221.86 L1181.1 222.56 L1182.33 223.15 L1183.57 223.66 L1184.81 224.07 L1186.04 224.4 L1187.28 224.64 L1188.52 224.8 L1189.75 224.88 L1190.99 224.88 L1192.23 224.8 L1193.46 224.64 L1194.7 224.4 L1195.94 224.07 L1197.18 223.66 L1198.41 223.15 L1199.65 222.56 L1200.89 221.86 L1202.12 221.06 L1203.36 220.15 L1204.6 219.13 L1205.83 217.98 L1207.07 216.7 L1208.31 215.29 L1209.54 213.73 L1210.78 212.03 L1212.02 210.16 L1213.26 208.13 L1214.49 205.93 L1215.73 203.56 L1216.97 201 L1218.2 198.28 L1219.44 195.37 L1220.68 192.29 L1221.91 189.05 L1223.15 185.65 L1224.39 182.11 L1225.62 178.45 L1226.86 174.69 L1228.1 170.86 L1229.34 167 L1230.57 163.14 L1231.81 159.32 L1233.05 155.58 L1234.28 151.97 L1235.52 148.54 L1236.76 145.34 L1237.99 142.41 L1239.23 139.81 L1240.47 137.56 L1241.7 135.72 L1242.94 134.31 L1244.18 133.35 L1245.42 132.87 L1246.65 132.87 L1247.89 133.35 L1249.13 134.31 L1250.36 135.72 L1251.6 137.56 L1252.84 139.81 L1254.07 142.41 L1255.31 145.34 L1256.55 148.54 L1257.78 151.97 L1259.02 155.58 L1260.26 159.32 L1261.5 163.14 L1262.73 167 L1263.97 170.86 L1265.21 174.69 L1266.44 178.45 L1267.68 182.11 L1268.92 185.65 L1270.15 189.05 L1271.39 192.29 L1272.63 195.37 L1273.87 198.28 L1275.1 201 L1276.34 203.56" stroke="#f7a8a8" stroke-width="0.6" fill="none" />
<circle cx="1166.75" cy="203.99" r="1.5" fill="#b4c4f4" fill-opacity=".85"/>
<circle cx="1180.44" cy="215.19" r="1.5" fill="#b4c4f4" fill-opacity=".85"/>
<circle cx="1194.13" cy="236.09" r="1.5" fill="#b4c4f4" fill-opacity=".85"/>
<circle cx="1207.81" cy="198.26" r="1.5" fill="#b4c4f4" fill-opacity=".85"/>
<circle cx="1221.5" cy="206.23" r="1.5" fill="#b4c4f4" fill-opacity=".85"/>
<circle cx="1235.19" cy="135.55" r="1.5" fill="#b4c4f4" fill-opacity=".85"/>
<circle cx="1248.88" cy="137.29" r="1.5" fill="#b4c4f4" fill-opacity=".85"/>
<circle cx="1263.07" cy="175.86" r="1.5" fill="#b4c4f4" fill-opacity=".85"/>
<text x="1164.3" y="245.3" font-size="2.7" text-anchor="end" fill="#666" stroke="#666" stroke-width="0.06">0</text>
<line x1="1166.3" y1="244.3" x2="1167.3" y2="244.3" stroke="#999" stroke-width="0.3" />
<text x="1164.3" y="232.86" font-size="2.7" text-anchor="end" fill="#666" stroke="#666" stroke-width="0.06">2</text>
<line x1="1166.3" y1="231.86" x2="1167.3" y2="231.86" stroke="#999" stroke-width="0.3" />
<text x="1164.3" y="220.41" font-size="2.7" text-anchor="end" fill="#666" stroke="#666" stroke-width="0.06">4</text>
<line x1="1166.3" y1="219.41" x2="1167.3" y2="219.41" stroke="#999" stroke-width="0.3" />
<text x="1164.3" y="207.97" font-size="2.7" text-anchor="end" fill="#666" stroke="#666" stroke-width="0.06">6</text>
<line x1="1166.3" y1="206.97" x2="1167.3" y2="206.97" stroke="#999" stroke-width="0.3" />
<text x="1164.3" y="195.52" font-size="2.7" text-anchor="end" fill="#666" stroke="#666" stroke-width="0.06">8</text>
<line x1="1166.3" y1="194.52" x2="1167.3" y2="194.52" stroke="#999" stroke-width="0.3" />
<text x="1164.3" y="183.08" font-size="2.7" text-anchor="end" fill="#666" stroke="#666" stroke-width="0.06">10</text>
<line x1="1166.3" y1="182.08" x2="1167.3" y2="182.08" stroke="#999" stroke-width="0.3" />
<text x="1164.3" y="170.63" font-size="2.7" text-anchor="end" fill="#666" stroke="#666" stroke-width="0.06">12</text>
<line x1="1166.3" y1="169.63" x2="1167.3" y2="169.63" stroke="#999" stroke-width="0.3" />
<text x="1164.3" y="158.19" font-size="2.7" text-anchor="end" fill="#666" stroke="#666" stroke-width="0.06">14</text>
<line x1="1166.3" y1="157.19" x2="1167.3" y2="157.19" stroke="#999" stroke-width="0.3" />
<text x="1164.3" y="145.74" font-size="2.7" text-anchor="end" fill="#666" stroke="#666" stroke-width="0.06">16</text>
<line x1="1166.3" y1="144.74" x2="1167.3" y2="144.74" stroke="#999" stroke-width="0.3" />
<text x="1164.3" y="133.3" font-size="2.7" text-anchor="end" fill="#666" stroke="#666" stroke-width="0.06">18</text>
<line x1="1166.3" y1="132.3" x2="1167.3" y2="132.3" stroke="#999" stroke-width="0.3" />
<text x="1166.3" y="248.6" font-size="2.7" text-anchor="middle" fill="#666" stroke="#666" stroke-width="0.06">0</text>
<line x1="1166.3" y1="244.3" x2="1166.3" y2="243.3" stroke="#999" stroke-width="0.3" />
<text x="1181.76" y="248.6" font-size="2.7" text-anchor="middle" fill="#666" stroke="#666" stroke-width="0.06">50</text>
<line x1="1181.76" y1="244.3" x2="1181.76" y2="243.3" stroke="#999" stroke-width="0.3" />
<text x="1197.22" y="248.6" font-size="2.7" text-anchor="middle" fill="#666" stroke="#666" stroke-width="0.06">100</text>
<line x1="1197.22" y1="244.3" x2="1197.22" y2="243.3" stroke="#999" stroke-width="0.3" />
<text x="1212.69" y="248.6" font-size="2.7" text-anchor="middle" fill="#666" stroke="#666" stroke-width="0.06">150</text>
<line x1="1212.69" y1="244.3" x2="1212.69" y2="243.3" stroke="#999" stroke-width="0.3" />
<text x="1228.15" y="248.6" font-size="2.7" text-anchor="middle" fill="#666" stroke="#666" stroke-width="0.06">200</text>
<line x1="1228.15" y1="244.3" x2="1228.15" y2="243.3" stroke="#999" stroke-width="0.3" />
<text x="1243.61" y="248.6" font-size="2.7" text-anchor="middle" fill="#666" stroke="#666" stroke-width="0.06">250</text>
<line x1="1243.61" y1="244.3" x2="1243.61" y2="243.3" stroke="#999" stroke-width="0.3" />
<text x="1259.08" y="248.6" font-size="2.7" text-anchor="middle" fill="#666" stroke="#666" stroke-width="0.06">300</text>
<line x1="1259.08" y1="244.3" x2="1259.08" y2="243.3" stroke="#999" stroke-width="0.3" />
<text x="1274.54" y="248.6" font-size="2.7" text-anchor="middle" fill="#666" stroke="#666" stroke-width="0.06">350</text>
<line x1="1274.54" y1="244.3" x2="1274.54" y2="243.3" stroke="#999" stroke-width="0.3" />
<text x="1290" y="248.6" font-size="2.7" text-anchor="middle" fill="#666" stroke="#666" stroke-width="0.06">400</text>
<line x1="1290" y1="244.3" x2="1290" y2="243.3" stroke="#999" stroke-width="0.3" />
<text x="1237.7" y="255.2" font-size="3.1" text-anchor="middle" fill="#555" stroke="#555" stroke-width="0.07">Degrees</text>
<text x="1157.6" y="188" font-size="3" text-anchor="middle" fill="#555" stroke="#555" stroke-width="0.07" transform="rotate(-90 1157.6 188)">Increase in firing rate (spikes/second)</text>
<rect x="1262.8" y="215.4" width="62.3" height="17" fill="#fff" stroke="#111" stroke-width="0.7" />
<circle cx="1270" cy="219.3" r="2" fill="#3a64c8"/>
<text x="1275" y="220.4" font-size="3.3" fill="#444" stroke="#444" stroke-width="0.07">Data point</text>
<line x1="1266.3" y1="227" x2="1273.5" y2="227" stroke="#f4a0a0" stroke-width="0.6" />
<text x="1275" y="228.2" font-size="3.3" fill="#444" stroke="#444" stroke-width="0.07">Von Mises Distribution</text>
<text x="366.8" y="292.5" font-size="13.2" textLength="125.4" lengthAdjust="spacingAndGlyphs" font-weight="bold" fill="#000" stroke="#000" stroke-width="0.29">Population Analysis:</text>
<text x="375.4" y="315.1" font-size="13.2" textLength="151" lengthAdjust="spacingAndGlyphs" font-weight="bold" fill="#000" stroke="#000" stroke-width="0.29">Concentration Parameter:</text>
<text x="595.1" y="316.7" font-size="7.3" textLength="138.2" lengthAdjust="spacingAndGlyphs" font-weight="bold" fill="#111" stroke="#111" stroke-width="0.16">Concentration Parameter Distributions</text>
<text x="376.8" y="474.9" font-size="13.2" textLength="117.4" lengthAdjust="spacingAndGlyphs" font-weight="bold" fill="#000" stroke="#000" stroke-width="0.29">Selectivity Strength:</text>
<text x="595.1" y="476.1" font-size="7.3" textLength="117.5" lengthAdjust="spacingAndGlyphs" font-weight="bold" fill="#111" stroke="#111" stroke-width="0.16">Selectivity Strength Distributions</text>
<rect x="416.4" y="335.6" width="94.7" height="86" fill="#fff" stroke="#7c7c7c" stroke-width="0.75" />
<text x="463.75" y="332.2" font-size="7" font-weight="bold" text-anchor="middle" fill="#111" stroke="#111" stroke-width="0.15">MT</text>
<text x="414.2" y="424" font-size="6.7" text-anchor="end" fill="#5c5c5c" stroke="#5c5c5c" stroke-width="0.15">0</text>
<line x1="416.4" y1="421.6" x2="417.7" y2="421.6" stroke="#7c7c7c" stroke-width="0.5" />
<line x1="509.8" y1="421.6" x2="511.1" y2="421.6" stroke="#7c7c7c" stroke-width="0.5" />
<text x="414.2" y="406.8" font-size="6.7" text-anchor="end" fill="#5c5c5c" stroke="#5c5c5c" stroke-width="0.15">0.1</text>
<line x1="416.4" y1="404.4" x2="417.7" y2="404.4" stroke="#7c7c7c" stroke-width="0.5" />
<line x1="509.8" y1="404.4" x2="511.1" y2="404.4" stroke="#7c7c7c" stroke-width="0.5" />
<text x="414.2" y="389.6" font-size="6.7" text-anchor="end" fill="#5c5c5c" stroke="#5c5c5c" stroke-width="0.15">0.2</text>
<line x1="416.4" y1="387.2" x2="417.7" y2="387.2" stroke="#7c7c7c" stroke-width="0.5" />
<line x1="509.8" y1="387.2" x2="511.1" y2="387.2" stroke="#7c7c7c" stroke-width="0.5" />
<text x="414.2" y="372.4" font-size="6.7" text-anchor="end" fill="#5c5c5c" stroke="#5c5c5c" stroke-width="0.15">0.3</text>
<line x1="416.4" y1="370" x2="417.7" y2="370" stroke="#7c7c7c" stroke-width="0.5" />
<line x1="509.8" y1="370" x2="511.1" y2="370" stroke="#7c7c7c" stroke-width="0.5" />
<text x="414.2" y="355.2" font-size="6.7" text-anchor="end" fill="#5c5c5c" stroke="#5c5c5c" stroke-width="0.15">0.4</text>
<line x1="416.4" y1="352.8" x2="417.7" y2="352.8" stroke="#7c7c7c" stroke-width="0.5" />
<line x1="509.8" y1="352.8" x2="511.1" y2="352.8" stroke="#7c7c7c" stroke-width="0.5" />
<text x="414.2" y="338" font-size="6.7" text-anchor="end" fill="#5c5c5c" stroke="#5c5c5c" stroke-width="0.15">0.5</text>
<line x1="416.4" y1="335.6" x2="417.7" y2="335.6" stroke="#7c7c7c" stroke-width="0.5" />
<line x1="509.8" y1="335.6" x2="511.1" y2="335.6" stroke="#7c7c7c" stroke-width="0.5" />
<text x="422.9" y="431" font-size="6.7" text-anchor="middle" fill="#5c5c5c" stroke="#5c5c5c" stroke-width="0.15">0</text>
<line x1="422.9" y1="421.6" x2="422.9" y2="420.3" stroke="#7c7c7c" stroke-width="0.5" />
<line x1="422.9" y1="335.6" x2="422.9" y2="336.9" stroke="#7c7c7c" stroke-width="0.5" />
<text x="450.2" y="431" font-size="6.7" text-anchor="middle" fill="#5c5c5c" stroke="#5c5c5c" stroke-width="0.15">0.5</text>
<line x1="450.2" y1="421.6" x2="450.2" y2="420.3" stroke="#7c7c7c" stroke-width="0.5" />
<line x1="450.2" y1="335.6" x2="450.2" y2="336.9" stroke="#7c7c7c" stroke-width="0.5" />
<text x="477.4" y="431" font-size="6.7" text-anchor="middle" fill="#5c5c5c" stroke="#5c5c5c" stroke-width="0.15">1</text>
<line x1="477.4" y1="421.6" x2="477.4" y2="420.3" stroke="#7c7c7c" stroke-width="0.5" />
<line x1="477.4" y1="335.6" x2="477.4" y2="336.9" stroke="#7c7c7c" stroke-width="0.5" />
<text x="504.9" y="431" font-size="6.7" text-anchor="middle" fill="#5c5c5c" stroke="#5c5c5c" stroke-width="0.15">1.5</text>
<line x1="504.9" y1="421.6" x2="504.9" y2="420.3" stroke="#7c7c7c" stroke-width="0.5" />
<line x1="504.9" y1="335.6" x2="504.9" y2="336.9" stroke="#7c7c7c" stroke-width="0.5" />
<text x="463.75" y="441.4" font-size="7.9" text-anchor="middle" fill="#5c5c5c" stroke="#5c5c5c" stroke-width="0.17">Concentration</text>
<text x="399.2" y="378.6" font-size="7.9" text-anchor="middle" fill="#5c5c5c" stroke="#5c5c5c" stroke-width="0.17" transform="rotate(-90 399.2 378.6)">Percentage of neurons</text>
<rect x="420.6" y="411.28" width="5" height="10.32" fill="#0b70bd" stroke="#0a4f86" stroke-width="0.35" />
<rect x="426.03" y="401.82" width="5" height="19.78" fill="#0b70bd" stroke="#0a4f86" stroke-width="0.35" />
<rect x="431.46" y="397.52" width="5" height="24.08" fill="#0b70bd" stroke="#0a4f86" stroke-width="0.35" />
<rect x="436.89" y="392.36" width="5" height="29.24" fill="#0b70bd" stroke="#0a4f86" stroke-width="0.35" />
<rect x="442.32" y="394.94" width="5" height="26.66" fill="#0b70bd" stroke="#0a4f86" stroke-width="0.35" />
<rect x="447.75" y="400.96" width="5" height="20.64" fill="#0b70bd" stroke="#0a4f86" stroke-width="0.35" />
<rect x="453.18" y="409.56" width="5" height="12.04" fill="#0b70bd" stroke="#0a4f86" stroke-width="0.35" />
<rect x="458.61" y="412.14" width="5" height="9.46" fill="#0b70bd" stroke="#0a4f86" stroke-width="0.35" />
<rect x="464.04" y="416.78" width="5" height="4.82" fill="#0b70bd" stroke="#0a4f86" stroke-width="0.35" />
<rect x="469.47" y="418.16" width="5" height="3.44" fill="#0b70bd" stroke="#0a4f86" stroke-width="0.35" />
<rect x="474.9" y="420.22" width="5" height="1.38" fill="#0b70bd" stroke="#0a4f86" stroke-width="0.35" />
<rect x="480.33" y="418.16" width="5" height="3.44" fill="#0b70bd" stroke="#0a4f86" stroke-width="0.35" />
<rect x="485.76" y="419.36" width="5" height="2.24" fill="#0b70bd" stroke="#0a4f86" stroke-width="0.35" />
<rect x="491.19" y="420.74" width="5" height="0.86" fill="#0b70bd" stroke="#0a4f86" stroke-width="0.35" />
<rect x="496.62" y="421.08" width="5" height="0.52" fill="#0b70bd" stroke="#0a4f86" stroke-width="0.35" />
<rect x="502.05" y="420.22" width="5" height="1.38" fill="#0b70bd" stroke="#0a4f86" stroke-width="0.35" />
<rect x="540.8" y="335.6" width="94.5" height="86" fill="#fff" stroke="#7c7c7c" stroke-width="0.75" />
<text x="588.05" y="332.2" font-size="7" font-weight="bold" text-anchor="middle" fill="#111" stroke="#111" stroke-width="0.15">MST</text>
<text x="538.6" y="424" font-size="6.7" text-anchor="end" fill="#5c5c5c" stroke="#5c5c5c" stroke-width="0.15">0</text>
<line x1="540.8" y1="421.6" x2="542.1" y2="421.6" stroke="#7c7c7c" stroke-width="0.5" />
<line x1="634" y1="421.6" x2="635.3" y2="421.6" stroke="#7c7c7c" stroke-width="0.5" />
<text x="538.6" y="406.8" font-size="6.7" text-anchor="end" fill="#5c5c5c" stroke="#5c5c5c" stroke-width="0.15">0.1</text>
<line x1="540.8" y1="404.4" x2="542.1" y2="404.4" stroke="#7c7c7c" stroke-width="0.5" />
<line x1="634" y1="404.4" x2="635.3" y2="404.4" stroke="#7c7c7c" stroke-width="0.5" />
<text x="538.6" y="389.6" font-size="6.7" text-anchor="end" fill="#5c5c5c" stroke="#5c5c5c" stroke-width="0.15">0.2</text>
<line x1="540.8" y1="387.2" x2="542.1" y2="387.2" stroke="#7c7c7c" stroke-width="0.5" />
<line x1="634" y1="387.2" x2="635.3" y2="387.2" stroke="#7c7c7c" stroke-width="0.5" />
<text x="538.6" y="372.4" font-size="6.7" text-anchor="end" fill="#5c5c5c" stroke="#5c5c5c" stroke-width="0.15">0.3</text>
<line x1="540.8" y1="370" x2="542.1" y2="370" stroke="#7c7c7c" stroke-width="0.5" />
<line x1="634" y1="370" x2="635.3" y2="370" stroke="#7c7c7c" stroke-width="0.5" />
<text x="538.6" y="355.2" font-size="6.7" text-anchor="end" fill="#5c5c5c" stroke="#5c5c5c" stroke-width="0.15">0.4</text>
<line x1="540.8" y1="352.8" x2="542.1" y2="352.8" stroke="#7c7c7c" stroke-width="0.5" />
<line x1="634" y1="352.8" x2="635.3" y2="352.8" stroke="#7c7c7c" stroke-width="0.5" />
<text x="538.6" y="338" font-size="6.7" text-anchor="end" fill="#5c5c5c" stroke="#5c5c5c" stroke-width="0.15">0.5</text>
<line x1="540.8" y1="335.6" x2="542.1" y2="335.6" stroke="#7c7c7c" stroke-width="0.5" />
<line x1="634" y1="335.6" x2="635.3" y2="335.6" stroke="#7c7c7c" stroke-width="0.5" />
<text x="547.3" y="431" font-size="6.7" text-anchor="middle" fill="#5c5c5c" stroke="#5c5c5c" stroke-width="0.15">0</text>
<line x1="547.3" y1="421.6" x2="547.3" y2="420.3" stroke="#7c7c7c" stroke-width="0.5" />
<line x1="547.3" y1="335.6" x2="547.3" y2="336.9" stroke="#7c7c7c" stroke-width="0.5" />
<text x="574.6" y="431" font-size="6.7" text-anchor="middle" fill="#5c5c5c" stroke="#5c5c5c" stroke-width="0.15">0.5</text>
<line x1="574.6" y1="421.6" x2="574.6" y2="420.3" stroke="#7c7c7c" stroke-width="0.5" />
<line x1="574.6" y1="335.6" x2="574.6" y2="336.9" stroke="#7c7c7c" stroke-width="0.5" />
<text x="601.8" y="431" font-size="6.7" text-anchor="middle" fill="#5c5c5c" stroke="#5c5c5c" stroke-width="0.15">1</text>
<line x1="601.8" y1="421.6" x2="601.8" y2="420.3" stroke="#7c7c7c" stroke-width="0.5" />
<line x1="601.8" y1="335.6" x2="601.8" y2="336.9" stroke="#7c7c7c" stroke-width="0.5" />
<text x="629.3" y="431" font-size="6.7" text-anchor="middle" fill="#5c5c5c" stroke="#5c5c5c" stroke-width="0.15">1.5</text>
<line x1="629.3" y1="421.6" x2="629.3" y2="420.3" stroke="#7c7c7c" stroke-width="0.5" />
<line x1="629.3" y1="335.6" x2="629.3" y2="336.9" stroke="#7c7c7c" stroke-width="0.5" />
<text x="588.05" y="441.4" font-size="7.9" text-anchor="middle" fill="#5c5c5c" stroke="#5c5c5c" stroke-width="0.17">Concentration</text>
<text x="523.6" y="378.6" font-size="7.9" text-anchor="middle" fill="#5c5c5c" stroke="#5c5c5c" stroke-width="0.17" transform="rotate(-90 523.6 378.6)">Percentage of neurons</text>
<rect x="545" y="413.34" width="5" height="8.26" fill="#0b70bd" stroke="#0a4f86" stroke-width="0.35" />
<rect x="550.43" y="399.24" width="5" height="22.36" fill="#0b70bd" stroke="#0a4f86" stroke-width="0.35" />
<rect x="555.86" y="393.74" width="5" height="27.86" fill="#0b70bd" stroke="#0a4f86" stroke-width="0.35" />
<rect x="561.29" y="394.94" width="5" height="26.66" fill="#0b70bd" stroke="#0a4f86" stroke-width="0.35" />
<rect x="566.72" y="394.94" width="5" height="26.66" fill="#0b70bd" stroke="#0a4f86" stroke-width="0.35" />
<rect x="572.15" y="400.62" width="5" height="20.98" fill="#0b70bd" stroke="#0a4f86" stroke-width="0.35" />
<rect x="577.58" y="408.7" width="5" height="12.9" fill="#0b70bd" stroke="#0a4f86" stroke-width="0.35" />
<rect x="583.01" y="412.14" width="5" height="9.46" fill="#0b70bd" stroke="#0a4f86" stroke-width="0.35" />
<rect x="588.44" y="414.38" width="5" height="7.22" fill="#0b70bd" stroke="#0a4f86" stroke-width="0.35" />
<rect x="593.87" y="419.36" width="5" height="2.24" fill="#0b70bd" stroke="#0a4f86" stroke-width="0.35" />
<rect x="599.3" y="418.68" width="5" height="2.92" fill="#0b70bd" stroke="#0a4f86" stroke-width="0.35" />
<rect x="604.73" y="420.74" width="5" height="0.86" fill="#0b70bd" stroke="#0a4f86" stroke-width="0.35" />
<rect x="610.16" y="421.08" width="5" height="0.52" fill="#0b70bd" stroke="#0a4f86" stroke-width="0.35" />
<rect x="615.59" y="421.08" width="5" height="0.52" fill="#0b70bd" stroke="#0a4f86" stroke-width="0.35" />
<rect x="621.02" y="421.26" width="5" height="0.34" fill="#0b70bd" stroke="#0a4f86" stroke-width="0.35" />
<rect x="626.45" y="421.26" width="5" height="0.34" fill="#0b70bd" stroke="#0a4f86" stroke-width="0.35" />
<rect x="665.5" y="335.6" width="94.5" height="86" fill="#fff" stroke="#7c7c7c" stroke-width="0.75" />
<text x="712.75" y="332.2" font-size="7" font-weight="bold" text-anchor="middle" fill="#111" stroke="#111" stroke-width="0.15">LIP</text>
<text x="663.3" y="424" font-size="6.7" text-anchor="end" fill="#5c5c5c" stroke="#5c5c5c" stroke-width="0.15">0</text>
<line x1="665.5" y1="421.6" x2="666.8" y2="421.6" stroke="#7c7c7c" stroke-width="0.5" />
<line x1="758.7" y1="421.6" x2="760" y2="421.6" stroke="#7c7c7c" stroke-width="0.5" />
<text x="663.3" y="406.8" font-size="6.7" text-anchor="end" fill="#5c5c5c" stroke="#5c5c5c" stroke-width="0.15">0.1</text>
<line x1="665.5" y1="404.4" x2="666.8" y2="404.4" stroke="#7c7c7c" stroke-width="0.5" />
<line x1="758.7" y1="404.4" x2="760" y2="404.4" stroke="#7c7c7c" stroke-width="0.5" />
<text x="663.3" y="389.6" font-size="6.7" text-anchor="end" fill="#5c5c5c" stroke="#5c5c5c" stroke-width="0.15">0.2</text>
<line x1="665.5" y1="387.2" x2="666.8" y2="387.2" stroke="#7c7c7c" stroke-width="0.5" />
<line x1="758.7" y1="387.2" x2="760" y2="387.2" stroke="#7c7c7c" stroke-width="0.5" />
<text x="663.3" y="372.4" font-size="6.7" text-anchor="end" fill="#5c5c5c" stroke="#5c5c5c" stroke-width="0.15">0.3</text>
<line x1="665.5" y1="370" x2="666.8" y2="370" stroke="#7c7c7c" stroke-width="0.5" />
<line x1="758.7" y1="370" x2="760" y2="370" stroke="#7c7c7c" stroke-width="0.5" />
<text x="663.3" y="355.2" font-size="6.7" text-anchor="end" fill="#5c5c5c" stroke="#5c5c5c" stroke-width="0.15">0.4</text>
<line x1="665.5" y1="352.8" x2="666.8" y2="352.8" stroke="#7c7c7c" stroke-width="0.5" />
<line x1="758.7" y1="352.8" x2="760" y2="352.8" stroke="#7c7c7c" stroke-width="0.5" />
<text x="663.3" y="338" font-size="6.7" text-anchor="end" fill="#5c5c5c" stroke="#5c5c5c" stroke-width="0.15">0.5</text>
<line x1="665.5" y1="335.6" x2="666.8" y2="335.6" stroke="#7c7c7c" stroke-width="0.5" />
<line x1="758.7" y1="335.6" x2="760" y2="335.6" stroke="#7c7c7c" stroke-width="0.5" />
<text x="672" y="431" font-size="6.7" text-anchor="middle" fill="#5c5c5c" stroke="#5c5c5c" stroke-width="0.15">0</text>
<line x1="672" y1="421.6" x2="672" y2="420.3" stroke="#7c7c7c" stroke-width="0.5" />
<line x1="672" y1="335.6" x2="672" y2="336.9" stroke="#7c7c7c" stroke-width="0.5" />
<text x="699.3" y="431" font-size="6.7" text-anchor="middle" fill="#5c5c5c" stroke="#5c5c5c" stroke-width="0.15">0.5</text>
<line x1="699.3" y1="421.6" x2="699.3" y2="420.3" stroke="#7c7c7c" stroke-width="0.5" />
<line x1="699.3" y1="335.6" x2="699.3" y2="336.9" stroke="#7c7c7c" stroke-width="0.5" />
<text x="726.5" y="431" font-size="6.7" text-anchor="middle" fill="#5c5c5c" stroke="#5c5c5c" stroke-width="0.15">1</text>
<line x1="726.5" y1="421.6" x2="726.5" y2="420.3" stroke="#7c7c7c" stroke-width="0.5" />
<line x1="726.5" y1="335.6" x2="726.5" y2="336.9" stroke="#7c7c7c" stroke-width="0.5" />
<text x="754" y="431" font-size="6.7" text-anchor="middle" fill="#5c5c5c" stroke="#5c5c5c" stroke-width="0.15">1.5</text>
<line x1="754" y1="421.6" x2="754" y2="420.3" stroke="#7c7c7c" stroke-width="0.5" />
<line x1="754" y1="335.6" x2="754" y2="336.9" stroke="#7c7c7c" stroke-width="0.5" />
<text x="712.75" y="441.4" font-size="7.9" text-anchor="middle" fill="#5c5c5c" stroke="#5c5c5c" stroke-width="0.17">Concentration</text>
<text x="648.3" y="378.6" font-size="7.9" text-anchor="middle" fill="#5c5c5c" stroke="#5c5c5c" stroke-width="0.17" transform="rotate(-90 648.3 378.6)">Percentage of neurons</text>
<rect x="669.7" y="413.86" width="5" height="7.74" fill="#0b70bd" stroke="#0a4f86" stroke-width="0.35" />
<rect x="675.13" y="396.66" width="5" height="24.94" fill="#0b70bd" stroke="#0a4f86" stroke-width="0.35" />
<rect x="680.56" y="385.48" width="5" height="36.12" fill="#0b70bd" stroke="#0a4f86" stroke-width="0.35" />
<rect x="685.99" y="387.2" width="5" height="34.4" fill="#0b70bd" stroke="#0a4f86" stroke-width="0.35" />
<rect x="691.42" y="395.46" width="5" height="26.14" fill="#0b70bd" stroke="#0a4f86" stroke-width="0.35" />
<rect x="696.85" y="400.96" width="5" height="20.64" fill="#0b70bd" stroke="#0a4f86" stroke-width="0.35" />
<rect x="702.28" y="411.28" width="5" height="10.32" fill="#0b70bd" stroke="#0a4f86" stroke-width="0.35" />
<rect x="707.71" y="416.44" width="5" height="5.16" fill="#0b70bd" stroke="#0a4f86" stroke-width="0.35" />
<rect x="713.14" y="419.36" width="5" height="2.24" fill="#0b70bd" stroke="#0a4f86" stroke-width="0.35" />
<rect x="718.57" y="420.22" width="5" height="1.38" fill="#0b70bd" stroke="#0a4f86" stroke-width="0.35" />
<rect x="724" y="421.08" width="5" height="0.52" fill="#0b70bd" stroke="#0a4f86" stroke-width="0.35" />
<rect x="729.43" y="421.26" width="5" height="0.34" fill="#0b70bd" stroke="#0a4f86" stroke-width="0.35" />
<rect x="751.15" y="421.26" width="5" height="0.34" fill="#0b70bd" stroke="#0a4f86" stroke-width="0.35" />
<rect x="789.5" y="335.6" width="95.3" height="86" fill="#fff" stroke="#7c7c7c" stroke-width="0.75" />
<text x="837.15" y="332.2" font-size="7" font-weight="bold" text-anchor="middle" fill="#111" stroke="#111" stroke-width="0.15">PFC</text>
<text x="787.3" y="424" font-size="6.7" text-anchor="end" fill="#5c5c5c" stroke="#5c5c5c" stroke-width="0.15">0</text>
<line x1="789.5" y1="421.6" x2="790.8" y2="421.6" stroke="#7c7c7c" stroke-width="0.5" />
<line x1="883.5" y1="421.6" x2="884.8" y2="421.6" stroke="#7c7c7c" stroke-width="0.5" />
<text x="787.3" y="406.8" font-size="6.7" text-anchor="end" fill="#5c5c5c" stroke="#5c5c5c" stroke-width="0.15">0.1</text>
<line x1="789.5" y1="404.4" x2="790.8" y2="404.4" stroke="#7c7c7c" stroke-width="0.5" />
<line x1="883.5" y1="404.4" x2="884.8" y2="404.4" stroke="#7c7c7c" stroke-width="0.5" />
<text x="787.3" y="389.6" font-size="6.7" text-anchor="end" fill="#5c5c5c" stroke="#5c5c5c" stroke-width="0.15">0.2</text>
<line x1="789.5" y1="387.2" x2="790.8" y2="387.2" stroke="#7c7c7c" stroke-width="0.5" />
<line x1="883.5" y1="387.2" x2="884.8" y2="387.2" stroke="#7c7c7c" stroke-width="0.5" />
<text x="787.3" y="372.4" font-size="6.7" text-anchor="end" fill="#5c5c5c" stroke="#5c5c5c" stroke-width="0.15">0.3</text>
<line x1="789.5" y1="370" x2="790.8" y2="370" stroke="#7c7c7c" stroke-width="0.5" />
<line x1="883.5" y1="370" x2="884.8" y2="370" stroke="#7c7c7c" stroke-width="0.5" />
<text x="787.3" y="355.2" font-size="6.7" text-anchor="end" fill="#5c5c5c" stroke="#5c5c5c" stroke-width="0.15">0.4</text>
<line x1="789.5" y1="352.8" x2="790.8" y2="352.8" stroke="#7c7c7c" stroke-width="0.5" />
<line x1="883.5" y1="352.8" x2="884.8" y2="352.8" stroke="#7c7c7c" stroke-width="0.5" />
<text x="787.3" y="338" font-size="6.7" text-anchor="end" fill="#5c5c5c" stroke="#5c5c5c" stroke-width="0.15">0.5</text>
<line x1="789.5" y1="335.6" x2="790.8" y2="335.6" stroke="#7c7c7c" stroke-width="0.5" />
<line x1="883.5" y1="335.6" x2="884.8" y2="335.6" stroke="#7c7c7c" stroke-width="0.5" />
<text x="796" y="431" font-size="6.7" text-anchor="middle" fill="#5c5c5c" stroke="#5c5c5c" stroke-width="0.15">0</text>
<line x1="796" y1="421.6" x2="796" y2="420.3" stroke="#7c7c7c" stroke-width="0.5" />
<line x1="796" y1="335.6" x2="796" y2="336.9" stroke="#7c7c7c" stroke-width="0.5" />
<text x="823.3" y="431" font-size="6.7" text-anchor="middle" fill="#5c5c5c" stroke="#5c5c5c" stroke-width="0.15">0.5</text>
<line x1="823.3" y1="421.6" x2="823.3" y2="420.3" stroke="#7c7c7c" stroke-width="0.5" />
<line x1="823.3" y1="335.6" x2="823.3" y2="336.9" stroke="#7c7c7c" stroke-width="0.5" />
<text x="850.5" y="431" font-size="6.7" text-anchor="middle" fill="#5c5c5c" stroke="#5c5c5c" stroke-width="0.15">1</text>
<line x1="850.5" y1="421.6" x2="850.5" y2="420.3" stroke="#7c7c7c" stroke-width="0.5" />
<line x1="850.5" y1="335.6" x2="850.5" y2="336.9" stroke="#7c7c7c" stroke-width="0.5" />
<text x="878" y="431" font-size="6.7" text-anchor="middle" fill="#5c5c5c" stroke="#5c5c5c" stroke-width="0.15">1.5</text>
<line x1="878" y1="421.6" x2="878" y2="420.3" stroke="#7c7c7c" stroke-width="0.5" />
<line x1="878" y1="335.6" x2="878" y2="336.9" stroke="#7c7c7c" stroke-width="0.5" />
<text x="837.15" y="441.4" font-size="7.9" text-anchor="middle" fill="#5c5c5c" stroke="#5c5c5c" stroke-width="0.17">Concentration</text>
<text x="772.3" y="378.6" font-size="7.9" text-anchor="middle" fill="#5c5c5c" stroke="#5c5c5c" stroke-width="0.17" transform="rotate(-90 772.3 378.6)">Percentage of neurons</text>
<rect x="793.7" y="411.8" width="5" height="9.8" fill="#0b70bd" stroke="#0a4f86" stroke-width="0.35" />
<rect x="799.13" y="386.34" width="5" height="35.26" fill="#0b70bd" stroke="#0a4f86" stroke-width="0.35" />
<rect x="804.56" y="391.5" width="5" height="30.1" fill="#0b70bd" stroke="#0a4f86" stroke-width="0.35" />
<rect x="809.99" y="389.26" width="5" height="32.34" fill="#0b70bd" stroke="#0a4f86" stroke-width="0.35" />
<rect x="815.42" y="396.32" width="5" height="25.28" fill="#0b70bd" stroke="#0a4f86" stroke-width="0.35" />
<rect x="820.85" y="406.12" width="5" height="15.48" fill="#0b70bd" stroke="#0a4f86" stroke-width="0.35" />
<rect x="826.28" y="411.28" width="5" height="10.32" fill="#0b70bd" stroke="#0a4f86" stroke-width="0.35" />
<rect x="831.71" y="415.92" width="5" height="5.68" fill="#0b70bd" stroke="#0a4f86" stroke-width="0.35" />
<rect x="837.14" y="419.02" width="5" height="2.58" fill="#0b70bd" stroke="#0a4f86" stroke-width="0.35" />
<rect x="842.57" y="420.91" width="5" height="0.69" fill="#0b70bd" stroke="#0a4f86" stroke-width="0.35" />
<rect x="848" y="421.26" width="5" height="0.34" fill="#0b70bd" stroke="#0a4f86" stroke-width="0.35" />
<rect x="853.43" y="421.26" width="5" height="0.34" fill="#0b70bd" stroke="#0a4f86" stroke-width="0.35" />
<rect x="415.3" y="498.5" width="93.9" height="86" fill="#fff" stroke="#7c7c7c" stroke-width="0.75" />
<text x="462.25" y="495.1" font-size="7" font-weight="bold" text-anchor="middle" fill="#111" stroke="#111" stroke-width="0.15">MT</text>
<text x="413.1" y="586.9" font-size="6.7" text-anchor="end" fill="#5c5c5c" stroke="#5c5c5c" stroke-width="0.15">0</text>
<line x1="415.3" y1="584.5" x2="416.6" y2="584.5" stroke="#7c7c7c" stroke-width="0.5" />
<line x1="507.9" y1="584.5" x2="509.2" y2="584.5" stroke="#7c7c7c" stroke-width="0.5" />
<text x="413.1" y="569.7" font-size="6.7" text-anchor="end" fill="#5c5c5c" stroke="#5c5c5c" stroke-width="0.15">0.1</text>
<line x1="415.3" y1="567.3" x2="416.6" y2="567.3" stroke="#7c7c7c" stroke-width="0.5" />
<line x1="507.9" y1="567.3" x2="509.2" y2="567.3" stroke="#7c7c7c" stroke-width="0.5" />
<text x="413.1" y="552.5" font-size="6.7" text-anchor="end" fill="#5c5c5c" stroke="#5c5c5c" stroke-width="0.15">0.2</text>
<line x1="415.3" y1="550.1" x2="416.6" y2="550.1" stroke="#7c7c7c" stroke-width="0.5" />
<line x1="507.9" y1="550.1" x2="509.2" y2="550.1" stroke="#7c7c7c" stroke-width="0.5" />
<text x="413.1" y="535.3" font-size="6.7" text-anchor="end" fill="#5c5c5c" stroke="#5c5c5c" stroke-width="0.15">0.3</text>
<line x1="415.3" y1="532.9" x2="416.6" y2="532.9" stroke="#7c7c7c" stroke-width="0.5" />
<line x1="507.9" y1="532.9" x2="509.2" y2="532.9" stroke="#7c7c7c" stroke-width="0.5" />
<text x="413.1" y="518.1" font-size="6.7" text-anchor="end" fill="#5c5c5c" stroke="#5c5c5c" stroke-width="0.15">0.4</text>
<line x1="415.3" y1="515.7" x2="416.6" y2="515.7" stroke="#7c7c7c" stroke-width="0.5" />
<line x1="507.9" y1="515.7" x2="509.2" y2="515.7" stroke="#7c7c7c" stroke-width="0.5" />
<text x="413.1" y="500.9" font-size="6.7" text-anchor="end" fill="#5c5c5c" stroke="#5c5c5c" stroke-width="0.15">0.5</text>
<line x1="415.3" y1="498.5" x2="416.6" y2="498.5" stroke="#7c7c7c" stroke-width="0.5" />
<line x1="507.9" y1="498.5" x2="509.2" y2="498.5" stroke="#7c7c7c" stroke-width="0.5" />
<text x="425.2" y="593.9" font-size="6.7" text-anchor="middle" fill="#5c5c5c" stroke="#5c5c5c" stroke-width="0.15">0</text>
<line x1="425.2" y1="584.5" x2="425.2" y2="583.2" stroke="#7c7c7c" stroke-width="0.5" />
<line x1="425.2" y1="498.5" x2="425.2" y2="499.8" stroke="#7c7c7c" stroke-width="0.5" />
<text x="466.6" y="593.9" font-size="6.7" text-anchor="middle" fill="#5c5c5c" stroke="#5c5c5c" stroke-width="0.15">0.5</text>
<line x1="466.6" y1="584.5" x2="466.6" y2="583.2" stroke="#7c7c7c" stroke-width="0.5" />
<line x1="466.6" y1="498.5" x2="466.6" y2="499.8" stroke="#7c7c7c" stroke-width="0.5" />
<text x="508.2" y="593.9" font-size="6.7" text-anchor="middle" fill="#5c5c5c" stroke="#5c5c5c" stroke-width="0.15">1</text>
<line x1="508.2" y1="584.5" x2="508.2" y2="583.2" stroke="#7c7c7c" stroke-width="0.5" />
<line x1="508.2" y1="498.5" x2="508.2" y2="499.8" stroke="#7c7c7c" stroke-width="0.5" />
<text x="462.25" y="604.3" font-size="7.9" text-anchor="middle" fill="#5c5c5c" stroke="#5c5c5c" stroke-width="0.17">Resultant vector length</text>
<text x="398.1" y="541.5" font-size="7.9" text-anchor="middle" fill="#5c5c5c" stroke="#5c5c5c" stroke-width="0.17" transform="rotate(-90 398.1 541.5)">Percentage of neurons</text>
<rect x="421.7" y="554.4" width="6.9" height="30.1" fill="#0b70bd" stroke="#0a4f86" stroke-width="0.35" />
<rect x="430.06" y="529.46" width="6.9" height="55.04" fill="#0b70bd" stroke="#0a4f86" stroke-width="0.35" />
<rect x="438.42" y="536" width="6.9" height="48.5" fill="#0b70bd" stroke="#0a4f86" stroke-width="0.35" />
<rect x="446.78" y="562.66" width="6.9" height="21.84" fill="#0b70bd" stroke="#0a4f86" stroke-width="0.35" />
<rect x="455.14" y="576.24" width="6.9" height="8.26" fill="#0b70bd" stroke="#0a4f86" stroke-width="0.35" />
<rect x="463.5" y="577.62" width="6.9" height="6.88" fill="#0b70bd" stroke="#0a4f86" stroke-width="0.35" />
<rect x="471.86" y="583.12" width="6.9" height="1.38" fill="#0b70bd" stroke="#0a4f86" stroke-width="0.35" />
<rect x="540" y="498.5" width="94.6" height="86" fill="#fff" stroke="#7c7c7c" stroke-width="0.75" />
<text x="587.3" y="495.1" font-size="7" font-weight="bold" text-anchor="middle" fill="#111" stroke="#111" stroke-width="0.15">MST</text>
<text x="537.8" y="586.9" font-size="6.7" text-anchor="end" fill="#5c5c5c" stroke="#5c5c5c" stroke-width="0.15">0</text>
<line x1="540" y1="584.5" x2="541.3" y2="584.5" stroke="#7c7c7c" stroke-width="0.5" />
<line x1="633.3" y1="584.5" x2="634.6" y2="584.5" stroke="#7c7c7c" stroke-width="0.5" />
<text x="537.8" y="569.7" font-size="6.7" text-anchor="end" fill="#5c5c5c" stroke="#5c5c5c" stroke-width="0.15">0.1</text>
<line x1="540" y1="567.3" x2="541.3" y2="567.3" stroke="#7c7c7c" stroke-width="0.5" />
<line x1="633.3" y1="567.3" x2="634.6" y2="567.3" stroke="#7c7c7c" stroke-width="0.5" />
<text x="537.8" y="552.5" font-size="6.7" text-anchor="end" fill="#5c5c5c" stroke="#5c5c5c" stroke-width="0.15">0.2</text>
<line x1="540" y1="550.1" x2="541.3" y2="550.1" stroke="#7c7c7c" stroke-width="0.5" />
<line x1="633.3" y1="550.1" x2="634.6" y2="550.1" stroke="#7c7c7c" stroke-width="0.5" />
<text x="537.8" y="535.3" font-size="6.7" text-anchor="end" fill="#5c5c5c" stroke="#5c5c5c" stroke-width="0.15">0.3</text>
<line x1="540" y1="532.9" x2="541.3" y2="532.9" stroke="#7c7c7c" stroke-width="0.5" />
<line x1="633.3" y1="532.9" x2="634.6" y2="532.9" stroke="#7c7c7c" stroke-width="0.5" />
<text x="537.8" y="518.1" font-size="6.7" text-anchor="end" fill="#5c5c5c" stroke="#5c5c5c" stroke-width="0.15">0.4</text>
<line x1="540" y1="515.7" x2="541.3" y2="515.7" stroke="#7c7c7c" stroke-width="0.5" />
<line x1="633.3" y1="515.7" x2="634.6" y2="515.7" stroke="#7c7c7c" stroke-width="0.5" />
<text x="537.8" y="500.9" font-size="6.7" text-anchor="end" fill="#5c5c5c" stroke="#5c5c5c" stroke-width="0.15">0.5</text>
<line x1="540" y1="498.5" x2="541.3" y2="498.5" stroke="#7c7c7c" stroke-width="0.5" />
<line x1="633.3" y1="498.5" x2="634.6" y2="498.5" stroke="#7c7c7c" stroke-width="0.5" />
<text x="549.9" y="593.9" font-size="6.7" text-anchor="middle" fill="#5c5c5c" stroke="#5c5c5c" stroke-width="0.15">0</text>
<line x1="549.9" y1="584.5" x2="549.9" y2="583.2" stroke="#7c7c7c" stroke-width="0.5" />
<line x1="549.9" y1="498.5" x2="549.9" y2="499.8" stroke="#7c7c7c" stroke-width="0.5" />
<text x="591.3" y="593.9" font-size="6.7" text-anchor="middle" fill="#5c5c5c" stroke="#5c5c5c" stroke-width="0.15">0.5</text>
<line x1="591.3" y1="584.5" x2="591.3" y2="583.2" stroke="#7c7c7c" stroke-width="0.5" />
<line x1="591.3" y1="498.5" x2="591.3" y2="499.8" stroke="#7c7c7c" stroke-width="0.5" />
<text x="632.9" y="593.9" font-size="6.7" text-anchor="middle" fill="#5c5c5c" stroke="#5c5c5c" stroke-width="0.15">1</text>
<line x1="632.9" y1="584.5" x2="632.9" y2="583.2" stroke="#7c7c7c" stroke-width="0.5" />
<line x1="632.9" y1="498.5" x2="632.9" y2="499.8" stroke="#7c7c7c" stroke-width="0.5" />
<text x="587.3" y="604.3" font-size="7.9" text-anchor="middle" fill="#5c5c5c" stroke="#5c5c5c" stroke-width="0.17">Resultant vector length</text>
<text x="522.8" y="541.5" font-size="7.9" text-anchor="middle" fill="#5c5c5c" stroke="#5c5c5c" stroke-width="0.17" transform="rotate(-90 522.8 541.5)">Percentage of neurons</text>
<rect x="546.4" y="553.54" width="6.9" height="30.96" fill="#0b70bd" stroke="#0a4f86" stroke-width="0.35" />
<rect x="554.76" y="527.74" width="6.9" height="56.76" fill="#0b70bd" stroke="#0a4f86" stroke-width="0.35" />
<rect x="563.12" y="533.76" width="6.9" height="50.74" fill="#0b70bd" stroke="#0a4f86" stroke-width="0.35" />
<rect x="571.48" y="560.42" width="6.9" height="24.08" fill="#0b70bd" stroke="#0a4f86" stroke-width="0.35" />
<rect x="579.84" y="577.1" width="6.9" height="7.4" fill="#0b70bd" stroke="#0a4f86" stroke-width="0.35" />
<rect x="588.2" y="582.09" width="6.9" height="2.41" fill="#0b70bd" stroke="#0a4f86" stroke-width="0.35" />
<rect x="665.1" y="498.5" width="93.9" height="86" fill="#fff" stroke="#7c7c7c" stroke-width="0.75" />
<text x="712.05" y="495.1" font-size="7" font-weight="bold" text-anchor="middle" fill="#111" stroke="#111" stroke-width="0.15">LIP</text>
<text x="662.9" y="586.9" font-size="6.7" text-anchor="end" fill="#5c5c5c" stroke="#5c5c5c" stroke-width="0.15">0</text>
<line x1="665.1" y1="584.5" x2="666.4" y2="584.5" stroke="#7c7c7c" stroke-width="0.5" />
<line x1="757.7" y1="584.5" x2="759" y2="584.5" stroke="#7c7c7c" stroke-width="0.5" />
<text x="662.9" y="569.7" font-size="6.7" text-anchor="end" fill="#5c5c5c" stroke="#5c5c5c" stroke-width="0.15">0.1</text>
<line x1="665.1" y1="567.3" x2="666.4" y2="567.3" stroke="#7c7c7c" stroke-width="0.5" />
<line x1="757.7" y1="567.3" x2="759" y2="567.3" stroke="#7c7c7c" stroke-width="0.5" />
<text x="662.9" y="552.5" font-size="6.7" text-anchor="end" fill="#5c5c5c" stroke="#5c5c5c" stroke-width="0.15">0.2</text>
<line x1="665.1" y1="550.1" x2="666.4" y2="550.1" stroke="#7c7c7c" stroke-width="0.5" />
<line x1="757.7" y1="550.1" x2="759" y2="550.1" stroke="#7c7c7c" stroke-width="0.5" />
<text x="662.9" y="535.3" font-size="6.7" text-anchor="end" fill="#5c5c5c" stroke="#5c5c5c" stroke-width="0.15">0.3</text>
<line x1="665.1" y1="532.9" x2="666.4" y2="532.9" stroke="#7c7c7c" stroke-width="0.5" />
<line x1="757.7" y1="532.9" x2="759" y2="532.9" stroke="#7c7c7c" stroke-width="0.5" />
<text x="662.9" y="518.1" font-size="6.7" text-anchor="end" fill="#5c5c5c" stroke="#5c5c5c" stroke-width="0.15">0.4</text>
<line x1="665.1" y1="515.7" x2="666.4" y2="515.7" stroke="#7c7c7c" stroke-width="0.5" />
<line x1="757.7" y1="515.7" x2="759" y2="515.7" stroke="#7c7c7c" stroke-width="0.5" />
<text x="662.9" y="500.9" font-size="6.7" text-anchor="end" fill="#5c5c5c" stroke="#5c5c5c" stroke-width="0.15">0.5</text>
<line x1="665.1" y1="498.5" x2="666.4" y2="498.5" stroke="#7c7c7c" stroke-width="0.5" />
<line x1="757.7" y1="498.5" x2="759" y2="498.5" stroke="#7c7c7c" stroke-width="0.5" />
<text x="675" y="593.9" font-size="6.7" text-anchor="middle" fill="#5c5c5c" stroke="#5c5c5c" stroke-width="0.15">0</text>
<line x1="675" y1="584.5" x2="675" y2="583.2" stroke="#7c7c7c" stroke-width="0.5" />
<line x1="675" y1="498.5" x2="675" y2="499.8" stroke="#7c7c7c" stroke-width="0.5" />
<text x="716.4" y="593.9" font-size="6.7" text-anchor="middle" fill="#5c5c5c" stroke="#5c5c5c" stroke-width="0.15">0.5</text>
<line x1="716.4" y1="584.5" x2="716.4" y2="583.2" stroke="#7c7c7c" stroke-width="0.5" />
<line x1="716.4" y1="498.5" x2="716.4" y2="499.8" stroke="#7c7c7c" stroke-width="0.5" />
<text x="758" y="593.9" font-size="6.7" text-anchor="middle" fill="#5c5c5c" stroke="#5c5c5c" stroke-width="0.15">1</text>
<line x1="758" y1="584.5" x2="758" y2="583.2" stroke="#7c7c7c" stroke-width="0.5" />
<line x1="758" y1="498.5" x2="758" y2="499.8" stroke="#7c7c7c" stroke-width="0.5" />
<text x="712.05" y="604.3" font-size="7.9" text-anchor="middle" fill="#5c5c5c" stroke="#5c5c5c" stroke-width="0.17">Resultant vector length</text>
<text x="647.9" y="541.5" font-size="7.9" text-anchor="middle" fill="#5c5c5c" stroke="#5c5c5c" stroke-width="0.17" transform="rotate(-90 647.9 541.5)">Percentage of neurons</text>
<rect x="671.5" y="551.82" width="6.9" height="32.68" fill="#0b70bd" stroke="#0a4f86" stroke-width="0.35" />
<rect x="679.86" y="509.34" width="6.9" height="75.16" fill="#0b70bd" stroke="#0a4f86" stroke-width="0.35" />
<rect x="688.22" y="537.2" width="6.9" height="47.3" fill="#0b70bd" stroke="#0a4f86" stroke-width="0.35" />
<rect x="696.58" y="570.22" width="6.9" height="14.28" fill="#0b70bd" stroke="#0a4f86" stroke-width="0.35" />
<rect x="704.94" y="582.44" width="6.9" height="2.06" fill="#0b70bd" stroke="#0a4f86" stroke-width="0.35" />
<rect x="721.66" y="584.16" width="6.9" height="0.34" fill="#0b70bd" stroke="#0a4f86" stroke-width="0.35" />
<rect x="789.1" y="498.5" width="95.3" height="86" fill="#fff" stroke="#7c7c7c" stroke-width="0.75" />
<text x="836.75" y="495.1" font-size="7" font-weight="bold" text-anchor="middle" fill="#111" stroke="#111" stroke-width="0.15">PFC</text>
<text x="786.9" y="586.9" font-size="6.7" text-anchor="end" fill="#5c5c5c" stroke="#5c5c5c" stroke-width="0.15">0</text>
<line x1="789.1" y1="584.5" x2="790.4" y2="584.5" stroke="#7c7c7c" stroke-width="0.5" />
<line x1="883.1" y1="584.5" x2="884.4" y2="584.5" stroke="#7c7c7c" stroke-width="0.5" />
<text x="786.9" y="569.7" font-size="6.7" text-anchor="end" fill="#5c5c5c" stroke="#5c5c5c" stroke-width="0.15">0.1</text>
<line x1="789.1" y1="567.3" x2="790.4" y2="567.3" stroke="#7c7c7c" stroke-width="0.5" />
<line x1="883.1" y1="567.3" x2="884.4" y2="567.3" stroke="#7c7c7c" stroke-width="0.5" />
<text x="786.9" y="552.5" font-size="6.7" text-anchor="end" fill="#5c5c5c" stroke="#5c5c5c" stroke-width="0.15">0.2</text>
<line x1="789.1" y1="550.1" x2="790.4" y2="550.1" stroke="#7c7c7c" stroke-width="0.5" />
<line x1="883.1" y1="550.1" x2="884.4" y2="550.1" stroke="#7c7c7c" stroke-width="0.5" />
<text x="786.9" y="535.3" font-size="6.7" text-anchor="end" fill="#5c5c5c" stroke="#5c5c5c" stroke-width="0.15">0.3</text>
<line x1="789.1" y1="532.9" x2="790.4" y2="532.9" stroke="#7c7c7c" stroke-width="0.5" />
<line x1="883.1" y1="532.9" x2="884.4" y2="532.9" stroke="#7c7c7c" stroke-width="0.5" />
<text x="786.9" y="518.1" font-size="6.7" text-anchor="end" fill="#5c5c5c" stroke="#5c5c5c" stroke-width="0.15">0.4</text>
<line x1="789.1" y1="515.7" x2="790.4" y2="515.7" stroke="#7c7c7c" stroke-width="0.5" />
<line x1="883.1" y1="515.7" x2="884.4" y2="515.7" stroke="#7c7c7c" stroke-width="0.5" />
<text x="786.9" y="500.9" font-size="6.7" text-anchor="end" fill="#5c5c5c" stroke="#5c5c5c" stroke-width="0.15">0.5</text>
<line x1="789.1" y1="498.5" x2="790.4" y2="498.5" stroke="#7c7c7c" stroke-width="0.5" />
<line x1="883.1" y1="498.5" x2="884.4" y2="498.5" stroke="#7c7c7c" stroke-width="0.5" />
<text x="799" y="593.9" font-size="6.7" text-anchor="middle" fill="#5c5c5c" stroke="#5c5c5c" stroke-width="0.15">0</text>
<line x1="799" y1="584.5" x2="799" y2="583.2" stroke="#7c7c7c" stroke-width="0.5" />
<line x1="799" y1="498.5" x2="799" y2="499.8" stroke="#7c7c7c" stroke-width="0.5" />
<text x="840.4" y="593.9" font-size="6.7" text-anchor="middle" fill="#5c5c5c" stroke="#5c5c5c" stroke-width="0.15">0.5</text>
<line x1="840.4" y1="584.5" x2="840.4" y2="583.2" stroke="#7c7c7c" stroke-width="0.5" />
<line x1="840.4" y1="498.5" x2="840.4" y2="499.8" stroke="#7c7c7c" stroke-width="0.5" />
<text x="882" y="593.9" font-size="6.7" text-anchor="middle" fill="#5c5c5c" stroke="#5c5c5c" stroke-width="0.15">1</text>
<line x1="882" y1="584.5" x2="882" y2="583.2" stroke="#7c7c7c" stroke-width="0.5" />
<line x1="882" y1="498.5" x2="882" y2="499.8" stroke="#7c7c7c" stroke-width="0.5" />
<text x="836.75" y="604.3" font-size="7.9" text-anchor="middle" fill="#5c5c5c" stroke="#5c5c5c" stroke-width="0.17">Resultant vector length</text>
<text x="771.9" y="541.5" font-size="7.9" text-anchor="middle" fill="#5c5c5c" stroke="#5c5c5c" stroke-width="0.17" transform="rotate(-90 771.9 541.5)">Percentage of neurons</text>
<rect x="795.5" y="538.06" width="6.9" height="46.44" fill="#0b70bd" stroke="#0a4f86" stroke-width="0.35" />
<rect x="803.86" y="519.48" width="6.9" height="65.02" fill="#0b70bd" stroke="#0a4f86" stroke-width="0.35" />
<rect x="812.22" y="542.02" width="6.9" height="42.48" fill="#0b70bd" stroke="#0a4f86" stroke-width="0.35" />
<rect x="820.58" y="568.16" width="6.9" height="16.34" fill="#0b70bd" stroke="#0a4f86" stroke-width="0.35" />
<rect x="828.94" y="583.3" width="6.9" height="1.2" fill="#0b70bd" stroke="#0a4f86" stroke-width="0.35" />
<rect x="837.3" y="583.98" width="6.9" height="0.52" fill="#0b70bd" stroke="#0a4f86" stroke-width="0.35" />
<rect x="922.2" y="312.6" width="177.3" height="139.3" fill="#fff" stroke="#9a9a9a" stroke-width="0.55" />
<text x="905.7" y="309.6" font-size="5.5" textLength="209.1" lengthAdjust="spacingAndGlyphs" font-weight="bold" fill="#111" stroke="#111" stroke-width="0.12">Concentration parameter means from the top n percent of each brain area</text>
<text x="920.6" y="453.6" font-size="4.9" text-anchor="end" fill="#5c5c5c" stroke="#5c5c5c" stroke-width="0.11">0.2</text>
<line x1="922.2" y1="451.9" x2="923.7" y2="451.9" stroke="#999" stroke-width="0.4" />
<line x1="1098" y1="451.9" x2="1099.5" y2="451.9" stroke="#999" stroke-width="0.4" />
<text x="920.6" y="433.7" font-size="4.9" text-anchor="end" fill="#5c5c5c" stroke="#5c5c5c" stroke-width="0.11">0.4</text>
<line x1="922.2" y1="432" x2="923.7" y2="432" stroke="#999" stroke-width="0.4" />
<line x1="1098" y1="432" x2="1099.5" y2="432" stroke="#999" stroke-width="0.4" />
<text x="920.6" y="413.8" font-size="4.9" text-anchor="end" fill="#5c5c5c" stroke="#5c5c5c" stroke-width="0.11">0.6</text>
<line x1="922.2" y1="412.1" x2="923.7" y2="412.1" stroke="#999" stroke-width="0.4" />
<line x1="1098" y1="412.1" x2="1099.5" y2="412.1" stroke="#999" stroke-width="0.4" />
<text x="920.6" y="393.9" font-size="4.9" text-anchor="end" fill="#5c5c5c" stroke="#5c5c5c" stroke-width="0.11">0.8</text>
<line x1="922.2" y1="392.2" x2="923.7" y2="392.2" stroke="#999" stroke-width="0.4" />
<line x1="1098" y1="392.2" x2="1099.5" y2="392.2" stroke="#999" stroke-width="0.4" />
<text x="920.6" y="374" font-size="4.9" text-anchor="end" fill="#5c5c5c" stroke="#5c5c5c" stroke-width="0.11">1</text>
<line x1="922.2" y1="372.3" x2="923.7" y2="372.3" stroke="#999" stroke-width="0.4" />
<line x1="1098" y1="372.3" x2="1099.5" y2="372.3" stroke="#999" stroke-width="0.4" />
<text x="920.6" y="354.1" font-size="4.9" text-anchor="end" fill="#5c5c5c" stroke="#5c5c5c" stroke-width="0.11">1.2</text>
<line x1="922.2" y1="352.4" x2="923.7" y2="352.4" stroke="#999" stroke-width="0.4" />
<line x1="1098" y1="352.4" x2="1099.5" y2="352.4" stroke="#999" stroke-width="0.4" />
<text x="920.6" y="334.2" font-size="4.9" text-anchor="end" fill="#5c5c5c" stroke="#5c5c5c" stroke-width="0.11">1.4</text>
<line x1="922.2" y1="332.5" x2="923.7" y2="332.5" stroke="#999" stroke-width="0.4" />
<line x1="1098" y1="332.5" x2="1099.5" y2="332.5" stroke="#999" stroke-width="0.4" />
<text x="920.6" y="314.3" font-size="4.9" text-anchor="end" fill="#5c5c5c" stroke="#5c5c5c" stroke-width="0.11">1.6</text>
<line x1="922.2" y1="312.6" x2="923.7" y2="312.6" stroke="#999" stroke-width="0.4" />
<line x1="1098" y1="312.6" x2="1099.5" y2="312.6" stroke="#999" stroke-width="0.4" />
<text x="922.2" y="458.8" font-size="4.9" text-anchor="middle" fill="#5c5c5c" stroke="#5c5c5c" stroke-width="0.11">0</text>
<line x1="922.2" y1="451.9" x2="922.2" y2="450.4" stroke="#999" stroke-width="0.4" />
<line x1="922.2" y1="312.6" x2="922.2" y2="314.1" stroke="#999" stroke-width="0.4" />
<text x="957.66" y="458.8" font-size="4.9" text-anchor="middle" fill="#5c5c5c" stroke="#5c5c5c" stroke-width="0.11">20</text>
<line x1="957.66" y1="451.9" x2="957.66" y2="450.4" stroke="#999" stroke-width="0.4" />
<line x1="957.66" y1="312.6" x2="957.66" y2="314.1" stroke="#999" stroke-width="0.4" />
<text x="993.12" y="458.8" font-size="4.9" text-anchor="middle" fill="#5c5c5c" stroke="#5c5c5c" stroke-width="0.11">40</text>
<line x1="993.12" y1="451.9" x2="993.12" y2="450.4" stroke="#999" stroke-width="0.4" />
<line x1="993.12" y1="312.6" x2="993.12" y2="314.1" stroke="#999" stroke-width="0.4" />
<text x="1028.58" y="458.8" font-size="4.9" text-anchor="middle" fill="#5c5c5c" stroke="#5c5c5c" stroke-width="0.11">60</text>
<line x1="1028.58" y1="451.9" x2="1028.58" y2="450.4" stroke="#999" stroke-width="0.4" />
<line x1="1028.58" y1="312.6" x2="1028.58" y2="314.1" stroke="#999" stroke-width="0.4" />
<text x="1064.04" y="458.8" font-size="4.9" text-anchor="middle" fill="#5c5c5c" stroke="#5c5c5c" stroke-width="0.11">80</text>
<line x1="1064.04" y1="451.9" x2="1064.04" y2="450.4" stroke="#999" stroke-width="0.4" />
<line x1="1064.04" y1="312.6" x2="1064.04" y2="314.1" stroke="#999" stroke-width="0.4" />
<text x="1099.5" y="458.8" font-size="4.9" text-anchor="middle" fill="#5c5c5c" stroke="#5c5c5c" stroke-width="0.11">100</text>
<line x1="1099.5" y1="451.9" x2="1099.5" y2="450.4" stroke="#999" stroke-width="0.4" />
<line x1="1099.5" y1="312.6" x2="1099.5" y2="314.1" stroke="#999" stroke-width="0.4" />
<text x="1010.85" y="467" font-size="5.95" text-anchor="middle" fill="#5c5c5c" stroke="#5c5c5c" stroke-width="0.13">Percentage of total neurons analyzed</text>
<text x="909.4" y="382.25" font-size="5.95" text-anchor="middle" fill="#5c5c5c" stroke="#5c5c5c" stroke-width="0.13" transform="rotate(-90 909.4 382.25)">Concentration Parameter</text>
<path d="M923.97 376.97 L924.78 379.46 L925.58 381.39 L926.39 382.99 L927.2 384.37 L928 385.59 L928.81 386.7 L929.61 387.71 L930.42 388.64 L931.23 389.5 L932.03 390.32 L932.84 391.08 L933.72 391.88 L937.25 394.68 L940.78 397.05 L944.31 399.13 L947.83 401 L951.36 402.7 L954.89 404.26 L958.41 405.72 L961.94 407.08 L965.47 408.37 L969 409.58 L972.52 410.74 L976.05 411.85 L979.58 412.9 L983.1 413.92 L986.63 414.9 L990.16 415.84 L993.69 416.76 L997.21 417.64 L1000.74 418.49 L1004.27 419.32 L1007.79 420.13 L1011.32 420.92 L1014.85 421.68 L1018.38 422.43 L1021.9 423.16 L1025.43 423.87 L1028.96 424.57 L1032.48 425.25 L1036.01 425.92 L1039.54 426.57 L1043.07 427.21 L1046.59 427.84 L1050.12 428.46 L1053.65 429.06 L1057.17 429.66 L1060.7 430.24 L1064.23 430.81 L1067.76 431.38 L1071.28 431.94 L1074.81 432.48 L1078.34 433.02 L1081.86 433.55 L1085.39 434.08 L1088.92 434.59 L1092.45 435.1 L1095.97 435.6 L1099.5 436.1" stroke="#ff7d7d" stroke-width="0.6" fill="none" />
<path d="M923.97 368.19 L924.78 372.32 L925.58 375.36 L926.39 377.79 L927.2 379.81 L928 381.54 L928.81 383.07 L929.61 384.44 L930.42 385.67 L931.23 386.8 L932.03 387.85 L932.84 388.81 L933.72 389.81 L937.25 393.18 L940.78 395.92 L944.31 398.24 L947.83 400.27 L951.36 402.08 L954.89 403.71 L958.41 405.21 L961.94 406.6 L965.47 407.89 L969 409.1 L972.52 410.24 L976.05 411.32 L979.58 412.35 L983.1 413.33 L986.63 414.27 L990.16 415.17 L993.69 416.04 L997.21 416.88 L1000.74 417.69 L1004.27 418.48 L1007.79 419.24 L1011.32 419.98 L1014.85 420.7 L1018.38 421.4 L1021.9 422.09 L1025.43 422.75 L1028.96 423.41 L1032.48 424.04 L1036.01 424.67 L1039.54 425.28 L1043.07 425.88 L1046.59 426.47 L1050.12 427.04 L1053.65 427.61 L1057.17 428.17 L1060.7 428.72 L1064.23 429.26 L1067.76 429.79 L1071.28 430.31 L1074.81 430.83 L1078.34 431.34 L1081.86 431.84 L1085.39 432.33 L1088.92 432.82 L1092.45 433.3 L1095.97 433.78 L1099.5 434.25" stroke="#6e6eff" stroke-width="0.6" fill="none" />
<path d="M923.97 336.89 L924.78 342.44 L925.58 346.56 L926.39 349.86 L927.2 352.63 L928 355.02 L928.81 357.13 L929.61 359.01 L930.42 360.73 L931.23 362.3 L932.03 363.75 L932.84 365.11 L933.72 366.49 L937.25 371.23 L940.78 375.09 L944.31 378.38 L947.83 381.25 L951.36 383.8 L954.89 386.12 L958.41 388.23 L961.94 390.19 L965.47 392.01 L969 393.71 L972.52 395.31 L976.05 396.82 L979.58 398.26 L983.1 399.63 L986.63 400.94 L990.16 402.19 L993.69 403.39 L997.21 404.55 L1000.74 405.66 L1004.27 406.74 L1007.79 407.78 L1011.32 408.79 L1014.85 409.76 L1018.38 410.71 L1021.9 411.64 L1025.43 412.53 L1028.96 413.41 L1032.48 414.26 L1036.01 415.09 L1039.54 415.9 L1043.07 416.7 L1046.59 417.47 L1050.12 418.23 L1053.65 418.98 L1057.17 419.71 L1060.7 420.42 L1064.23 421.12 L1067.76 421.81 L1071.28 422.49 L1074.81 423.15 L1078.34 423.8 L1081.86 424.44 L1085.39 425.07 L1088.92 425.69 L1092.45 426.3 L1095.97 426.9 L1099.5 427.5" stroke="#63ee63" stroke-width="0.6" fill="none" />
<path d="M923.97 314.56 L924.78 320.26 L925.58 324.69 L926.39 328.35 L927.2 331.51 L928 334.29 L928.81 336.79 L929.61 339.06 L930.42 341.16 L931.23 343.1 L932.03 344.92 L932.84 346.62 L933.72 348.39 L937.25 354.52 L940.78 359.63 L944.31 364.03 L947.83 367.91 L951.36 371.39 L954.89 374.54 L958.41 377.42 L961.94 380.08 L965.47 382.54 L969 384.84 L972.52 386.99 L976.05 389.01 L979.58 390.92 L983.1 392.72 L986.63 394.43 L990.16 396.05 L993.69 397.59 L997.21 399.06 L1000.74 400.46 L1004.27 401.8 L1007.79 403.08 L1011.32 404.31 L1014.85 405.49 L1018.38 406.62 L1021.9 407.7 L1025.43 408.75 L1028.96 409.75 L1032.48 410.72 L1036.01 411.65 L1039.54 412.54 L1043.07 413.41 L1046.59 414.24 L1050.12 415.04 L1053.65 415.82 L1057.17 416.56 L1060.7 417.29 L1064.23 417.98 L1067.76 418.66 L1071.28 419.31 L1074.81 419.94 L1078.34 420.55 L1081.86 421.13 L1085.39 421.7 L1088.92 422.25 L1092.45 422.78 L1095.97 423.29 L1099.5 423.79" stroke="#6a6a6a" stroke-width="0.6" fill="none" />
<rect x="1063.3" y="316.2" width="31.8" height="29.2" fill="#fff" stroke="#999" stroke-width="0.45" />
<line x1="1064.9" y1="320.61" x2="1080.6" y2="320.61" stroke="#ff8a8a" stroke-width="0.6" />
<text x="1082.6" y="322.31" font-size="4.8" fill="#555" stroke="#555" stroke-width="0.11">PFC</text>
<line x1="1064.9" y1="327.4" x2="1080.6" y2="327.4" stroke="#7a7aff" stroke-width="0.6" />
<text x="1082.6" y="329.1" font-size="4.8" fill="#555" stroke="#555" stroke-width="0.11">LIP</text>
<line x1="1064.9" y1="334.2" x2="1080.6" y2="334.2" stroke="#7af07a" stroke-width="0.6" />
<text x="1082.6" y="335.9" font-size="4.8" fill="#555" stroke="#555" stroke-width="0.11">MST</text>
<line x1="1064.9" y1="340.99" x2="1080.6" y2="340.99" stroke="#7a7a7a" stroke-width="0.6" />
<text x="1082.6" y="342.69" font-size="4.8" fill="#555" stroke="#555" stroke-width="0.11">MT</text>
<rect x="923.1" y="482.7" width="176.1" height="137.6" fill="#fff" stroke="#9a9a9a" stroke-width="0.55" />
<text x="927.6" y="479.9" font-size="5.5" textLength="166.9" lengthAdjust="spacingAndGlyphs" font-weight="bold" fill="#111" stroke="#111" stroke-width="0.12">Selectivity means from the top n percent of each brain area</text>
<text x="921.5" y="622" font-size="4.9" text-anchor="end" fill="#5c5c5c" stroke="#5c5c5c" stroke-width="0.11">0.15</text>
<line x1="923.1" y1="620.3" x2="924.6" y2="620.3" stroke="#999" stroke-width="0.4" />
<line x1="1097.7" y1="620.3" x2="1099.2" y2="620.3" stroke="#999" stroke-width="0.4" />
<text x="921.5" y="608.24" font-size="4.9" text-anchor="end" fill="#5c5c5c" stroke="#5c5c5c" stroke-width="0.11">0.2</text>
<line x1="923.1" y1="606.54" x2="924.6" y2="606.54" stroke="#999" stroke-width="0.4" />
<line x1="1097.7" y1="606.54" x2="1099.2" y2="606.54" stroke="#999" stroke-width="0.4" />
<text x="921.5" y="594.48" font-size="4.9" text-anchor="end" fill="#5c5c5c" stroke="#5c5c5c" stroke-width="0.11">0.25</text>
<line x1="923.1" y1="592.78" x2="924.6" y2="592.78" stroke="#999" stroke-width="0.4" />
<line x1="1097.7" y1="592.78" x2="1099.2" y2="592.78" stroke="#999" stroke-width="0.4" />
<text x="921.5" y="580.72" font-size="4.9" text-anchor="end" fill="#5c5c5c" stroke="#5c5c5c" stroke-width="0.11">0.3</text>
<line x1="923.1" y1="579.02" x2="924.6" y2="579.02" stroke="#999" stroke-width="0.4" />
<line x1="1097.7" y1="579.02" x2="1099.2" y2="579.02" stroke="#999" stroke-width="0.4" />
<text x="921.5" y="566.96" font-size="4.9" text-anchor="end" fill="#5c5c5c" stroke="#5c5c5c" stroke-width="0.11">0.35</text>
<line x1="923.1" y1="565.26" x2="924.6" y2="565.26" stroke="#999" stroke-width="0.4" />
<line x1="1097.7" y1="565.26" x2="1099.2" y2="565.26" stroke="#999" stroke-width="0.4" />
<text x="921.5" y="553.2" font-size="4.9" text-anchor="end" fill="#5c5c5c" stroke="#5c5c5c" stroke-width="0.11">0.4</text>
<line x1="923.1" y1="551.5" x2="924.6" y2="551.5" stroke="#999" stroke-width="0.4" />
<line x1="1097.7" y1="551.5" x2="1099.2" y2="551.5" stroke="#999" stroke-width="0.4" />
<text x="921.5" y="539.44" font-size="4.9" text-anchor="end" fill="#5c5c5c" stroke="#5c5c5c" stroke-width="0.11">0.45</text>
<line x1="923.1" y1="537.74" x2="924.6" y2="537.74" stroke="#999" stroke-width="0.4" />
<line x1="1097.7" y1="537.74" x2="1099.2" y2="537.74" stroke="#999" stroke-width="0.4" />
<text x="921.5" y="525.68" font-size="4.9" text-anchor="end" fill="#5c5c5c" stroke="#5c5c5c" stroke-width="0.11">0.5</text>
<line x1="923.1" y1="523.98" x2="924.6" y2="523.98" stroke="#999" stroke-width="0.4" />
<line x1="1097.7" y1="523.98" x2="1099.2" y2="523.98" stroke="#999" stroke-width="0.4" />
<text x="921.5" y="511.92" font-size="4.9" text-anchor="end" fill="#5c5c5c" stroke="#5c5c5c" stroke-width="0.11">0.55</text>
<line x1="923.1" y1="510.22" x2="924.6" y2="510.22" stroke="#999" stroke-width="0.4" />
<line x1="1097.7" y1="510.22" x2="1099.2" y2="510.22" stroke="#999" stroke-width="0.4" />
<text x="921.5" y="498.16" font-size="4.9" text-anchor="end" fill="#5c5c5c" stroke="#5c5c5c" stroke-width="0.11">0.6</text>
<line x1="923.1" y1="496.46" x2="924.6" y2="496.46" stroke="#999" stroke-width="0.4" />
<line x1="1097.7" y1="496.46" x2="1099.2" y2="496.46" stroke="#999" stroke-width="0.4" />
<text x="921.5" y="484.4" font-size="4.9" text-anchor="end" fill="#5c5c5c" stroke="#5c5c5c" stroke-width="0.11">0.65</text>
<line x1="923.1" y1="482.7" x2="924.6" y2="482.7" stroke="#999" stroke-width="0.4" />
<line x1="1097.7" y1="482.7" x2="1099.2" y2="482.7" stroke="#999" stroke-width="0.4" />
<text x="923.1" y="627.2" font-size="4.9" text-anchor="middle" fill="#5c5c5c" stroke="#5c5c5c" stroke-width="0.11">0</text>
<line x1="923.1" y1="620.3" x2="923.1" y2="618.8" stroke="#999" stroke-width="0.4" />
<line x1="923.1" y1="482.7" x2="923.1" y2="484.2" stroke="#999" stroke-width="0.4" />
<text x="958.32" y="627.2" font-size="4.9" text-anchor="middle" fill="#5c5c5c" stroke="#5c5c5c" stroke-width="0.11">20</text>
<line x1="958.32" y1="620.3" x2="958.32" y2="618.8" stroke="#999" stroke-width="0.4" />
<line x1="958.32" y1="482.7" x2="958.32" y2="484.2" stroke="#999" stroke-width="0.4" />
<text x="993.54" y="627.2" font-size="4.9" text-anchor="middle" fill="#5c5c5c" stroke="#5c5c5c" stroke-width="0.11">40</text>
<line x1="993.54" y1="620.3" x2="993.54" y2="618.8" stroke="#999" stroke-width="0.4" />
<line x1="993.54" y1="482.7" x2="993.54" y2="484.2" stroke="#999" stroke-width="0.4" />
<text x="1028.76" y="627.2" font-size="4.9" text-anchor="middle" fill="#5c5c5c" stroke="#5c5c5c" stroke-width="0.11">60</text>
<line x1="1028.76" y1="620.3" x2="1028.76" y2="618.8" stroke="#999" stroke-width="0.4" />
<line x1="1028.76" y1="482.7" x2="1028.76" y2="484.2" stroke="#999" stroke-width="0.4" />
<text x="1063.98" y="627.2" font-size="4.9" text-anchor="middle" fill="#5c5c5c" stroke="#5c5c5c" stroke-width="0.11">80</text>
<line x1="1063.98" y1="620.3" x2="1063.98" y2="618.8" stroke="#999" stroke-width="0.4" />
<line x1="1063.98" y1="482.7" x2="1063.98" y2="484.2" stroke="#999" stroke-width="0.4" />
<text x="1099.2" y="627.2" font-size="4.9" text-anchor="middle" fill="#5c5c5c" stroke="#5c5c5c" stroke-width="0.11">100</text>
<line x1="1099.2" y1="620.3" x2="1099.2" y2="618.8" stroke="#999" stroke-width="0.4" />
<line x1="1099.2" y1="482.7" x2="1099.2" y2="484.2" stroke="#999" stroke-width="0.4" />
<text x="1011.15" y="635.4" font-size="5.95" text-anchor="middle" fill="#5c5c5c" stroke="#5c5c5c" stroke-width="0.13">Percentage of total neurons analyzed</text>
<text x="907.6" y="551.5" font-size="5.95" text-anchor="middle" fill="#5c5c5c" stroke="#5c5c5c" stroke-width="0.13" transform="rotate(-90 907.6 551.5)">Selectivity (Normalized Resultant Vector Length</text>
<path d="M924.86 543.01 L925.66 545.83 L926.46 548.01 L927.26 549.83 L928.06 551.4 L928.86 552.8 L929.66 554.05 L930.46 555.2 L931.26 556.27 L932.07 557.26 L932.87 558.19 L933.67 559.07 L934.55 559.99 L938.05 563.21 L941.55 565.97 L945.06 568.39 L948.56 570.57 L952.06 572.57 L955.57 574.42 L959.07 576.15 L962.57 577.77 L966.08 579.31 L969.58 580.78 L973.08 582.18 L976.59 583.52 L980.09 584.8 L983.59 586.04 L987.1 587.24 L990.6 588.4 L994.1 589.53 L997.61 590.62 L1001.11 591.69 L1004.61 592.72 L1008.12 593.73 L1011.62 594.72 L1015.12 595.68 L1018.62 596.63 L1022.13 597.55 L1025.63 598.46 L1029.13 599.34 L1032.64 600.21 L1036.14 601.07 L1039.64 601.91 L1043.15 602.73 L1046.65 603.55 L1050.15 604.35 L1053.66 605.13 L1057.16 605.91 L1060.66 606.67 L1064.17 607.43 L1067.67 608.17 L1071.17 608.9 L1074.68 609.62 L1078.18 610.34 L1081.68 611.04 L1085.19 611.74 L1088.69 612.43 L1092.19 613.11 L1095.7 613.78 L1099.2 614.45" stroke="#ff7d7d" stroke-width="0.6" fill="none" />
<path d="M924.86 536.04 L925.66 539.98 L926.46 542.93 L927.26 545.31 L928.06 547.31 L928.86 549.05 L929.66 550.59 L930.46 551.98 L931.26 553.24 L932.07 554.41 L932.87 555.49 L933.67 556.5 L934.55 557.55 L938.05 561.14 L941.55 564.12 L945.06 566.69 L948.56 568.96 L952.06 571.01 L955.57 572.89 L959.07 574.63 L962.57 576.25 L966.08 577.78 L969.58 579.22 L973.08 580.59 L976.59 581.9 L980.09 583.15 L983.59 584.36 L987.1 585.51 L990.6 586.63 L994.1 587.72 L997.61 588.77 L1001.11 589.79 L1004.61 590.78 L1008.12 591.74 L1011.62 592.69 L1015.12 593.61 L1018.62 594.51 L1022.13 595.39 L1025.63 596.25 L1029.13 597.1 L1032.64 597.93 L1036.14 598.74 L1039.64 599.54 L1043.15 600.33 L1046.65 601.1 L1050.15 601.86 L1053.66 602.62 L1057.16 603.36 L1060.66 604.08 L1064.17 604.8 L1067.67 605.51 L1071.17 606.21 L1074.68 606.91 L1078.18 607.59 L1081.68 608.27 L1085.19 608.93 L1088.69 609.59 L1092.19 610.25 L1095.7 610.89 L1099.2 611.53" stroke="#6e6eff" stroke-width="0.6" fill="none" />
<path d="M924.86 508.57 L925.66 513.86 L926.46 517.8 L927.26 520.95 L928.06 523.59 L928.86 525.87 L929.66 527.89 L930.46 529.7 L931.26 531.34 L932.07 532.85 L932.87 534.25 L933.67 535.55 L934.55 536.89 L938.05 541.49 L941.55 545.27 L945.06 548.51 L948.56 551.36 L952.06 553.93 L955.57 556.27 L959.07 558.43 L962.57 560.45 L966.08 562.33 L969.58 564.12 L973.08 565.81 L976.59 567.42 L980.09 568.96 L983.59 570.44 L987.1 571.86 L990.6 573.23 L994.1 574.56 L997.61 575.85 L1001.11 577.1 L1004.61 578.31 L1008.12 579.49 L1011.62 580.65 L1015.12 581.77 L1018.62 582.87 L1022.13 583.95 L1025.63 585 L1029.13 586.04 L1032.64 587.05 L1036.14 588.05 L1039.64 589.03 L1043.15 589.99 L1046.65 590.94 L1050.15 591.87 L1053.66 592.79 L1057.16 593.69 L1060.66 594.58 L1064.17 595.46 L1067.67 596.33 L1071.17 597.19 L1074.68 598.04 L1078.18 598.87 L1081.68 599.7 L1085.19 600.52 L1088.69 601.33 L1092.19 602.13 L1095.7 602.92 L1099.2 603.7" stroke="#63ee63" stroke-width="0.6" fill="none" />
<path d="M924.86 491.91 L925.66 496.03 L926.46 499.35 L927.26 502.18 L928.06 504.66 L928.86 506.89 L929.66 508.93 L930.46 510.81 L931.26 512.56 L932.07 514.2 L932.87 515.74 L933.67 517.21 L934.55 518.74 L938.05 524.17 L941.55 528.81 L945.06 532.89 L948.56 536.56 L952.06 539.9 L955.57 542.98 L959.07 545.83 L962.57 548.49 L966.08 551 L969.58 553.36 L973.08 555.6 L976.59 557.72 L980.09 559.75 L983.59 561.68 L987.1 563.54 L990.6 565.31 L994.1 567.02 L997.61 568.66 L1001.11 570.25 L1004.61 571.78 L1008.12 573.25 L1011.62 574.68 L1015.12 576.07 L1018.62 577.41 L1022.13 578.71 L1025.63 579.97 L1029.13 581.2 L1032.64 582.39 L1036.14 583.55 L1039.64 584.68 L1043.15 585.78 L1046.65 586.85 L1050.15 587.89 L1053.66 588.91 L1057.16 589.9 L1060.66 590.87 L1064.17 591.82 L1067.67 592.75 L1071.17 593.65 L1074.68 594.53 L1078.18 595.4 L1081.68 596.24 L1085.19 597.07 L1088.69 597.88 L1092.19 598.67 L1095.7 599.44 L1099.2 600.2" stroke="#6a6a6a" stroke-width="0.6" fill="none" />
<rect x="1063.3" y="486.4" width="31.6" height="28.2" fill="#fff" stroke="#999" stroke-width="0.45" />
<line x1="1064.9" y1="490.66" x2="1080.6" y2="490.66" stroke="#ff8a8a" stroke-width="0.6" />
<text x="1082.6" y="492.36" font-size="4.8" fill="#555" stroke="#555" stroke-width="0.11">PFC</text>
<line x1="1064.9" y1="497.22" x2="1080.6" y2="497.22" stroke="#7a7aff" stroke-width="0.6" />
<text x="1082.6" y="498.92" font-size="4.8" fill="#555" stroke="#555" stroke-width="0.11">LIP</text>
<line x1="1064.9" y1="503.78" x2="1080.6" y2="503.78" stroke="#7af07a" stroke-width="0.6" />
<text x="1082.6" y="505.48" font-size="4.8" fill="#555" stroke="#555" stroke-width="0.11">MST</text>
<line x1="1064.9" y1="510.34" x2="1080.6" y2="510.34" stroke="#7a7a7a" stroke-width="0.6" />
<text x="1082.6" y="512.04" font-size="4.8" fill="#555" stroke="#555" stroke-width="0.11">MT</text>
<text x="1144.6" y="290.5" font-size="5.6" textLength="158.4" lengthAdjust="spacingAndGlyphs" fill="#222" stroke="#222" stroke-width="0.12">Data for bar graphs from ANOVAs run on the top 15% of units:</text>
<text x="1131.2" y="305.2" font-size="6.3" textLength="179.5" lengthAdjust="spacingAndGlyphs" font-weight="bold" fill="#111" stroke="#111" stroke-width="0.14">Comparison of concentration parameter between brain areas</text>
<rect x="1135.2" y="311.8" width="176.9" height="139.1" fill="#fff" stroke="#dcdcdc" stroke-width="0.6" />
<text x="1132.6" y="452.5" font-size="4.6" text-anchor="end" fill="#666" stroke="#666" stroke-width="0.1">0</text>
<line x1="1135.2" y1="450.9" x2="1136.8" y2="450.9" stroke="#c8c8c8" stroke-width="0.4" />
<line x1="1310.5" y1="450.9" x2="1312.1" y2="450.9" stroke="#c8c8c8" stroke-width="0.4" />
<text x="1132.6" y="429.32" font-size="4.6" text-anchor="end" fill="#666" stroke="#666" stroke-width="0.1">0.2</text>
<line x1="1135.2" y1="427.72" x2="1136.8" y2="427.72" stroke="#c8c8c8" stroke-width="0.4" />
<line x1="1310.5" y1="427.72" x2="1312.1" y2="427.72" stroke="#c8c8c8" stroke-width="0.4" />
<text x="1132.6" y="406.13" font-size="4.6" text-anchor="end" fill="#666" stroke="#666" stroke-width="0.1">0.4</text>
<line x1="1135.2" y1="404.53" x2="1136.8" y2="404.53" stroke="#c8c8c8" stroke-width="0.4" />
<line x1="1310.5" y1="404.53" x2="1312.1" y2="404.53" stroke="#c8c8c8" stroke-width="0.4" />
<text x="1132.6" y="382.95" font-size="4.6" text-anchor="end" fill="#666" stroke="#666" stroke-width="0.1">0.6</text>
<line x1="1135.2" y1="381.35" x2="1136.8" y2="381.35" stroke="#c8c8c8" stroke-width="0.4" />
<line x1="1310.5" y1="381.35" x2="1312.1" y2="381.35" stroke="#c8c8c8" stroke-width="0.4" />
<text x="1132.6" y="359.77" font-size="4.6" text-anchor="end" fill="#666" stroke="#666" stroke-width="0.1">0.8</text>
<line x1="1135.2" y1="358.17" x2="1136.8" y2="358.17" stroke="#c8c8c8" stroke-width="0.4" />
<line x1="1310.5" y1="358.17" x2="1312.1" y2="358.17" stroke="#c8c8c8" stroke-width="0.4" />
<text x="1132.6" y="336.58" font-size="4.6" text-anchor="end" fill="#666" stroke="#666" stroke-width="0.1">1</text>
<line x1="1135.2" y1="334.98" x2="1136.8" y2="334.98" stroke="#c8c8c8" stroke-width="0.4" />
<line x1="1310.5" y1="334.98" x2="1312.1" y2="334.98" stroke="#c8c8c8" stroke-width="0.4" />
<text x="1132.6" y="313.4" font-size="4.6" text-anchor="end" fill="#666" stroke="#666" stroke-width="0.1">1.2</text>
<line x1="1135.2" y1="311.8" x2="1136.8" y2="311.8" stroke="#c8c8c8" stroke-width="0.4" />
<line x1="1310.5" y1="311.8" x2="1312.1" y2="311.8" stroke="#c8c8c8" stroke-width="0.4" />
<rect x="1161.9" y="331.85" width="26.1" height="119.05" fill="#0a70bc" />
<line x1="1174.95" y1="328.27" x2="1174.95" y2="334.9" stroke="#ff0a0a" stroke-width="0.95" />
<line x1="1173.15" y1="328.27" x2="1176.75" y2="328.27" stroke="#ff0a0a" stroke-width="0.9" />
<line x1="1173.15" y1="334.9" x2="1176.75" y2="334.9" stroke="#ff0a0a" stroke-width="0.9" />
<rect x="1194.5" y="349.01" width="26.1" height="101.89" fill="#0a70bc" />
<line x1="1207.55" y1="347.36" x2="1207.55" y2="350.58" stroke="#ff0a0a" stroke-width="0.95" />
<line x1="1205.75" y1="347.36" x2="1209.35" y2="347.36" stroke="#ff0a0a" stroke-width="0.9" />
<line x1="1205.75" y1="350.58" x2="1209.35" y2="350.58" stroke="#ff0a0a" stroke-width="0.9" />
<rect x="1227" y="369.06" width="26.8" height="81.84" fill="#0a70bc" />
<line x1="1240.4" y1="367.46" x2="1240.4" y2="370.28" stroke="#ff0a0a" stroke-width="0.95" />
<line x1="1238.6" y1="367.46" x2="1242.2" y2="367.46" stroke="#ff0a0a" stroke-width="0.9" />
<line x1="1238.6" y1="370.28" x2="1242.2" y2="370.28" stroke="#ff0a0a" stroke-width="0.9" />
<rect x="1259.8" y="369.87" width="26.1" height="81.03" fill="#0a70bc" />
<line x1="1272.85" y1="368.47" x2="1272.85" y2="371.48" stroke="#ff0a0a" stroke-width="0.95" />
<line x1="1271.05" y1="368.47" x2="1274.65" y2="368.47" stroke="#ff0a0a" stroke-width="0.9" />
<line x1="1271.05" y1="371.48" x2="1274.65" y2="371.48" stroke="#ff0a0a" stroke-width="0.9" />
<line x1="1172.76" y1="322.24" x2="1276.48" y2="322.24" stroke="#222" stroke-width="0.85" />
<line x1="1172.76" y1="321.84" x2="1172.76" y2="326.86" stroke="#222" stroke-width="0.85" />
<line x1="1209.15" y1="321.84" x2="1209.15" y2="326.86" stroke="#222" stroke-width="0.85" />
<line x1="1242.71" y1="321.84" x2="1242.71" y2="326.86" stroke="#222" stroke-width="0.85" />
<line x1="1276.48" y1="321.84" x2="1276.48" y2="326.86" stroke="#222" stroke-width="0.85" />
<line x1="1224.02" y1="322.24" x2="1224.02" y2="320.24" stroke="#333" stroke-width="0.6" />
<text x="1224.02" y="321.44" font-size="8.6" text-anchor="middle" fill="#222" stroke="#222" stroke-width="0.09" letter-spacing="0.9">**</text>
<line x1="1209.15" y1="336.71" x2="1277.29" y2="336.71" stroke="#222" stroke-width="0.85" />
<line x1="1209.15" y1="336.31" x2="1209.15" y2="342.34" stroke="#222" stroke-width="0.85" />
<line x1="1242.71" y1="336.31" x2="1242.71" y2="342.34" stroke="#222" stroke-width="0.85" />
<line x1="1277.29" y1="336.31" x2="1277.29" y2="342.34" stroke="#222" stroke-width="0.85" />
<line x1="1224.02" y1="336.71" x2="1224.02" y2="334.71" stroke="#333" stroke-width="0.6" />
<text x="1224.02" y="335.91" font-size="8.6" text-anchor="middle" fill="#222" stroke="#222" stroke-width="0.09" letter-spacing="0.9">**</text>
<text x="1174.4" y="458.7" font-size="6.7" text-anchor="middle" fill="#222" stroke="#222" stroke-width="0.15">PFC</text>
<text x="1174.4" y="466.1" font-size="5" text-anchor="middle" fill="#222" stroke="#222" stroke-width="0.11">158 units</text>
<text x="1207.5" y="458.7" font-size="6.7" text-anchor="middle" fill="#222" stroke="#222" stroke-width="0.15">LIP</text>
<text x="1207.5" y="466.1" font-size="5" text-anchor="middle" fill="#222" stroke="#222" stroke-width="0.11">283 units</text>
<text x="1241.7" y="457.1" font-size="6.7" text-anchor="middle" fill="#222" stroke="#222" stroke-width="0.15">MST</text>
<text x="1241.7" y="466.1" font-size="5" text-anchor="middle" fill="#222" stroke="#222" stroke-width="0.11">261 units</text>
<text x="1273.3" y="458.7" font-size="6.7" text-anchor="middle" fill="#222" stroke="#222" stroke-width="0.15">MT</text>
<text x="1273.3" y="466.1" font-size="5" text-anchor="middle" fill="#222" stroke="#222" stroke-width="0.11">74 units</text>
<text x="1120.6" y="381.35" font-size="6.4" text-anchor="middle" fill="#333" stroke="#333" stroke-width="0.14" transform="rotate(-90 1120.6 381.35)">Concentration parameter</text>
<text x="1146.8" y="476.5" font-size="6.3" textLength="161.8" lengthAdjust="spacingAndGlyphs" font-weight="bold" fill="#111" stroke="#111" stroke-width="0.14">Comparison of selectivity strength between brain areas</text>
<rect x="1138.6" y="485.1" width="174.1" height="136.3" fill="#fff" stroke="#dcdcdc" stroke-width="0.6" />
<text x="1136" y="623" font-size="4.6" text-anchor="end" fill="#666" stroke="#666" stroke-width="0.1">0</text>
<line x1="1138.6" y1="621.4" x2="1140.2" y2="621.4" stroke="#c8c8c8" stroke-width="0.4" />
<line x1="1311.1" y1="621.4" x2="1312.7" y2="621.4" stroke="#c8c8c8" stroke-width="0.4" />
<text x="1136" y="609.37" font-size="4.6" text-anchor="end" fill="#666" stroke="#666" stroke-width="0.1">0.05</text>
<line x1="1138.6" y1="607.77" x2="1140.2" y2="607.77" stroke="#c8c8c8" stroke-width="0.4" />
<line x1="1311.1" y1="607.77" x2="1312.7" y2="607.77" stroke="#c8c8c8" stroke-width="0.4" />
<text x="1136" y="595.74" font-size="4.6" text-anchor="end" fill="#666" stroke="#666" stroke-width="0.1">0.1</text>
<line x1="1138.6" y1="594.14" x2="1140.2" y2="594.14" stroke="#c8c8c8" stroke-width="0.4" />
<line x1="1311.1" y1="594.14" x2="1312.7" y2="594.14" stroke="#c8c8c8" stroke-width="0.4" />
<text x="1136" y="582.11" font-size="4.6" text-anchor="end" fill="#666" stroke="#666" stroke-width="0.1">0.15</text>
<line x1="1138.6" y1="580.51" x2="1140.2" y2="580.51" stroke="#c8c8c8" stroke-width="0.4" />
<line x1="1311.1" y1="580.51" x2="1312.7" y2="580.51" stroke="#c8c8c8" stroke-width="0.4" />
<text x="1136" y="568.48" font-size="4.6" text-anchor="end" fill="#666" stroke="#666" stroke-width="0.1">0.2</text>
<line x1="1138.6" y1="566.88" x2="1140.2" y2="566.88" stroke="#c8c8c8" stroke-width="0.4" />
<line x1="1311.1" y1="566.88" x2="1312.7" y2="566.88" stroke="#c8c8c8" stroke-width="0.4" />
<text x="1136" y="554.85" font-size="4.6" text-anchor="end" fill="#666" stroke="#666" stroke-width="0.1">0.25</text>
<line x1="1138.6" y1="553.25" x2="1140.2" y2="553.25" stroke="#c8c8c8" stroke-width="0.4" />
<line x1="1311.1" y1="553.25" x2="1312.7" y2="553.25" stroke="#c8c8c8" stroke-width="0.4" />
<text x="1136" y="541.22" font-size="4.6" text-anchor="end" fill="#666" stroke="#666" stroke-width="0.1">0.3</text>
<line x1="1138.6" y1="539.62" x2="1140.2" y2="539.62" stroke="#c8c8c8" stroke-width="0.4" />
<line x1="1311.1" y1="539.62" x2="1312.7" y2="539.62" stroke="#c8c8c8" stroke-width="0.4" />
<text x="1136" y="527.59" font-size="4.6" text-anchor="end" fill="#666" stroke="#666" stroke-width="0.1">0.35</text>
<line x1="1138.6" y1="525.99" x2="1140.2" y2="525.99" stroke="#c8c8c8" stroke-width="0.4" />
<line x1="1311.1" y1="525.99" x2="1312.7" y2="525.99" stroke="#c8c8c8" stroke-width="0.4" />
<text x="1136" y="513.96" font-size="4.6" text-anchor="end" fill="#666" stroke="#666" stroke-width="0.1">0.4</text>
<line x1="1138.6" y1="512.36" x2="1140.2" y2="512.36" stroke="#c8c8c8" stroke-width="0.4" />
<line x1="1311.1" y1="512.36" x2="1312.7" y2="512.36" stroke="#c8c8c8" stroke-width="0.4" />
<text x="1136" y="500.33" font-size="4.6" text-anchor="end" fill="#666" stroke="#666" stroke-width="0.1">0.45</text>
<line x1="1138.6" y1="498.73" x2="1140.2" y2="498.73" stroke="#c8c8c8" stroke-width="0.4" />
<line x1="1311.1" y1="498.73" x2="1312.7" y2="498.73" stroke="#c8c8c8" stroke-width="0.4" />
<text x="1136" y="486.7" font-size="4.6" text-anchor="end" fill="#666" stroke="#666" stroke-width="0.1">0.5</text>
<line x1="1138.6" y1="485.1" x2="1140.2" y2="485.1" stroke="#c8c8c8" stroke-width="0.4" />
<line x1="1311.1" y1="485.1" x2="1312.7" y2="485.1" stroke="#c8c8c8" stroke-width="0.4" />
<rect x="1164.7" y="498.18" width="26.2" height="123.22" fill="#0a70bc" />
<line x1="1177.8" y1="495.58" x2="1177.8" y2="500.8" stroke="#ff0a0a" stroke-width="0.95" />
<line x1="1176" y1="495.58" x2="1179.6" y2="495.58" stroke="#ff0a0a" stroke-width="0.9" />
<line x1="1176" y1="500.8" x2="1179.6" y2="500.8" stroke="#ff0a0a" stroke-width="0.9" />
<rect x="1196.9" y="512.63" width="26.1" height="108.77" fill="#0a70bc" />
<line x1="1209.95" y1="511.06" x2="1209.95" y2="514.27" stroke="#ff0a0a" stroke-width="0.95" />
<line x1="1208.15" y1="511.06" x2="1211.75" y2="511.06" stroke="#ff0a0a" stroke-width="0.9" />
<line x1="1208.15" y1="514.27" x2="1211.75" y2="514.27" stroke="#ff0a0a" stroke-width="0.9" />
<rect x="1229" y="531.44" width="26.2" height="89.96" fill="#0a70bc" />
<line x1="1242.1" y1="529.95" x2="1242.1" y2="532.36" stroke="#ff0a0a" stroke-width="0.95" />
<line x1="1240.3" y1="529.95" x2="1243.9" y2="529.95" stroke="#ff0a0a" stroke-width="0.9" />
<line x1="1240.3" y1="532.36" x2="1243.9" y2="532.36" stroke="#ff0a0a" stroke-width="0.9" />
<rect x="1261.2" y="531.71" width="26.1" height="89.69" fill="#0a70bc" />
<line x1="1274.25" y1="530.55" x2="1274.25" y2="532.76" stroke="#ff0a0a" stroke-width="0.95" />
<line x1="1272.45" y1="530.55" x2="1276.05" y2="530.55" stroke="#ff0a0a" stroke-width="0.9" />
<line x1="1272.45" y1="532.76" x2="1276.05" y2="532.76" stroke="#ff0a0a" stroke-width="0.9" />
<line x1="1174.77" y1="491.16" x2="1278.89" y2="491.16" stroke="#222" stroke-width="0.85" />
<line x1="1174.77" y1="490.76" x2="1174.77" y2="496.18" stroke="#222" stroke-width="0.85" />
<line x1="1211.56" y1="490.76" x2="1211.56" y2="496.18" stroke="#222" stroke-width="0.85" />
<line x1="1245.13" y1="490.76" x2="1245.13" y2="496.18" stroke="#222" stroke-width="0.85" />
<line x1="1278.89" y1="490.76" x2="1278.89" y2="496.18" stroke="#222" stroke-width="0.85" />
<line x1="1226.03" y1="491.16" x2="1226.03" y2="489.16" stroke="#333" stroke-width="0.6" />
<text x="1226.03" y="490.36" font-size="8.6" text-anchor="middle" fill="#222" stroke="#222" stroke-width="0.09" letter-spacing="0.9">**</text>
<line x1="1210.15" y1="503.62" x2="1279.5" y2="503.62" stroke="#222" stroke-width="0.85" />
<line x1="1210.15" y1="503.22" x2="1210.15" y2="508.64" stroke="#222" stroke-width="0.85" />
<line x1="1245.13" y1="503.22" x2="1245.13" y2="508.64" stroke="#222" stroke-width="0.85" />
<line x1="1279.5" y1="503.22" x2="1279.5" y2="508.64" stroke="#222" stroke-width="0.85" />
<line x1="1226.03" y1="503.62" x2="1226.03" y2="501.62" stroke="#333" stroke-width="0.6" />
<text x="1226.03" y="502.82" font-size="8.6" text-anchor="middle" fill="#222" stroke="#222" stroke-width="0.09" letter-spacing="0.9">**</text>
<text x="1177" y="639.3" font-size="6.7" text-anchor="middle" fill="#222" stroke="#222" stroke-width="0.15">PFC</text>
<text x="1177" y="647" font-size="5" text-anchor="middle" fill="#222" stroke="#222" stroke-width="0.11">158 units</text>
<text x="1210.2" y="639.3" font-size="6.7" text-anchor="middle" fill="#222" stroke="#222" stroke-width="0.15">LIP</text>
<text x="1210.2" y="647" font-size="5" text-anchor="middle" fill="#222" stroke="#222" stroke-width="0.11">283 units</text>
<text x="1244.7" y="637.7" font-size="6.7" text-anchor="middle" fill="#222" stroke="#222" stroke-width="0.15">MST</text>
<text x="1244.7" y="647" font-size="5" text-anchor="middle" fill="#222" stroke="#222" stroke-width="0.11">261 units</text>
<text x="1276.5" y="639.3" font-size="6.7" text-anchor="middle" fill="#222" stroke="#222" stroke-width="0.15">MT</text>
<text x="1276.5" y="647" font-size="5" text-anchor="middle" fill="#222" stroke="#222" stroke-width="0.11">74 units</text>
<text x="1124.4" y="553.25" font-size="6" text-anchor="middle" fill="#333" stroke="#333" stroke-width="0.13" transform="rotate(-90 1124.4 553.25)">Normalized resultant vector length</text>
<text x="464.6" y="627.4" font-size="13" textLength="242.9" lengthAdjust="spacingAndGlyphs" font-weight="bold" fill="#000" stroke="#000" stroke-width="0.29">Average tuning curves for each brain area</text>
<rect x="486.6" y="630.7" width="204.4" height="142.3" fill="#fff" stroke="#b4b4b4" stroke-width="0.55" />
<text x="485.1" y="774.5" font-size="4.2" text-anchor="end" fill="#555" stroke="#555" stroke-width="0.09">0</text>
<line x1="486.6" y1="773" x2="488.1" y2="773" stroke="#aaa" stroke-width="0.4" />
<line x1="689.5" y1="773" x2="691" y2="773" stroke="#aaa" stroke-width="0.4" />
<text x="485.1" y="750.78" font-size="4.2" text-anchor="end" fill="#555" stroke="#555" stroke-width="0.09">5</text>
<line x1="486.6" y1="749.28" x2="488.1" y2="749.28" stroke="#aaa" stroke-width="0.4" />
<line x1="689.5" y1="749.28" x2="691" y2="749.28" stroke="#aaa" stroke-width="0.4" />
<text x="485.1" y="727.07" font-size="4.2" text-anchor="end" fill="#555" stroke="#555" stroke-width="0.09">10</text>
<line x1="486.6" y1="725.57" x2="488.1" y2="725.57" stroke="#aaa" stroke-width="0.4" />
<line x1="689.5" y1="725.57" x2="691" y2="725.57" stroke="#aaa" stroke-width="0.4" />
<text x="485.1" y="703.35" font-size="4.2" text-anchor="end" fill="#555" stroke="#555" stroke-width="0.09">15</text>
<line x1="486.6" y1="701.85" x2="488.1" y2="701.85" stroke="#aaa" stroke-width="0.4" />
<line x1="689.5" y1="701.85" x2="691" y2="701.85" stroke="#aaa" stroke-width="0.4" />
<text x="485.1" y="679.63" font-size="4.2" text-anchor="end" fill="#555" stroke="#555" stroke-width="0.09">20</text>
<line x1="486.6" y1="678.13" x2="488.1" y2="678.13" stroke="#aaa" stroke-width="0.4" />
<line x1="689.5" y1="678.13" x2="691" y2="678.13" stroke="#aaa" stroke-width="0.4" />
<text x="485.1" y="655.92" font-size="4.2" text-anchor="end" fill="#555" stroke="#555" stroke-width="0.09">25</text>
<line x1="486.6" y1="654.42" x2="488.1" y2="654.42" stroke="#aaa" stroke-width="0.4" />
<line x1="689.5" y1="654.42" x2="691" y2="654.42" stroke="#aaa" stroke-width="0.4" />
<text x="485.1" y="632.2" font-size="4.2" text-anchor="end" fill="#555" stroke="#555" stroke-width="0.09">30</text>
<line x1="486.6" y1="630.7" x2="488.1" y2="630.7" stroke="#aaa" stroke-width="0.4" />
<line x1="689.5" y1="630.7" x2="691" y2="630.7" stroke="#aaa" stroke-width="0.4" />
<text x="486.6" y="779.3" font-size="4.2" text-anchor="middle" fill="#555" stroke="#555" stroke-width="0.09">0</text>
<line x1="486.6" y1="773" x2="486.6" y2="771.5" stroke="#aaa" stroke-width="0.4" />
<line x1="486.6" y1="630.7" x2="486.6" y2="632.2" stroke="#aaa" stroke-width="0.4" />
<text x="512.15" y="779.3" font-size="4.2" text-anchor="middle" fill="#555" stroke="#555" stroke-width="0.09">50</text>
<line x1="512.15" y1="773" x2="512.15" y2="771.5" stroke="#aaa" stroke-width="0.4" />
<line x1="512.15" y1="630.7" x2="512.15" y2="632.2" stroke="#aaa" stroke-width="0.4" />
<text x="537.7" y="779.3" font-size="4.2" text-anchor="middle" fill="#555" stroke="#555" stroke-width="0.09">100</text>
<line x1="537.7" y1="773" x2="537.7" y2="771.5" stroke="#aaa" stroke-width="0.4" />
<line x1="537.7" y1="630.7" x2="537.7" y2="632.2" stroke="#aaa" stroke-width="0.4" />
<text x="563.25" y="779.3" font-size="4.2" text-anchor="middle" fill="#555" stroke="#555" stroke-width="0.09">150</text>
<line x1="563.25" y1="773" x2="563.25" y2="771.5" stroke="#aaa" stroke-width="0.4" />
<line x1="563.25" y1="630.7" x2="563.25" y2="632.2" stroke="#aaa" stroke-width="0.4" />
<text x="588.8" y="779.3" font-size="4.2" text-anchor="middle" fill="#555" stroke="#555" stroke-width="0.09">200</text>
<line x1="588.8" y1="773" x2="588.8" y2="771.5" stroke="#aaa" stroke-width="0.4" />
<line x1="588.8" y1="630.7" x2="588.8" y2="632.2" stroke="#aaa" stroke-width="0.4" />
<text x="614.35" y="779.3" font-size="4.2" text-anchor="middle" fill="#555" stroke="#555" stroke-width="0.09">250</text>
<line x1="614.35" y1="773" x2="614.35" y2="771.5" stroke="#aaa" stroke-width="0.4" />
<line x1="614.35" y1="630.7" x2="614.35" y2="632.2" stroke="#aaa" stroke-width="0.4" />
<text x="639.9" y="779.3" font-size="4.2" text-anchor="middle" fill="#555" stroke="#555" stroke-width="0.09">300</text>
<line x1="639.9" y1="773" x2="639.9" y2="771.5" stroke="#aaa" stroke-width="0.4" />
<line x1="639.9" y1="630.7" x2="639.9" y2="632.2" stroke="#aaa" stroke-width="0.4" />
<text x="665.45" y="779.3" font-size="4.2" text-anchor="middle" fill="#555" stroke="#555" stroke-width="0.09">350</text>
<line x1="665.45" y1="773" x2="665.45" y2="771.5" stroke="#aaa" stroke-width="0.4" />
<line x1="665.45" y1="630.7" x2="665.45" y2="632.2" stroke="#aaa" stroke-width="0.4" />
<text x="691" y="779.3" font-size="4.2" text-anchor="middle" fill="#555" stroke="#555" stroke-width="0.09">400</text>
<line x1="691" y1="773" x2="691" y2="771.5" stroke="#aaa" stroke-width="0.4" />
<line x1="691" y1="630.7" x2="691" y2="632.2" stroke="#aaa" stroke-width="0.4" />
<text x="588.7" y="786.3" font-size="4.8" text-anchor="middle" fill="#444" stroke="#444" stroke-width="0.11">Degrees</text>
<text x="477.3" y="701.6" font-size="4.5" text-anchor="middle" fill="#444" stroke="#444" stroke-width="0.1" transform="rotate(-90 477.3 701.6)">Increase in firing rate</text>
<path d="M486.6 738.31 L488.64 739.4 L490.69 740.37 L492.73 741.24 L494.78 742 L496.82 742.67 L498.86 743.25 L500.91 743.75 L502.95 744.16 L505 744.5 L507.04 744.76 L509.08 744.95 L511.13 745.07 L513.17 745.13 L515.22 745.11 L517.26 745.02 L519.3 744.87 L521.35 744.64 L523.39 744.34 L525.44 743.97 L527.48 743.51 L529.52 742.97 L531.57 742.35 L533.61 741.63 L535.66 740.82 L537.7 739.9 L539.74 738.87 L541.79 737.72 L543.83 736.45 L545.88 735.05 L547.92 733.5 L549.96 731.82 L552.01 729.97 L554.05 727.97 L556.1 725.81 L558.14 723.48 L560.18 720.98 L562.23 718.31 L564.27 715.47 L566.32 712.48 L568.36 709.34 L570.4 706.07 L572.45 702.67 L574.49 699.19 L576.54 695.63 L578.58 692.04 L580.62 688.45 L582.67 684.9 L584.71 681.43 L586.76 678.08 L588.8 674.91 L590.84 671.95 L592.89 669.26 L594.93 666.88 L596.98 664.85 L599.02 663.2 L601.06 661.97 L603.11 661.18 L605.15 660.83 L607.2 660.95 L609.24 661.52 L611.28 662.54 L613.33 663.98 L615.37 665.82 L617.42 668.03 L619.46 670.57 L621.5 673.4 L623.55 676.47 L625.59 679.74 L627.64 683.15 L629.68 686.67 L631.72 690.25 L633.77 693.84 L635.81 697.42 L637.86 700.94 L639.9 704.38 L641.94 707.72 L643.99 710.93 L646.03 714 L648.08 716.91 L650.12 719.66 L652.16 722.25 L654.21 724.66 L656.25 726.91 L658.3 728.99 L660.34 730.91 L662.38 732.68 L664.43 734.29 L666.47 735.77 L668.52 737.1 L670.56 738.31" stroke="#ff9696" stroke-width="0.6" fill="none" />
<path d="M486.6 739.17 L488.64 740.26 L490.69 741.22 L492.73 742.09 L494.78 742.85 L496.82 743.51 L498.86 744.09 L500.91 744.58 L502.95 745 L505 745.33 L507.04 745.59 L509.08 745.78 L511.13 745.9 L513.17 745.96 L515.22 745.94 L517.26 745.85 L519.3 745.7 L521.35 745.47 L523.39 745.17 L525.44 744.8 L527.48 744.35 L529.52 743.81 L531.57 743.19 L533.61 742.48 L535.66 741.67 L537.7 740.75 L539.74 739.73 L541.79 738.59 L543.83 737.32 L545.88 735.93 L547.92 734.39 L549.96 732.71 L552.01 730.88 L554.05 728.88 L556.1 726.73 L558.14 724.41 L560.18 721.92 L562.23 719.26 L564.27 716.44 L566.32 713.47 L568.36 710.34 L570.4 707.08 L572.45 703.71 L574.49 700.24 L576.54 696.7 L578.58 693.13 L580.62 689.55 L582.67 686.02 L584.71 682.56 L586.76 679.23 L588.8 676.07 L590.84 673.13 L592.89 670.46 L594.93 668.09 L596.98 666.07 L599.02 664.43 L601.06 663.2 L603.11 662.41 L605.15 662.07 L607.2 662.18 L609.24 662.75 L611.28 663.76 L613.33 665.2 L615.37 667.03 L617.42 669.23 L619.46 671.76 L621.5 674.57 L623.55 677.63 L625.59 680.88 L627.64 684.28 L629.68 687.78 L631.72 691.34 L633.77 694.92 L635.81 698.48 L637.86 701.98 L639.9 705.41 L641.94 708.73 L643.99 711.92 L646.03 714.98 L648.08 717.87 L650.12 720.61 L652.16 723.19 L654.21 725.59 L656.25 727.83 L658.3 729.9 L660.34 731.81 L662.38 733.57 L664.43 735.18 L666.47 736.64 L668.52 737.97 L670.56 739.17" stroke="#8c8cff" stroke-width="0.6" fill="none" />
<path d="M486.6 744.21 L488.64 745.49 L490.69 746.62 L492.73 747.63 L494.78 748.52 L496.82 749.3 L498.86 749.97 L500.91 750.54 L502.95 751.02 L505 751.4 L507.04 751.71 L509.08 751.93 L511.13 752.07 L513.17 752.12 L515.22 752.11 L517.26 752.01 L519.3 751.83 L521.35 751.57 L523.39 751.22 L525.44 750.79 L527.48 750.26 L529.52 749.64 L531.57 748.92 L533.61 748.09 L535.66 747.14 L537.7 746.07 L539.74 744.87 L541.79 743.52 L543.83 742.03 L545.88 740.38 L547.92 738.55 L549.96 736.55 L552.01 734.36 L554.05 731.97 L556.1 729.38 L558.14 726.57 L560.18 723.56 L562.23 720.33 L564.27 716.88 L566.32 713.24 L568.36 709.4 L570.4 705.38 L572.45 701.2 L574.49 696.9 L576.54 692.49 L578.58 688.03 L580.62 683.56 L582.67 679.12 L584.71 674.77 L586.76 670.57 L588.8 666.58 L590.84 662.86 L592.89 659.46 L594.93 656.45 L596.98 653.88 L599.02 651.8 L601.06 650.23 L603.11 649.23 L605.15 648.79 L607.2 648.94 L609.24 649.66 L611.28 650.95 L613.33 652.78 L615.37 655.11 L617.42 657.91 L619.46 661.12 L621.5 664.68 L623.55 668.55 L625.59 672.65 L627.64 676.93 L629.68 681.33 L631.72 685.8 L633.77 690.27 L635.81 694.71 L637.86 699.06 L639.9 703.31 L641.94 707.41 L643.99 711.34 L646.03 715.09 L648.08 718.63 L650.12 721.97 L652.16 725.09 L654.21 728 L656.25 730.7 L658.3 733.19 L660.34 735.48 L662.38 737.57 L664.43 739.49 L666.47 741.22 L668.52 742.8 L670.56 744.21" stroke="#8af08a" stroke-width="0.6" fill="none" />
<path d="M486.6 748.28 L488.64 749.61 L490.69 750.79 L492.73 751.83 L494.78 752.75 L496.82 753.55 L498.86 754.23 L500.91 754.81 L502.95 755.3 L505 755.69 L507.04 756 L509.08 756.22 L511.13 756.36 L513.17 756.42 L515.22 756.4 L517.26 756.3 L519.3 756.12 L521.35 755.86 L523.39 755.51 L525.44 755.07 L527.48 754.54 L529.52 753.9 L531.57 753.16 L533.61 752.31 L535.66 751.33 L537.7 750.22 L539.74 748.96 L541.79 747.55 L543.83 745.98 L545.88 744.22 L547.92 742.28 L549.96 740.12 L552.01 737.75 L554.05 735.15 L556.1 732.31 L558.14 729.21 L560.18 725.86 L562.23 722.24 L564.27 718.36 L566.32 714.22 L568.36 709.83 L570.4 705.2 L572.45 700.37 L574.49 695.35 L576.54 690.19 L578.58 684.93 L580.62 679.62 L582.67 674.33 L584.71 669.12 L586.76 664.06 L588.8 659.23 L590.84 654.72 L592.89 650.58 L594.93 646.91 L596.98 643.76 L599.02 641.2 L601.06 639.28 L603.11 638.04 L605.15 637.51 L607.2 637.68 L609.24 638.58 L611.28 640.16 L613.33 642.4 L615.37 645.26 L617.42 648.68 L619.46 652.6 L621.5 656.93 L623.55 661.61 L625.59 666.56 L627.64 671.71 L629.68 676.97 L631.72 682.27 L633.77 687.57 L635.81 692.78 L637.86 697.88 L639.9 702.81 L641.94 707.54 L643.99 712.05 L646.03 716.32 L648.08 720.33 L650.12 724.08 L652.16 727.57 L654.21 730.79 L656.25 733.76 L658.3 736.48 L660.34 738.96 L662.38 741.23 L664.43 743.27 L666.47 745.12 L668.52 746.79 L670.56 748.28" stroke="#8c8c8c" stroke-width="0.6" fill="none" />
<rect x="660.3" y="633.6" width="27.2" height="24.6" fill="#fff" stroke="#aaa" stroke-width="0.45" />
<line x1="661.6" y1="637.07" x2="675.5" y2="637.07" stroke="#ff8a8a" stroke-width="0.55" />
<text x="677" y="638.47" font-size="3.9" fill="#555" stroke="#555" stroke-width="0.09">PFC</text>
<line x1="661.6" y1="642.86" x2="675.5" y2="642.86" stroke="#7a7aff" stroke-width="0.55" />
<text x="677" y="644.26" font-size="3.9" fill="#555" stroke="#555" stroke-width="0.09">LIP</text>
<line x1="661.6" y1="648.65" x2="675.5" y2="648.65" stroke="#7af07a" stroke-width="0.55" />
<text x="677" y="650.05" font-size="3.9" fill="#555" stroke="#555" stroke-width="0.09">MST</text>
<line x1="661.6" y1="654.44" x2="675.5" y2="654.44" stroke="#7a7a7a" stroke-width="0.55" />
<text x="677" y="655.84" font-size="3.9" fill="#555" stroke="#555" stroke-width="0.09">MT</text>
<rect x="1330.8" y="650.5" width="1.8" height="129.7" fill="#fff" />
<text x="822.5" y="666.1" font-size="13.2" textLength="47.9" lengthAdjust="spacingAndGlyphs" font-weight="bold" fill="#000" stroke="#000" stroke-width="0.29">Results:</text>
<text x="822.6" y="686.7" font-size="7" font-weight="bold" fill="#222" stroke="#222" stroke-width="0.15">.</text>
<text x="822.6" y="705.2" font-size="7" font-weight="bold" fill="#222" stroke="#222" stroke-width="0.15">.</text>
<text x="822.6" y="723.4" font-size="7" font-weight="bold" fill="#222" stroke="#222" stroke-width="0.15">.</text>
<text x="822.6" y="741.6" font-size="7" font-weight="bold" fill="#222" stroke="#222" stroke-width="0.15">.</text>
<text x="822.6" y="760.2" font-size="7" font-weight="bold" fill="#222" stroke="#222" stroke-width="0.15">.</text>
<text x="828.9" y="686.7" font-size="10" textLength="66" lengthAdjust="spacingAndGlyphs" fill="#1a1a1a" stroke="#1a1a1a" stroke-width="0.22">Concentration:</text>
<text x="850.6" y="705.2" font-size="10" textLength="470.4" lengthAdjust="spacingAndGlyphs" fill="#1a1a1a" stroke="#1a1a1a" stroke-width="0.22">MT tuning is significantly tighter than MST which is significantly tighter than both LIP and PFC (p &lt; 0.0005)</text>
<text x="828.9" y="723.4" font-size="10" textLength="83.7" lengthAdjust="spacingAndGlyphs" fill="#1a1a1a" stroke="#1a1a1a" stroke-width="0.22">Strength of tuning:</text>
<text x="850.6" y="741.6" font-size="10" textLength="454.1" lengthAdjust="spacingAndGlyphs" fill="#1a1a1a" stroke="#1a1a1a" stroke-width="0.22">MT is significantly stronger than MST which is significantly stronger than both LIP and PFC (p &lt; 0.0005)</text>
<text x="828.9" y="760.2" font-size="10" textLength="455.7" lengthAdjust="spacingAndGlyphs" fill="#1a1a1a" stroke="#1a1a1a" stroke-width="0.22">LIP and PFC are very similar, but the most selective neurons in LIP are more selective than those in PFC</text>
<text x="366.9" y="816.1" font-size="13.2" textLength="73" lengthAdjust="spacingAndGlyphs" font-weight="bold" fill="#000" stroke="#000" stroke-width="0.29">Conclusions:</text>
<text x="373.91" y="836.04" font-size="9.25" textLength="266.05" lengthAdjust="spacingAndGlyphs" fill="#1a1a1a" stroke="#1a1a1a" stroke-width="0.2">The selective response strength decreases as information travels</text>
<text x="366.7" y="836.04" font-size="7" font-weight="bold" fill="#222" stroke="#222" stroke-width="0.15">.</text>
<text x="373.91" y="850.98" font-size="9.25" textLength="117.47" lengthAdjust="spacingAndGlyphs" fill="#1a1a1a" stroke="#1a1a1a" stroke-width="0.2">through the visual hierarchy.</text>
<text x="373.91" y="867.9" font-size="9.25" textLength="297.16" lengthAdjust="spacingAndGlyphs" fill="#1a1a1a" stroke="#1a1a1a" stroke-width="0.2">The specificity of selectivity for direction (tuning curve width) decreases</text>
<text x="366.7" y="867.9" font-size="7" font-weight="bold" fill="#222" stroke="#222" stroke-width="0.15">.</text>
<text x="373.91" y="882.58" font-size="9.25" textLength="209.31" lengthAdjust="spacingAndGlyphs" fill="#1a1a1a" stroke="#1a1a1a" stroke-width="0.2">as information travels through the visual hierarchy.</text>
<text x="373.91" y="900" font-size="9.25" textLength="278.5" lengthAdjust="spacingAndGlyphs" fill="#1a1a1a" stroke="#1a1a1a" stroke-width="0.2">Tuning strength and width changed most rapidly in early stages and</text>
<text x="366.7" y="900" font-size="7" font-weight="bold" fill="#222" stroke="#222" stroke-width="0.15">.</text>
<text x="373.91" y="914.94" font-size="9.25" textLength="249.13" lengthAdjust="spacingAndGlyphs" fill="#1a1a1a" stroke="#1a1a1a" stroke-width="0.2">were more similar between the two later areas, LIP and PFC.</text>
<text x="373.91" y="931.86" font-size="9.25" textLength="297.16" lengthAdjust="spacingAndGlyphs" fill="#1a1a1a" stroke="#1a1a1a" stroke-width="0.2">Differences in tuning curve strength and width between areas may have</text>
<text x="366.7" y="931.86" font-size="7" font-weight="bold" fill="#222" stroke="#222" stroke-width="0.15">.</text>
<text x="373.91" y="946.79" font-size="9.25" textLength="297.16" lengthAdjust="spacingAndGlyphs" fill="#1a1a1a" stroke="#1a1a1a" stroke-width="0.2">implications on the contributions of different visual processing stages to</text>
<text x="373.91" y="961.73" font-size="9.25" textLength="136.64" lengthAdjust="spacingAndGlyphs" fill="#1a1a1a" stroke="#1a1a1a" stroke-width="0.2">perception and working memory.</text>
<text x="689.2" y="816.1" font-size="13.2" textLength="104.8" lengthAdjust="spacingAndGlyphs" font-weight="bold" fill="#000" stroke="#000" stroke-width="0.29">Future Directions:</text>
<text x="695.91" y="833.71" font-size="10.5" textLength="295.17" lengthAdjust="spacingAndGlyphs" fill="#1a1a1a" stroke="#1a1a1a" stroke-width="0.23">Make an anatomical map of response properties as they change in</text>
<text x="688.44" y="833.71" font-size="7" font-weight="bold" fill="#222" stroke="#222" stroke-width="0.15">.</text>
<text x="695.91" y="849.39" font-size="10.5" textLength="40.07" lengthAdjust="spacingAndGlyphs" fill="#1a1a1a" stroke="#1a1a1a" stroke-width="0.23">the brain</text>
<text x="695.91" y="868.05" font-size="10.5" textLength="193.63" lengthAdjust="spacingAndGlyphs" fill="#1a1a1a" stroke="#1a1a1a" stroke-width="0.23">Compare response latencies between areas</text>
<text x="688.44" y="868.05" font-size="7" font-weight="bold" fill="#222" stroke="#222" stroke-width="0.15">.</text>
<text x="695.91" y="886.22" font-size="10.5" textLength="169.99" lengthAdjust="spacingAndGlyphs" fill="#1a1a1a" stroke="#1a1a1a" stroke-width="0.23">Characterize receptive field properties</text>
<text x="688.44" y="886.22" font-size="7" font-weight="bold" fill="#222" stroke="#222" stroke-width="0.15">.</text>
<text x="695.91" y="904.64" font-size="10.5" textLength="294.43" lengthAdjust="spacingAndGlyphs" fill="#1a1a1a" stroke="#1a1a1a" stroke-width="0.23">Generate computational models of visual feature processing using</text>
<text x="688.44" y="904.64" font-size="7" font-weight="bold" fill="#222" stroke="#222" stroke-width="0.15">.</text>
<text x="695.91" y="920.32" font-size="10.5" textLength="302.14" lengthAdjust="spacingAndGlyphs" fill="#1a1a1a" stroke="#1a1a1a" stroke-width="0.23">data from independent areas vs integrated information across areas</text>
<text x="717.31" y="937.74" font-size="9.7" textLength="141.86" lengthAdjust="spacingAndGlyphs" fill="#1a1a1a" stroke="#1a1a1a" stroke-width="0.21">Use for models of computer vision</text>
<text x="688.44" y="937.74" font-size="7" font-weight="bold" fill="#222" stroke="#222" stroke-width="0.15">.</text>
<text x="717.31" y="952.67" font-size="9.7" textLength="266.8" lengthAdjust="spacingAndGlyphs" fill="#1a1a1a" stroke="#1a1a1a" stroke-width="0.21">Use for studying how feature specificity is maintained in working</text>
<text x="688.44" y="952.67" font-size="7" font-weight="bold" fill="#222" stroke="#222" stroke-width="0.15">.</text>
<text x="717.31" y="965.12" font-size="9.7" textLength="34.84" lengthAdjust="spacingAndGlyphs" fill="#1a1a1a" stroke="#1a1a1a" stroke-width="0.21">memory</text>
<text x="1016.9" y="816.1" font-size="13.2" textLength="52" lengthAdjust="spacingAndGlyphs" font-weight="bold" fill="#000" stroke="#000" stroke-width="0.29">Sources:</text>
<text x="1016.95" y="826.59" font-size="3.6" textLength="187.16" lengthAdjust="spacingAndGlyphs" fill="#3c3c3c" stroke="#3c3c3c" stroke-width="0.03">Albright, T., &amp; Desimone, R. (1987). Local precision of visuotopic organization in the middle temporal area (MT) of the</text>
<text x="1031.13" y="833.55" font-size="3.6" textLength="113.74" lengthAdjust="spacingAndGlyphs" fill="#3c3c3c" stroke="#3c3c3c" stroke-width="0.03">macaque. Experimental Brain Research, 65(3). doi:10.1007/bf00235981</text>
<text x="1016.95" y="840.77" font-size="3.6" textLength="198.86" lengthAdjust="spacingAndGlyphs" fill="#3c3c3c" stroke="#3c3c3c" stroke-width="0.03">Grossberg, S. (1999). A Neural Model of Motion Processing and Visual Navigation by Cortical Area MST. Cerebral Cortex, 9(8),</text>
<text x="1031.13" y="847.74" font-size="3.6" textLength="58.98" lengthAdjust="spacingAndGlyphs" fill="#3c3c3c" stroke="#3c3c3c" stroke-width="0.03">878-895. doi:10.1093/cercor/9.8.878</text>
<text x="1016.95" y="854.96" font-size="3.6" textLength="200.85" lengthAdjust="spacingAndGlyphs" fill="#3c3c3c" stroke="#3c3c3c" stroke-width="0.03">Hamed, S. B., Duhamel, J., Bremmer, F., &amp; Graf, W. (2001). Representation of the visual field in the lateral intraparietal area of</text>
<text x="1031.13" y="862.18" font-size="3.6" textLength="165.01" lengthAdjust="spacingAndGlyphs" fill="#3c3c3c" stroke="#3c3c3c" stroke-width="0.03">macaque monkeys: A quantitative receptive field analysis. Experimental Brain Research, 140(2), 127-144.</text>
<text x="1031.13" y="869.14" font-size="3.6" textLength="46.04" lengthAdjust="spacingAndGlyphs" fill="#3c3c3c" stroke="#3c3c3c" stroke-width="0.03">doi:10.1007/s002210100785</text>
<text x="1016.95" y="876.36" font-size="3.6" textLength="180.94" lengthAdjust="spacingAndGlyphs" fill="#3c3c3c" stroke="#3c3c3c" stroke-width="0.03">Lagae, L., Raiguel, S., &amp; Orban, G. A. (1993). Speed and direction selectivity of macaque middle temporal neurons.</text>
<text x="1031.13" y="883.33" font-size="3.6" textLength="111.5" lengthAdjust="spacingAndGlyphs" fill="#3c3c3c" stroke="#3c3c3c" stroke-width="0.03">Journal of Neurophysiology, 69(1), 19-39. doi:10.1152/jn.1993.69.1.19</text>
<text x="1016.95" y="890.55" font-size="3.3" textLength="309.11" lengthAdjust="spacingAndGlyphs" fill="#3c3c3c" stroke="#3c3c3c" stroke-width="0.03">Mendoza-Halliday, D., &amp; Martinez-Trujillo, J. C. (2017). Neuronal population coding of perceived and memorized visual features in the lateral prefrontal cortex. Nature Communications, 8, 15471.</text>
<text x="1031.13" y="895.28" font-size="3.6" textLength="43.55" lengthAdjust="spacingAndGlyphs" fill="#3c3c3c" stroke="#3c3c3c" stroke-width="0.03">doi:10.1038/ncomms15471</text>
<text x="1016.95" y="902.49" font-size="3.3" textLength="299.9" lengthAdjust="spacingAndGlyphs" fill="#3c3c3c" stroke="#3c3c3c" stroke-width="0.03">Mineault, P. J., Khawaja, F. A., Butts, D. A., &amp; Pack, C. C. (2012). Hierarchical processing of complex motion along the primate dorsal visual pathway. Proceedings of the National Academy of</text>
<text x="1031.13" y="909.46" font-size="3.6" textLength="77.9" lengthAdjust="spacingAndGlyphs" fill="#3c3c3c" stroke="#3c3c3c" stroke-width="0.03">Sciences, 109(16). doi:10.1073/pnas.1115685109</text>
<text x="1016.9" y="927.6" font-size="13.2" textLength="118.8" lengthAdjust="spacingAndGlyphs" font-weight="bold" fill="#000" stroke="#000" stroke-width="0.29">Acknowledgments:</text>
<text x="1016.95" y="938.08" font-size="4.4" textLength="40.32" lengthAdjust="spacingAndGlyphs" fill="#222" stroke="#222" stroke-width="0.1">Dr. Robert Desimone</text>
<text x="1073.44" y="938.08" font-size="4.4" textLength="46.79" lengthAdjust="spacingAndGlyphs" fill="#222" stroke="#222" stroke-width="0.1">Diego Mendoza-halliday</text>
<text x="1129.94" y="938.08" font-size="4.4" textLength="35.59" lengthAdjust="spacingAndGlyphs" fill="#222" stroke="#222" stroke-width="0.1">Frederico Azevedo</text>
<text x="1172.99" y="938.08" font-size="4.4" textLength="39.32" lengthAdjust="spacingAndGlyphs" fill="#222" stroke="#222" stroke-width="0.1">Morteanna Sassanfar</text>
<text x="1016.95" y="947.54" font-size="4.4" textLength="192.14" lengthAdjust="spacingAndGlyphs" fill="#222" stroke="#222" stroke-width="0.1">This material is based upon work supported by the Center for Brains, Minds, and Machines (CBMM),</text>
<text x="1016.95" y="956.25" font-size="4.4" textLength="210.3" lengthAdjust="spacingAndGlyphs" fill="#222" stroke="#222" stroke-width="0.1">funded by NSF STC award CCF-1231216, and supported by the Brain and Cognitive Science Department and the</text>
<text x="1016.95" y="962.97" font-size="4.4" textLength="41.56" lengthAdjust="spacingAndGlyphs" fill="#222" stroke="#222" stroke-width="0.1">MIT School of Science</text>
<rect x="1234.2" y="953.7" width="2.5" height="2.5" fill="#1b7fa6" />
<rect x="1234.2" y="957.05" width="2.5" height="2.5" fill="#1b7fa6" />
<rect x="1234.2" y="960.4" width="2.5" height="2.5" fill="#1b7fa6" />
<rect x="1234.2" y="963.75" width="2.5" height="2.5" fill="#8c8c8c" />
<rect x="1237.5" y="950.35" width="2.5" height="2.5" fill="#5aa7c4" />
<rect x="1240.8" y="947" width="2.5" height="2.5" fill="#8c8c8c" />
<rect x="1240.8" y="950.35" width="2.5" height="2.5" fill="#8c8c8c" />
<rect x="1240.8" y="953.7" width="2.5" height="2.5" fill="#0f5f80" />
<rect x="1240.8" y="957.05" width="2.5" height="2.5" fill="#5aa7c4" />
<rect x="1240.8" y="960.4" width="2.5" height="2.5" fill="#0f5f80" />
<rect x="1240.8" y="963.75" width="2.5" height="2.5" fill="#1b7fa6" />
<rect x="1244.1" y="947" width="2.5" height="2.5" fill="#0f5f80" />
<rect x="1244.1" y="953.7" width="2.5" height="2.5" fill="#5aa7c4" />
<rect x="1244.1" y="957.05" width="2.5" height="2.5" fill="#c9c9c9" />
<rect x="1244.1" y="963.75" width="2.5" height="2.5" fill="#c9c9c9" />
<rect x="1247.4" y="957.05" width="2.5" height="2.5" fill="#0f5f80" />
<rect x="1247.4" y="960.4" width="2.5" height="2.5" fill="#8c8c8c" />
<rect x="1247.4" y="963.75" width="2.5" height="2.5" fill="#0f5f80" />
<rect x="1250.7" y="947" width="2.5" height="2.5" fill="#c9c9c9" />
<rect x="1250.7" y="950.35" width="2.5" height="2.5" fill="#0f5f80" />
<rect x="1250.7" y="953.7" width="2.5" height="2.5" fill="#8c8c8c" />
<rect x="1250.7" y="957.05" width="2.5" height="2.5" fill="#1b7fa6" />
<rect x="1250.7" y="963.75" width="2.5" height="2.5" fill="#1b7fa6" />
<text x="1255.9" y="957.2" font-size="10.4" textLength="24.8" lengthAdjust="spacingAndGlyphs" font-weight="bold" fill="#1786ad" stroke="#1786ad" stroke-width="0.23">brain</text>
<text x="1281" y="957.2" font-size="10" fill="#a9c8d6" stroke="#a9c8d6" stroke-width="0.22">+</text>
<text x="1287.3" y="957.2" font-size="10.4" textLength="43.2" lengthAdjust="spacingAndGlyphs" font-weight="bold" fill="#1786ad" stroke="#1786ad" stroke-width="0.23">cognitive</text>
<text x="1255.9" y="967.6" font-size="10.4" textLength="41.6" lengthAdjust="spacingAndGlyphs" fill="#9a9a9a" stroke="#9a9a9a" stroke-width="0.23">sciences</text>
<line x1="1234" y1="968.3" x2="1330.5" y2="968.3" stroke="#d0d0d0" stroke-width="0.4" />
</svg>
<div id="topbar"><div id="skip">Skip to page</div><div id="acc"><i></i><b><span>Accessibility</span></b></div></div>
<div id="botbar"><div id="pg">1</div><div id="sl">/</div><div id="tot">1</div><div class="zb" id="zout"></div><div class="zb" id="zin"></div></div>
</body></html>
